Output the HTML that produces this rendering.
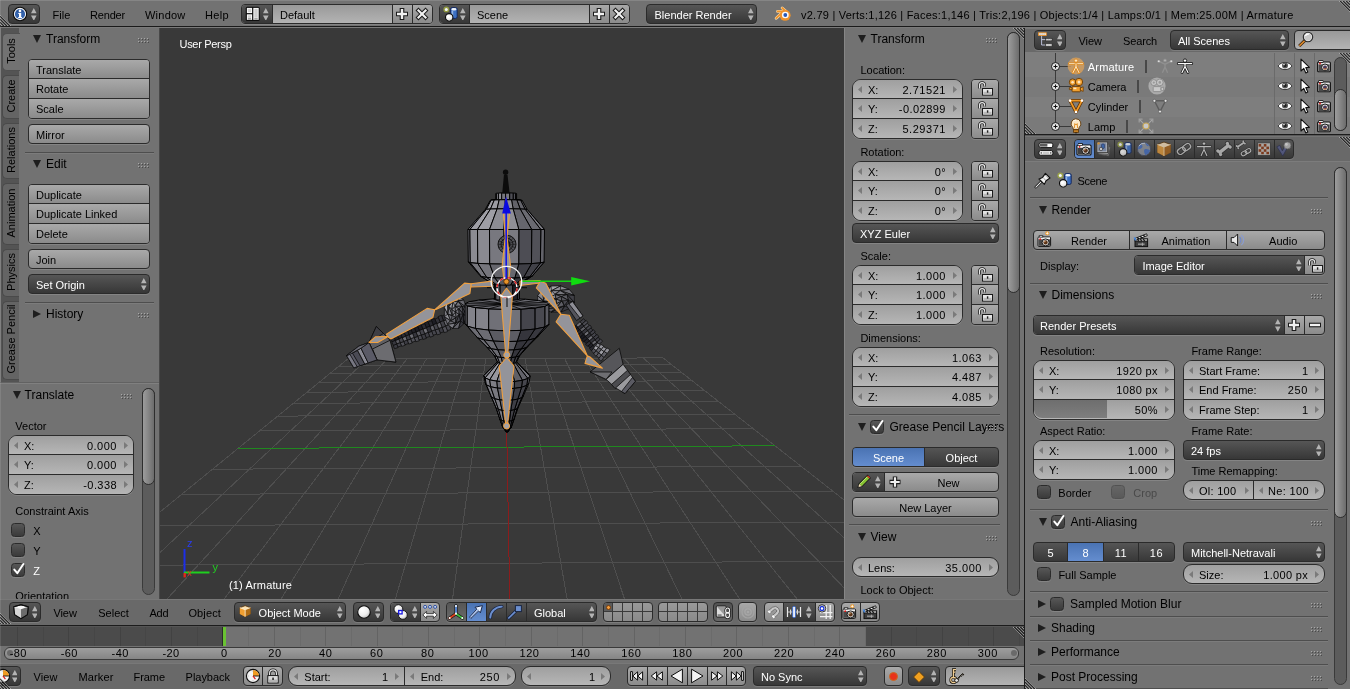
<!DOCTYPE html>
<html><head><meta charset="utf-8"><title>Blender</title>
<style>
html,body{margin:0;padding:0;background:#727272;}
body{width:1350px;height:689px;position:relative;overflow:hidden;font-family:"Liberation Sans",sans-serif;}
#r div,#r span,#r svg{position:absolute;box-sizing:content-box;}
#r{position:absolute;left:0;top:0;width:1350px;height:689px;overflow:hidden;}
.t{white-space:nowrap;line-height:16px;height:16px;}
#r{will-change:transform;transform:translateZ(0);}
.clip{overflow:hidden;}
</style></head><body><div id="r">
<div style="left:160px;top:28px;width:685px;height:571px;background:#393939;"></div>
<!--VIEWPORT-->
<svg style="left:160px;top:28px" width="685" height="571" viewBox="160 28 685 571">
<path d="M347.5 359.2 L663.0 357.9 M339.1 366.1 L671.7 364.7 M329.6 373.8 L681.4 372.3 M319.0 382.5 L692.2 380.8 M307.1 392.2 L704.5 390.4 M293.4 403.3 L718.4 401.4 M277.8 416.1 L734.5 414.0 M259.5 430.9 L753.1 428.6 M212.6 469.2 L801.2 466.3 M181.6 494.4 L832.8 491.1 M143.2 525.7 L872.0 521.9 M94.4 565.5 L921.7 560.9 M30.4 617.7 L987.0 612.1 M-57.6 689.4 L1076.4 682.3 M-185.7 793.8 L1206.3 784.1 M-389.7 960.0 L1412.2 945.7 M347.5 359.2 L-115.1 736.2 M367.3 359.2 L-36.4 735.7 M387.0 359.1 L42.2 735.2 M406.8 359.0 L120.7 734.7 M426.5 358.9 L199.2 734.2 M446.3 358.8 L277.6 733.6 M466.0 358.7 L355.9 733.1 M485.7 358.6 L434.1 732.6 M525.1 358.5 L590.3 731.6 M544.8 358.4 L668.3 731.1 M564.5 358.3 L746.2 730.6 M584.2 358.2 L824.1 730.1 M603.9 358.1 L901.8 729.5 M623.6 358.1 L979.5 729.0 M643.3 358.0 L1057.2 728.5 M663.0 357.9 L1134.7 728.0" stroke="#4e4e4e" stroke-width="1" fill="none" shape-rendering="crispEdges"/>
<path d="M238.1 448.4 L775.0 445.8" stroke="#20881f" stroke-width="1" shape-rendering="crispEdges"/>
<path d="M505.4 358.6 L512.2 732.1" stroke="#8c1c1c" stroke-width="1" shape-rendering="crispEdges"/>
<polygon points="450.9,329.5 447.4,330.6 445.5,325.9 449.0,324.6" fill="#48484f" stroke="#0a0a0a" stroke-width="0.7" stroke-linejoin="round" />
<polygon points="449.0,324.6 445.5,325.9 443.5,320.8 447.0,319.4" fill="#696970" stroke="#0a0a0a" stroke-width="0.7" stroke-linejoin="round" />
<polygon points="447.0,319.4 443.5,320.8 441.7,316.1 445.1,314.5" fill="#2f2f36" stroke="#0a0a0a" stroke-width="0.7" stroke-linejoin="round" />
<polygon points="447.7,331.5 444.1,332.7 442.1,327.5 445.6,326.2" fill="#505057" stroke="#0a0a0a" stroke-width="0.7" stroke-linejoin="round" />
<polygon points="445.6,326.2 442.1,327.5 440.0,321.9 443.4,320.5" fill="#414148" stroke="#0a0a0a" stroke-width="0.7" stroke-linejoin="round" />
<polygon points="443.4,320.5 440.0,321.9 438.0,316.7 441.4,315.2" fill="#323239" stroke="#0a0a0a" stroke-width="0.7" stroke-linejoin="round" />
<polygon points="443.8,331.8 440.3,333.0 438.5,328.5 442.0,327.2" fill="#3a3a41" stroke="#0a0a0a" stroke-width="0.7" stroke-linejoin="round" />
<polygon points="442.0,327.2 438.5,328.5 436.7,323.6 440.1,322.2" fill="#63636a" stroke="#0a0a0a" stroke-width="0.7" stroke-linejoin="round" />
<polygon points="440.1,322.2 436.7,323.6 434.9,319.1 438.3,317.6" fill="#323239" stroke="#0a0a0a" stroke-width="0.7" stroke-linejoin="round" />
<polygon points="440.6,333.8 437.1,334.9 435.2,330.0 438.6,328.7" fill="#494950" stroke="#0a0a0a" stroke-width="0.7" stroke-linejoin="round" />
<polygon points="438.6,328.7 435.2,330.0 433.1,324.7 436.5,323.3" fill="#45454c" stroke="#0a0a0a" stroke-width="0.7" stroke-linejoin="round" />
<polygon points="436.5,323.3 433.1,324.7 431.2,319.8 434.6,318.3" fill="#1e1e25" stroke="#0a0a0a" stroke-width="0.7" stroke-linejoin="round" />
<polygon points="436.7,334.1 433.2,335.3 431.5,331.0 435.0,329.7" fill="#45454c" stroke="#0a0a0a" stroke-width="0.7" stroke-linejoin="round" />
<polygon points="435.0,329.7 431.5,331.0 429.8,326.4 433.2,325.0" fill="#5d5d64" stroke="#0a0a0a" stroke-width="0.7" stroke-linejoin="round" />
<polygon points="433.2,325.0 429.8,326.4 428.1,322.1 431.5,320.6" fill="#292930" stroke="#0a0a0a" stroke-width="0.7" stroke-linejoin="round" />
<polygon points="433.5,336.1 430.0,337.2 428.2,332.6 431.7,331.3" fill="#47474e" stroke="#0a0a0a" stroke-width="0.7" stroke-linejoin="round" />
<polygon points="431.7,331.3 428.2,332.6 426.2,327.5 429.7,326.1" fill="#303037" stroke="#0a0a0a" stroke-width="0.7" stroke-linejoin="round" />
<polygon points="429.7,326.1 426.2,327.5 424.4,322.9 427.8,321.3" fill="#212128" stroke="#0a0a0a" stroke-width="0.7" stroke-linejoin="round" />
<polygon points="429.7,336.5 426.1,337.6 424.6,333.6 428.1,332.3" fill="#404047" stroke="#0a0a0a" stroke-width="0.7" stroke-linejoin="round" />
<polygon points="428.1,332.3 424.6,333.6 422.9,329.2 426.3,327.8" fill="#6d6d74" stroke="#0a0a0a" stroke-width="0.7" stroke-linejoin="round" />
<polygon points="426.3,327.8 422.9,329.2 421.3,325.2 424.7,323.7" fill="#2e2e35" stroke="#0a0a0a" stroke-width="0.7" stroke-linejoin="round" />
<polygon points="426.4,338.4 422.9,339.5 421.2,335.1 424.7,333.9" fill="#3d3d44" stroke="#0a0a0a" stroke-width="0.7" stroke-linejoin="round" />
<polygon points="424.7,333.9 421.2,335.1 419.3,330.4 422.8,329.0" fill="#43434a" stroke="#0a0a0a" stroke-width="0.7" stroke-linejoin="round" />
<polygon points="422.8,329.0 419.3,330.4 417.6,326.0 421.0,324.4" fill="#1f1f26" stroke="#0a0a0a" stroke-width="0.7" stroke-linejoin="round" />
<polygon points="422.6,338.8 419.1,340.0 417.6,336.2 421.1,334.9" fill="#48484f" stroke="#0a0a0a" stroke-width="0.7" stroke-linejoin="round" />
<polygon points="421.1,334.9 417.6,336.2 416.0,332.0 419.4,330.6" fill="#5b5b62" stroke="#0a0a0a" stroke-width="0.7" stroke-linejoin="round" />
<polygon points="419.4,330.6 416.0,332.0 414.5,328.2 417.9,326.7" fill="#1c1c23" stroke="#0a0a0a" stroke-width="0.7" stroke-linejoin="round" />
<polygon points="419.3,340.7 415.8,341.8 414.2,337.7 417.7,336.4" fill="#4e4e55" stroke="#0a0a0a" stroke-width="0.7" stroke-linejoin="round" />
<polygon points="417.7,336.4 414.2,337.7 412.4,333.2 415.9,331.8" fill="#35353c" stroke="#0a0a0a" stroke-width="0.7" stroke-linejoin="round" />
<polygon points="415.9,331.8 412.4,333.2 410.8,329.0 414.2,327.5" fill="#212128" stroke="#0a0a0a" stroke-width="0.7" stroke-linejoin="round" />
<polygon points="415.5,341.1 412.0,342.3 410.6,338.7 414.1,337.4" fill="#515158" stroke="#0a0a0a" stroke-width="0.7" stroke-linejoin="round" />
<polygon points="414.1,337.4 410.6,338.7 409.1,334.8 412.5,333.4" fill="#6c6c73" stroke="#0a0a0a" stroke-width="0.7" stroke-linejoin="round" />
<polygon points="412.5,333.4 409.1,334.8 407.7,331.2 411.1,329.7" fill="#222229" stroke="#0a0a0a" stroke-width="0.7" stroke-linejoin="round" />
<polygon points="412.2,343.0 408.7,344.1 407.2,340.2 410.7,339.0" fill="#515158" stroke="#0a0a0a" stroke-width="0.7" stroke-linejoin="round" />
<polygon points="410.7,339.0 407.2,340.2 405.6,336.0 409.0,334.6" fill="#3c3c43" stroke="#0a0a0a" stroke-width="0.7" stroke-linejoin="round" />
<polygon points="409.0,334.6 405.6,336.0 404.0,332.1 407.4,330.6" fill="#2c2c33" stroke="#0a0a0a" stroke-width="0.7" stroke-linejoin="round" />
<polygon points="408.5,343.5 404.9,344.7 403.6,341.3 407.1,340.0" fill="#3e3e45" stroke="#0a0a0a" stroke-width="0.7" stroke-linejoin="round" />
<polygon points="407.1,340.0 403.6,341.3 402.2,337.7 405.6,336.2" fill="#6e6e75" stroke="#0a0a0a" stroke-width="0.7" stroke-linejoin="round" />
<polygon points="405.6,336.2 402.2,337.7 400.9,334.3 404.3,332.8" fill="#2c2c33" stroke="#0a0a0a" stroke-width="0.7" stroke-linejoin="round" />
<polygon points="405.2,345.3 401.6,346.4 400.2,342.8 403.7,341.5" fill="#515158" stroke="#0a0a0a" stroke-width="0.7" stroke-linejoin="round" />
<polygon points="403.7,341.5 400.2,342.8 398.7,338.8 402.1,337.4" fill="#45454c" stroke="#0a0a0a" stroke-width="0.7" stroke-linejoin="round" />
<polygon points="402.1,337.4 398.7,338.8 397.3,335.2 400.7,333.7" fill="#23232a" stroke="#0a0a0a" stroke-width="0.7" stroke-linejoin="round" />
<polygon points="401.4,345.8 397.8,347.0 396.6,343.8 400.1,342.6" fill="#424249" stroke="#0a0a0a" stroke-width="0.7" stroke-linejoin="round" />
<polygon points="400.1,342.6 396.6,343.8 395.3,340.5 398.8,339.1" fill="#5b5b62" stroke="#0a0a0a" stroke-width="0.7" stroke-linejoin="round" />
<polygon points="398.8,339.1 395.3,340.5 394.1,337.3 397.5,335.8" fill="#1f1f26" stroke="#0a0a0a" stroke-width="0.7" stroke-linejoin="round" />
<polygon points="398.1,347.6 394.5,348.7 393.2,345.3 396.7,344.1" fill="#3b3b42" stroke="#0a0a0a" stroke-width="0.7" stroke-linejoin="round" />
<polygon points="396.7,344.1 393.2,345.3 391.8,341.7 395.2,340.3" fill="#37373e" stroke="#0a0a0a" stroke-width="0.7" stroke-linejoin="round" />
<polygon points="395.2,340.3 391.8,341.7 390.5,338.3 393.9,336.7" fill="#2a2a31" stroke="#0a0a0a" stroke-width="0.7" stroke-linejoin="round" />
<polygon points="458.6,328.4 452.6,328.5 460.5,320.5" fill="#65656c" stroke="#0a0a0a" stroke-width="0.7" stroke-linejoin="round" />
<polygon points="452.6,328.5 447.4,324.1 455.6,323.2" fill="#7a7a81" stroke="#0a0a0a" stroke-width="0.7" stroke-linejoin="round" />
<polygon points="447.4,324.1 444.4,316.5 450.7,320.7" fill="#6c6c73" stroke="#0a0a0a" stroke-width="0.7" stroke-linejoin="round" />
<polygon points="444.4,316.5 444.4,307.7 450.7,320.7" fill="#7b7b82" stroke="#0a0a0a" stroke-width="0.7" stroke-linejoin="round" />
<polygon points="444.4,307.7 447.3,300.1 448.0,314.1" fill="#a9a9b0" stroke="#0a0a0a" stroke-width="0.7" stroke-linejoin="round" />
<polygon points="447.3,300.1 452.4,295.6 448.9,306.5" fill="#a5a5ac" stroke="#0a0a0a" stroke-width="0.7" stroke-linejoin="round" />
<polygon points="452.4,295.6 458.4,295.5 448.9,306.5" fill="#96969d" stroke="#0a0a0a" stroke-width="0.7" stroke-linejoin="round" />
<polygon points="458.4,295.5 463.6,299.9 452.8,301.5" fill="#73737a" stroke="#0a0a0a" stroke-width="0.7" stroke-linejoin="round" />
<polygon points="463.6,299.9 466.6,307.5 458.0,301.4" fill="#68686f" stroke="#0a0a0a" stroke-width="0.7" stroke-linejoin="round" />
<polygon points="466.6,307.5 466.6,316.3 462.0,306.2" fill="#525259" stroke="#0a0a0a" stroke-width="0.7" stroke-linejoin="round" />
<polygon points="466.6,316.3 463.7,323.9 463.0,313.8" fill="#46464d" stroke="#0a0a0a" stroke-width="0.7" stroke-linejoin="round" />
<polygon points="463.7,323.9 458.6,328.4 463.0,313.8" fill="#36363d" stroke="#0a0a0a" stroke-width="0.7" stroke-linejoin="round" />
<polygon points="460.5,320.5 455.6,323.2 452.6,328.5" fill="#54545b" stroke="#0a0a0a" stroke-width="0.7" stroke-linejoin="round" />
<polygon points="455.6,323.2 450.7,320.7 447.4,324.1" fill="#696970" stroke="#0a0a0a" stroke-width="0.7" stroke-linejoin="round" />
<polygon points="450.7,320.7 448.0,314.1 444.4,316.5" fill="#8f8f96" stroke="#0a0a0a" stroke-width="0.7" stroke-linejoin="round" />
<polygon points="448.0,314.1 448.9,306.5 447.3,300.1" fill="#ababb2" stroke="#0a0a0a" stroke-width="0.7" stroke-linejoin="round" />
<polygon points="448.9,306.5 452.8,301.5 452.4,295.6" fill="#a6a6ad" stroke="#0a0a0a" stroke-width="0.7" stroke-linejoin="round" />
<polygon points="452.8,301.5 458.0,301.4 458.4,295.5" fill="#84848b" stroke="#0a0a0a" stroke-width="0.7" stroke-linejoin="round" />
<polygon points="458.0,301.4 462.0,306.2 466.6,307.5" fill="#5f5f66" stroke="#0a0a0a" stroke-width="0.7" stroke-linejoin="round" />
<polygon points="462.0,306.2 463.0,313.8 466.6,316.3" fill="#44444b" stroke="#0a0a0a" stroke-width="0.7" stroke-linejoin="round" />
<polygon points="463.0,313.8 460.5,320.5 463.7,323.9" fill="#33333a" stroke="#0a0a0a" stroke-width="0.7" stroke-linejoin="round" />
<polygon points="460.5,320.5 455.6,323.2 459.0,314.3" fill="#43434a" stroke="#0a0a0a" stroke-width="0.7" stroke-linejoin="round" />
<polygon points="455.6,323.2 450.7,320.7 455.9,317.6" fill="#65656c" stroke="#0a0a0a" stroke-width="0.7" stroke-linejoin="round" />
<polygon points="450.7,320.7 448.0,314.1 455.9,317.6" fill="#6d6d74" stroke="#0a0a0a" stroke-width="0.7" stroke-linejoin="round" />
<polygon points="448.0,314.1 448.9,306.5 452.4,315.3" fill="#818188" stroke="#0a0a0a" stroke-width="0.7" stroke-linejoin="round" />
<polygon points="448.9,306.5 452.8,301.5 452.0,309.7" fill="#9c9ca3" stroke="#0a0a0a" stroke-width="0.7" stroke-linejoin="round" />
<polygon points="452.8,301.5 458.0,301.4 452.0,309.7" fill="#83838a" stroke="#0a0a0a" stroke-width="0.7" stroke-linejoin="round" />
<polygon points="458.0,301.4 462.0,306.2 455.1,306.4" fill="#74747b" stroke="#0a0a0a" stroke-width="0.7" stroke-linejoin="round" />
<polygon points="462.0,306.2 463.0,313.8 458.6,308.7" fill="#525259" stroke="#0a0a0a" stroke-width="0.7" stroke-linejoin="round" />
<polygon points="463.0,313.8 460.5,320.5 458.6,308.7" fill="#424249" stroke="#0a0a0a" stroke-width="0.7" stroke-linejoin="round" />
<polygon points="459.0,314.3 455.9,317.6 455.6,323.2" fill="#57575e" stroke="#0a0a0a" stroke-width="0.7" stroke-linejoin="round" />
<polygon points="455.9,317.6 452.4,315.3 450.7,320.7" fill="#5f5f66" stroke="#0a0a0a" stroke-width="0.7" stroke-linejoin="round" />
<polygon points="452.4,315.3 452.0,309.7 448.9,306.5" fill="#84848b" stroke="#0a0a0a" stroke-width="0.7" stroke-linejoin="round" />
<polygon points="452.0,309.7 455.1,306.4 452.8,301.5" fill="#9999a0" stroke="#0a0a0a" stroke-width="0.7" stroke-linejoin="round" />
<polygon points="455.1,306.4 458.6,308.7 462.0,306.2" fill="#74747b" stroke="#0a0a0a" stroke-width="0.7" stroke-linejoin="round" />
<polygon points="458.6,308.7 459.0,314.3 463.0,313.8" fill="#4f4f56" stroke="#0a0a0a" stroke-width="0.7" stroke-linejoin="round" />
<polygon points="459.0,314.3 455.9,317.6 455.5,312.0" fill="#77777e" stroke="#0a0a0a" stroke-width="0.7" stroke-linejoin="round" />
<polygon points="455.9,317.6 452.4,315.3 455.5,312.0" fill="#7b7b82" stroke="#0a0a0a" stroke-width="0.7" stroke-linejoin="round" />
<polygon points="452.4,315.3 452.0,309.7 455.5,312.0" fill="#828289" stroke="#0a0a0a" stroke-width="0.7" stroke-linejoin="round" />
<polygon points="452.0,309.7 455.1,306.4 455.5,312.0" fill="#8b8b92" stroke="#0a0a0a" stroke-width="0.7" stroke-linejoin="round" />
<polygon points="455.1,306.4 458.6,308.7 455.5,312.0" fill="#7d7d84" stroke="#0a0a0a" stroke-width="0.7" stroke-linejoin="round" />
<polygon points="458.6,308.7 459.0,314.3 455.5,312.0" fill="#74747b" stroke="#0a0a0a" stroke-width="0.7" stroke-linejoin="round" />
<polygon points="376.3,326.5 383.5,333.5 390.0,340.3 395.9,362.1 377.0,359.9 369.0,342.5" fill="#5e5e62" stroke="#0a0a0a" stroke-width="0.8" stroke-linejoin="round" />
<polygon points="376.3,326.5 383.5,333.5 372.0,340.5 369.0,342.5" fill="#3e3e44" stroke="#0a0a0a" stroke-width="0.8" stroke-linejoin="round" />
<polygon points="390.0,340.3 395.9,362.1 377.0,359.9 372.5,349.0" fill="#6c6c70" stroke="#0a0a0a" stroke-width="0.8" stroke-linejoin="round" />
<polygon points="346.5,355.5 353.8,367.9 377.0,359.9 369.0,342.5 358.9,346.1" fill="#5c5c68" stroke="#0a0a0a" stroke-width="0.8" stroke-linejoin="round" />
<polygon points="346.5,355.5 353.8,367.9 357.2,366.7 349.9,354.3" fill="#777782" stroke="#0a0a0a" stroke-width="0.8" stroke-linejoin="round" />
<polygon points="352.5,353.2 360.0,365.8 364.8,364.1 357.5,350.3" fill="#4a4a54" stroke="#0a0a0a" stroke-width="0.8" stroke-linejoin="round" />
<polygon points="357.5,350.3 364.8,364.1 368.2,362.9 361.0,348.2" fill="#8a8a94" stroke="#0a0a0a" stroke-width="0.8" stroke-linejoin="round" />
<polygon points="361.0,348.2 368.2,362.9 377.0,359.9 369.0,342.5" fill="#5a5a66" stroke="#0a0a0a" stroke-width="0.8" stroke-linejoin="round" />
<polygon points="346.5,355.5 358.9,346.1 369.0,342.5 361.0,348.2 349.9,354.3" fill="#6a6a74" stroke="#0a0a0a" stroke-width="0.8" stroke-linejoin="round" />
<polygon points="561.1,312.0 551.2,312.1 564.2,305.7" fill="#45454c" stroke="#0a0a0a" stroke-width="0.7" stroke-linejoin="round" />
<polygon points="551.2,312.1 542.7,308.6 556.2,307.9" fill="#55555c" stroke="#0a0a0a" stroke-width="0.7" stroke-linejoin="round" />
<polygon points="542.7,308.6 537.7,302.6 548.1,305.9" fill="#7b7b82" stroke="#0a0a0a" stroke-width="0.7" stroke-linejoin="round" />
<polygon points="537.7,302.6 537.6,295.6 548.1,305.9" fill="#7e7e85" stroke="#0a0a0a" stroke-width="0.7" stroke-linejoin="round" />
<polygon points="537.6,295.6 542.4,289.5 543.7,300.7" fill="#88888f" stroke="#0a0a0a" stroke-width="0.7" stroke-linejoin="round" />
<polygon points="542.4,289.5 550.9,286.0 545.0,294.7" fill="#96969d" stroke="#0a0a0a" stroke-width="0.7" stroke-linejoin="round" />
<polygon points="550.9,286.0 560.8,285.9 545.0,294.7" fill="#a1a1a8" stroke="#0a0a0a" stroke-width="0.7" stroke-linejoin="round" />
<polygon points="560.8,285.9 569.3,289.4 551.5,290.7" fill="#898990" stroke="#0a0a0a" stroke-width="0.7" stroke-linejoin="round" />
<polygon points="569.3,289.4 574.3,295.4 560.1,290.6" fill="#6f6f76" stroke="#0a0a0a" stroke-width="0.7" stroke-linejoin="round" />
<polygon points="574.3,295.4 574.4,302.4 566.8,294.4" fill="#414148" stroke="#0a0a0a" stroke-width="0.7" stroke-linejoin="round" />
<polygon points="574.4,302.4 569.6,308.5 568.4,300.4" fill="#44444b" stroke="#0a0a0a" stroke-width="0.7" stroke-linejoin="round" />
<polygon points="569.6,308.5 561.1,312.0 568.4,300.4" fill="#3b3b42" stroke="#0a0a0a" stroke-width="0.7" stroke-linejoin="round" />
<polygon points="564.2,305.7 556.2,307.9 551.2,312.1" fill="#494950" stroke="#0a0a0a" stroke-width="0.7" stroke-linejoin="round" />
<polygon points="556.2,307.9 548.1,305.9 542.7,308.6" fill="#5c5c63" stroke="#0a0a0a" stroke-width="0.7" stroke-linejoin="round" />
<polygon points="548.1,305.9 543.7,300.7 537.7,302.6" fill="#78787f" stroke="#0a0a0a" stroke-width="0.7" stroke-linejoin="round" />
<polygon points="543.7,300.7 545.0,294.7 542.4,289.5" fill="#a8a8af" stroke="#0a0a0a" stroke-width="0.7" stroke-linejoin="round" />
<polygon points="545.0,294.7 551.5,290.7 550.9,286.0" fill="#a1a1a8" stroke="#0a0a0a" stroke-width="0.7" stroke-linejoin="round" />
<polygon points="551.5,290.7 560.1,290.6 560.8,285.9" fill="#909097" stroke="#0a0a0a" stroke-width="0.7" stroke-linejoin="round" />
<polygon points="560.1,290.6 566.8,294.4 574.3,295.4" fill="#6f6f76" stroke="#0a0a0a" stroke-width="0.7" stroke-linejoin="round" />
<polygon points="566.8,294.4 568.4,300.4 574.4,302.4" fill="#414148" stroke="#0a0a0a" stroke-width="0.7" stroke-linejoin="round" />
<polygon points="568.4,300.4 564.2,305.7 569.6,308.5" fill="#3f3f46" stroke="#0a0a0a" stroke-width="0.7" stroke-linejoin="round" />
<polygon points="564.2,305.7 556.2,307.9 561.7,300.9" fill="#5d5d64" stroke="#0a0a0a" stroke-width="0.7" stroke-linejoin="round" />
<polygon points="556.2,307.9 548.1,305.9 556.6,303.4" fill="#707077" stroke="#0a0a0a" stroke-width="0.7" stroke-linejoin="round" />
<polygon points="548.1,305.9 543.7,300.7 556.6,303.4" fill="#85858c" stroke="#0a0a0a" stroke-width="0.7" stroke-linejoin="round" />
<polygon points="543.7,300.7 545.0,294.7 550.9,301.6" fill="#97979e" stroke="#0a0a0a" stroke-width="0.7" stroke-linejoin="round" />
<polygon points="545.0,294.7 551.5,290.7 550.3,297.1" fill="#797980" stroke="#0a0a0a" stroke-width="0.7" stroke-linejoin="round" />
<polygon points="551.5,290.7 560.1,290.6 550.3,297.1" fill="#87878e" stroke="#0a0a0a" stroke-width="0.7" stroke-linejoin="round" />
<polygon points="560.1,290.6 566.8,294.4 555.4,294.6" fill="#797980" stroke="#0a0a0a" stroke-width="0.7" stroke-linejoin="round" />
<polygon points="566.8,294.4 568.4,300.4 561.1,296.4" fill="#5e5e65" stroke="#0a0a0a" stroke-width="0.7" stroke-linejoin="round" />
<polygon points="568.4,300.4 564.2,305.7 561.1,296.4" fill="#494950" stroke="#0a0a0a" stroke-width="0.7" stroke-linejoin="round" />
<polygon points="561.7,300.9 556.6,303.4 556.2,307.9" fill="#5e5e65" stroke="#0a0a0a" stroke-width="0.7" stroke-linejoin="round" />
<polygon points="556.6,303.4 550.9,301.6 548.1,305.9" fill="#5d5d64" stroke="#0a0a0a" stroke-width="0.7" stroke-linejoin="round" />
<polygon points="550.9,301.6 550.3,297.1 545.0,294.7" fill="#96969d" stroke="#0a0a0a" stroke-width="0.7" stroke-linejoin="round" />
<polygon points="550.3,297.1 555.4,294.6 551.5,290.7" fill="#93939a" stroke="#0a0a0a" stroke-width="0.7" stroke-linejoin="round" />
<polygon points="555.4,294.6 561.1,296.4 566.8,294.4" fill="#6e6e75" stroke="#0a0a0a" stroke-width="0.7" stroke-linejoin="round" />
<polygon points="561.1,296.4 561.7,300.9 568.4,300.4" fill="#54545b" stroke="#0a0a0a" stroke-width="0.7" stroke-linejoin="round" />
<polygon points="561.7,300.9 556.6,303.4 556.0,299.0" fill="#78787f" stroke="#0a0a0a" stroke-width="0.7" stroke-linejoin="round" />
<polygon points="556.6,303.4 550.9,301.6 556.0,299.0" fill="#717178" stroke="#0a0a0a" stroke-width="0.7" stroke-linejoin="round" />
<polygon points="550.9,301.6 550.3,297.1 556.0,299.0" fill="#88888f" stroke="#0a0a0a" stroke-width="0.7" stroke-linejoin="round" />
<polygon points="550.3,297.1 555.4,294.6 556.0,299.0" fill="#88888f" stroke="#0a0a0a" stroke-width="0.7" stroke-linejoin="round" />
<polygon points="555.4,294.6 561.1,296.4 556.0,299.0" fill="#717178" stroke="#0a0a0a" stroke-width="0.7" stroke-linejoin="round" />
<polygon points="561.1,296.4 561.7,300.9 556.0,299.0" fill="#64646b" stroke="#0a0a0a" stroke-width="0.7" stroke-linejoin="round" />
<polygon points="566.0,305.0 572.5,301.5 583.0,316.0 576.5,320.5" fill="#54545c" stroke="#0a0a0a" stroke-width="0.8" stroke-linejoin="round" />
<polygon points="569.0,304.0 572.5,301.5 583.0,316.0 580.0,318.0" fill="#8e8e96" stroke="#0a0a0a" stroke-width="0.8" stroke-linejoin="round" />
<polygon points="583.7,318.7 585.6,321.0 581.9,324.1 580.0,321.8" fill="#3f3f46" stroke="#0a0a0a" stroke-width="0.7" stroke-linejoin="round" />
<polygon points="580.0,321.8 581.9,324.1 577.9,327.4 576.0,325.2" fill="#6f6f76" stroke="#0a0a0a" stroke-width="0.7" stroke-linejoin="round" />
<polygon points="576.0,325.2 577.9,327.4 574.2,330.5 572.3,328.3" fill="#1b1b22" stroke="#0a0a0a" stroke-width="0.7" stroke-linejoin="round" />
<polygon points="586.2,320.4 588.0,322.7 584.0,326.2 582.1,323.9" fill="#4a4a51" stroke="#0a0a0a" stroke-width="0.7" stroke-linejoin="round" />
<polygon points="582.1,323.9 584.0,326.2 579.6,329.8 577.7,327.6" fill="#2e2e35" stroke="#0a0a0a" stroke-width="0.7" stroke-linejoin="round" />
<polygon points="577.7,327.6 579.6,329.8 575.6,333.3 573.6,331.1" fill="#1d1d24" stroke="#0a0a0a" stroke-width="0.7" stroke-linejoin="round" />
<polygon points="587.4,323.3 589.2,325.6 585.6,328.6 583.8,326.4" fill="#515158" stroke="#0a0a0a" stroke-width="0.7" stroke-linejoin="round" />
<polygon points="583.8,326.4 585.6,328.6 581.8,331.9 579.8,329.6" fill="#5d5d64" stroke="#0a0a0a" stroke-width="0.7" stroke-linejoin="round" />
<polygon points="579.8,329.6 581.8,331.9 578.2,334.9 576.2,332.7" fill="#27272e" stroke="#0a0a0a" stroke-width="0.7" stroke-linejoin="round" />
<polygon points="589.9,325.0 591.7,327.4 587.7,330.7 585.9,328.4" fill="#45454c" stroke="#0a0a0a" stroke-width="0.7" stroke-linejoin="round" />
<polygon points="585.9,328.4 587.7,330.7 583.5,334.3 581.5,332.1" fill="#36363d" stroke="#0a0a0a" stroke-width="0.7" stroke-linejoin="round" />
<polygon points="581.5,332.1 583.5,334.3 579.5,337.6 577.5,335.5" fill="#23232a" stroke="#0a0a0a" stroke-width="0.7" stroke-linejoin="round" />
<polygon points="591.0,327.9 592.8,330.2 589.4,333.2 587.5,330.9" fill="#3e3e45" stroke="#0a0a0a" stroke-width="0.7" stroke-linejoin="round" />
<polygon points="587.5,330.9 589.4,333.2 585.6,336.3 583.7,334.1" fill="#6b6b72" stroke="#0a0a0a" stroke-width="0.7" stroke-linejoin="round" />
<polygon points="583.7,334.1 585.6,336.3 582.2,339.3 580.2,337.1" fill="#1a1a21" stroke="#0a0a0a" stroke-width="0.7" stroke-linejoin="round" />
<polygon points="593.5,329.7 595.3,332.0 591.5,335.3 589.6,333.0" fill="#3f3f46" stroke="#0a0a0a" stroke-width="0.7" stroke-linejoin="round" />
<polygon points="589.6,333.0 591.5,335.3 587.3,338.7 585.4,336.5" fill="#2c2c33" stroke="#0a0a0a" stroke-width="0.7" stroke-linejoin="round" />
<polygon points="585.4,336.5 587.3,338.7 583.5,342.0 581.5,339.8" fill="#1e1e25" stroke="#0a0a0a" stroke-width="0.7" stroke-linejoin="round" />
<polygon points="594.7,332.5 596.5,334.9 593.1,337.7 591.2,335.4" fill="#43434a" stroke="#0a0a0a" stroke-width="0.7" stroke-linejoin="round" />
<polygon points="591.2,335.4 593.1,337.7 589.5,340.8 587.6,338.6" fill="#6d6d74" stroke="#0a0a0a" stroke-width="0.7" stroke-linejoin="round" />
<polygon points="587.6,338.6 589.5,340.8 586.1,343.6 584.1,341.5" fill="#212128" stroke="#0a0a0a" stroke-width="0.7" stroke-linejoin="round" />
<polygon points="597.1,334.3 598.9,336.7 595.2,339.8 593.3,337.5" fill="#3c3c43" stroke="#0a0a0a" stroke-width="0.7" stroke-linejoin="round" />
<polygon points="593.3,337.5 595.2,339.8 591.2,343.2 589.3,341.0" fill="#323239" stroke="#0a0a0a" stroke-width="0.7" stroke-linejoin="round" />
<polygon points="589.3,341.0 591.2,343.2 587.5,346.3 585.5,344.2" fill="#2f2f36" stroke="#0a0a0a" stroke-width="0.7" stroke-linejoin="round" />
<polygon points="598.3,337.2 600.1,339.5 596.9,342.3 595.0,340.0" fill="#3b3b42" stroke="#0a0a0a" stroke-width="0.7" stroke-linejoin="round" />
<polygon points="595.0,340.0 596.9,342.3 593.3,345.2 591.4,343.0" fill="#66666d" stroke="#0a0a0a" stroke-width="0.7" stroke-linejoin="round" />
<polygon points="591.4,343.0 593.3,345.2 590.1,348.0 588.1,345.8" fill="#212128" stroke="#0a0a0a" stroke-width="0.7" stroke-linejoin="round" />
<polygon points="600.7,339.0 602.6,341.3 598.9,344.4 597.1,342.1" fill="#494950" stroke="#0a0a0a" stroke-width="0.7" stroke-linejoin="round" />
<polygon points="597.1,342.1 598.9,344.4 595.1,347.6 593.1,345.4" fill="#34343b" stroke="#0a0a0a" stroke-width="0.7" stroke-linejoin="round" />
<polygon points="593.1,345.4 595.1,347.6 591.4,350.7 589.5,348.5" fill="#28282f" stroke="#0a0a0a" stroke-width="0.7" stroke-linejoin="round" />
<polygon points="597.6,343.0 600.5,344.9 598.4,347.6 595.6,345.6" fill="#8b8b92" stroke="#0a0a0a" stroke-width="0.7" stroke-linejoin="round" />
<polygon points="595.6,345.6 598.4,347.6 596.1,350.6 593.4,348.4" fill="#a6a6ad" stroke="#0a0a0a" stroke-width="0.7" stroke-linejoin="round" />
<polygon points="593.4,348.4 596.1,350.6 594.0,353.4 591.4,351.0" fill="#515158" stroke="#0a0a0a" stroke-width="0.7" stroke-linejoin="round" />
<polygon points="600.9,344.4 603.9,346.2 601.4,349.5 598.5,347.5" fill="#94949b" stroke="#0a0a0a" stroke-width="0.7" stroke-linejoin="round" />
<polygon points="598.5,347.5 601.4,349.5 598.6,353.0 596.0,350.8" fill="#626269" stroke="#0a0a0a" stroke-width="0.7" stroke-linejoin="round" />
<polygon points="596.0,350.8 598.6,353.0 596.1,356.3 593.6,353.9" fill="#5a5a61" stroke="#0a0a0a" stroke-width="0.7" stroke-linejoin="round" />
<polygon points="603.5,346.7 606.5,348.5 604.1,351.7 601.2,349.7" fill="#95959c" stroke="#0a0a0a" stroke-width="0.7" stroke-linejoin="round" />
<polygon points="601.2,349.7 604.1,351.7 601.4,355.1 598.8,352.8" fill="#9f9fa6" stroke="#0a0a0a" stroke-width="0.7" stroke-linejoin="round" />
<polygon points="598.8,352.8 601.4,355.1 599.0,358.2 596.5,355.8" fill="#5b5b62" stroke="#0a0a0a" stroke-width="0.7" stroke-linejoin="round" />
<polygon points="606.9,347.9 610.0,349.7 607.1,353.5 604.2,351.5" fill="#8e8e95" stroke="#0a0a0a" stroke-width="0.7" stroke-linejoin="round" />
<polygon points="604.2,351.5 607.1,353.5 603.9,357.5 601.3,355.3" fill="#626269" stroke="#0a0a0a" stroke-width="0.7" stroke-linejoin="round" />
<polygon points="601.3,355.3 603.9,357.5 601.0,361.3 598.6,358.8" fill="#57575e" stroke="#0a0a0a" stroke-width="0.7" stroke-linejoin="round" />
<polygon points="619.3,348.3 590.1,371.9 606.1,379.4 623.1,364.3" fill="#56565a" stroke="#0a0a0a" stroke-width="0.8" stroke-linejoin="round" />
<polygon points="590.1,371.9 606.1,379.4 612.0,372.0" fill="#6e6e72" stroke="#0a0a0a" stroke-width="0.8" stroke-linejoin="round" />
<polygon points="606.1,379.4 623.1,364.3 635.4,381.3 625.0,393.6 615.6,387.9" fill="#9a9a9e" stroke="#0a0a0a" stroke-width="0.8" stroke-linejoin="round" />
<polygon points="611.5,384.5 627.5,370.3 630.5,374.5 615.0,388.5" fill="#4c4c50" stroke="#0a0a0a" stroke-width="0.8" stroke-linejoin="round" />
<polygon points="625.0,393.6 635.4,381.3 632.5,377.5 621.5,391.5" fill="#5a5a62" stroke="#0a0a0a" stroke-width="0.8" stroke-linejoin="round" />
<polygon points="507.5,359.9 503.9,360.0 499.4,370.5 508.3,370.2" fill="#7a7a81" stroke="#000" stroke-width="1.00" stroke-linejoin="round"/>
<polygon points="511.1,360.1 507.5,359.9 508.3,370.2 517.1,370.8" fill="#7a7a81" stroke="#000" stroke-width="1.00" stroke-linejoin="round"/>
<polygon points="503.9,360.0 500.7,360.4 491.6,371.7 499.4,370.5" fill="#7a7a81" stroke="#000" stroke-width="1.00" stroke-linejoin="round"/>
<polygon points="514.1,360.6 511.1,360.1 517.1,370.8 524.3,372.1" fill="#7a7a81" stroke="#000" stroke-width="1.00" stroke-linejoin="round"/>
<polygon points="500.7,360.4 498.4,361.1 486.1,373.5 491.6,371.7" fill="#7a7a81" stroke="#000" stroke-width="1.00" stroke-linejoin="round"/>
<polygon points="516.0,361.3 514.1,360.6 524.3,372.1 528.9,374.1" fill="#7a7a81" stroke="#000" stroke-width="1.00" stroke-linejoin="round"/>
<polygon points="498.4,361.1 497.5,361.9 483.8,375.7 486.1,373.5" fill="#7a7a81" stroke="#000" stroke-width="1.00" stroke-linejoin="round"/>
<polygon points="548.9,324.4 546.7,321.8 536.3,334.1 537.9,336.3" fill="#505057" stroke="#000" stroke-width="1.00" stroke-linejoin="round"/>
<polygon points="537.9,336.3 536.3,334.1 526.8,344.6 528.0,346.2" fill="#4e4e55" stroke="#000" stroke-width="1.00" stroke-linejoin="round"/>
<polygon points="528.0,346.2 526.8,344.6 519.3,354.1 520.0,355.2" fill="#515158" stroke="#000" stroke-width="1.00" stroke-linejoin="round"/>
<polygon points="516.5,362.1 516.0,361.3 528.9,374.1 530.2,376.3" fill="#7a7a81" stroke="#000" stroke-width="1.00" stroke-linejoin="round"/>
<polygon points="511.4,427.1 511.2,426.5 507.5,431.9 507.5,432.0" fill="#53535a" stroke="#000" stroke-width="1.00" stroke-linejoin="round"/>
<polygon points="465.1,303.7 467.3,305.8 467.3,326.2 465.1,323.6" fill="#68686f" stroke="#000" stroke-width="1.00" stroke-linejoin="round"/>
<polygon points="465.1,323.6 467.3,326.2 477.7,337.9 476.1,335.7" fill="#54545b" stroke="#000" stroke-width="1.00" stroke-linejoin="round"/>
<polygon points="476.1,335.7 477.7,337.9 487.2,347.4 486.0,345.8" fill="#53535a" stroke="#000" stroke-width="1.00" stroke-linejoin="round"/>
<polygon points="486.0,345.8 487.2,347.4 494.7,355.9 494.0,354.8" fill="#55555c" stroke="#000" stroke-width="1.00" stroke-linejoin="round"/>
<polygon points="494.0,354.8 494.7,355.9 498.0,362.7 497.5,361.9" fill="#5e5e65" stroke="#000" stroke-width="1.00" stroke-linejoin="round"/>
<polygon points="497.5,361.9 498.0,362.7 485.1,377.9 483.8,375.7" fill="#7e7e85" stroke="#000" stroke-width="1.00" stroke-linejoin="round"/>
<polygon points="483.8,375.7 485.1,377.9 486.4,384.9 485.2,382.7" fill="#65656c" stroke="#000" stroke-width="1.00" stroke-linejoin="round"/>
<polygon points="485.2,382.7 486.4,384.9 491.6,397.2 490.7,395.4" fill="#606067" stroke="#000" stroke-width="1.00" stroke-linejoin="round"/>
<polygon points="490.7,395.4 491.6,397.2 496.4,408.4 495.8,407.1" fill="#606067" stroke="#000" stroke-width="1.00" stroke-linejoin="round"/>
<polygon points="495.8,407.1 496.4,408.4 500.2,419.8 499.8,418.9" fill="#626269" stroke="#000" stroke-width="1.00" stroke-linejoin="round"/>
<polygon points="499.8,418.9 500.2,419.8 502.8,427.5 502.6,426.9" fill="#626269" stroke="#000" stroke-width="1.00" stroke-linejoin="round"/>
<polygon points="502.6,426.9 502.8,427.5 506.5,432.1 506.5,432.0" fill="#57575e" stroke="#000" stroke-width="1.00" stroke-linejoin="round"/>
<polygon points="544.8,306.3 548.9,304.3 548.9,324.4 544.8,327.0" fill="#5c5c63" stroke="#000" stroke-width="1.00" stroke-linejoin="round"/>
<polygon points="544.8,327.0 548.9,324.4 537.9,336.3 534.9,338.5" fill="#494950" stroke="#000" stroke-width="1.00" stroke-linejoin="round"/>
<polygon points="534.9,338.5 537.9,336.3 528.0,346.2 525.9,347.8" fill="#47474e" stroke="#000" stroke-width="1.00" stroke-linejoin="round"/>
<polygon points="525.9,347.8 528.0,346.2 520.0,355.2 518.7,356.2" fill="#4a4a51" stroke="#000" stroke-width="1.00" stroke-linejoin="round"/>
<polygon points="518.7,356.2 520.0,355.2 516.5,362.1 515.6,362.9" fill="#525259" stroke="#000" stroke-width="1.00" stroke-linejoin="round"/>
<polygon points="515.6,362.9 516.5,362.1 530.2,376.3 527.9,378.5" fill="#73737a" stroke="#000" stroke-width="1.00" stroke-linejoin="round"/>
<polygon points="527.9,378.5 530.2,376.3 528.8,383.3 526.6,385.5" fill="#58585f" stroke="#000" stroke-width="1.00" stroke-linejoin="round"/>
<polygon points="526.6,385.5 528.8,383.3 523.3,396.0 521.7,397.7" fill="#54545b" stroke="#000" stroke-width="1.00" stroke-linejoin="round"/>
<polygon points="521.7,397.7 523.3,396.0 518.2,407.5 517.1,408.8" fill="#53535a" stroke="#000" stroke-width="1.00" stroke-linejoin="round"/>
<polygon points="517.1,408.8 518.2,407.5 514.2,419.1 513.5,420.0" fill="#56565d" stroke="#000" stroke-width="1.00" stroke-linejoin="round"/>
<polygon points="513.5,420.0 514.2,419.1 511.4,427.1 511.0,427.6" fill="#55555c" stroke="#000" stroke-width="1.00" stroke-linejoin="round"/>
<polygon points="511.0,427.6 511.4,427.1 507.5,432.0 507.5,432.1" fill="#4c4c53" stroke="#000" stroke-width="1.00" stroke-linejoin="round"/>
<polygon points="467.3,305.8 475.6,307.6 475.6,328.5 467.3,326.2" fill="#83838a" stroke="#000" stroke-width="1.00" stroke-linejoin="round"/>
<polygon points="467.3,326.2 475.6,328.5 483.9,339.8 477.7,337.9" fill="#6d6d74" stroke="#000" stroke-width="1.00" stroke-linejoin="round"/>
<polygon points="477.7,337.9 483.9,339.8 491.3,348.8 487.2,347.4" fill="#6b6b72" stroke="#000" stroke-width="1.00" stroke-linejoin="round"/>
<polygon points="487.2,347.4 491.3,348.8 497.3,356.9 494.7,355.9" fill="#6d6d74" stroke="#000" stroke-width="1.00" stroke-linejoin="round"/>
<polygon points="494.7,355.9 497.3,356.9 499.9,363.4 498.0,362.7" fill="#78787f" stroke="#000" stroke-width="1.00" stroke-linejoin="round"/>
<polygon points="498.0,362.7 499.9,363.4 489.7,379.9 485.1,377.9" fill="#96969d" stroke="#000" stroke-width="1.00" stroke-linejoin="round"/>
<polygon points="485.1,377.9 489.7,379.9 490.7,386.8 486.4,384.9" fill="#808087" stroke="#000" stroke-width="1.00" stroke-linejoin="round"/>
<polygon points="486.4,384.9 490.7,386.8 494.8,398.8 491.6,397.2" fill="#7a7a81" stroke="#000" stroke-width="1.00" stroke-linejoin="round"/>
<polygon points="491.6,397.2 494.8,398.8 498.6,409.6 496.4,408.4" fill="#7a7a81" stroke="#000" stroke-width="1.00" stroke-linejoin="round"/>
<polygon points="496.4,408.4 498.6,409.6 501.6,420.5 500.2,419.8" fill="#7d7d84" stroke="#000" stroke-width="1.00" stroke-linejoin="round"/>
<polygon points="500.2,419.8 501.6,420.5 503.7,428.0 502.8,427.5" fill="#7c7c83" stroke="#000" stroke-width="1.00" stroke-linejoin="round"/>
<polygon points="502.8,427.5 503.7,428.0 506.6,432.1 506.5,432.1" fill="#707077" stroke="#000" stroke-width="1.00" stroke-linejoin="round"/>
<polygon points="534.9,308.0 544.8,306.3 544.8,327.0 534.9,329.1" fill="#494950" stroke="#000" stroke-width="1.00" stroke-linejoin="round"/>
<polygon points="534.9,329.1 544.8,327.0 534.9,338.5 527.6,340.2" fill="#38383f" stroke="#000" stroke-width="1.00" stroke-linejoin="round"/>
<polygon points="527.6,340.2 534.9,338.5 525.9,347.8 521.0,349.1" fill="#37373e" stroke="#000" stroke-width="1.00" stroke-linejoin="round"/>
<polygon points="521.0,349.1 525.9,347.8 518.7,356.2 515.6,357.1" fill="#393940" stroke="#000" stroke-width="1.00" stroke-linejoin="round"/>
<polygon points="515.6,357.1 518.7,356.2 515.6,362.9 513.3,363.6" fill="#404047" stroke="#000" stroke-width="1.00" stroke-linejoin="round"/>
<polygon points="513.3,363.6 515.6,362.9 527.9,378.5 522.4,380.3" fill="#63636a" stroke="#000" stroke-width="1.00" stroke-linejoin="round"/>
<polygon points="522.4,380.3 527.9,378.5 526.6,385.5 521.5,387.3" fill="#46464d" stroke="#000" stroke-width="1.00" stroke-linejoin="round"/>
<polygon points="521.5,387.3 526.6,385.5 521.7,397.7 517.8,399.1" fill="#424249" stroke="#000" stroke-width="1.00" stroke-linejoin="round"/>
<polygon points="517.8,399.1 521.7,397.7 517.1,408.8 514.5,409.8" fill="#424249" stroke="#000" stroke-width="1.00" stroke-linejoin="round"/>
<polygon points="514.5,409.8 517.1,408.8 513.5,420.0 511.8,420.7" fill="#44444b" stroke="#000" stroke-width="1.00" stroke-linejoin="round"/>
<polygon points="511.8,420.7 513.5,420.0 511.0,427.6 509.9,428.1" fill="#43434a" stroke="#000" stroke-width="1.00" stroke-linejoin="round"/>
<polygon points="509.9,428.1 511.0,427.6 507.5,432.1 507.3,432.1" fill="#3b3b42" stroke="#000" stroke-width="1.00" stroke-linejoin="round"/>
<polygon points="475.6,307.6 488.7,308.8 488.7,330.1 475.6,328.5" fill="#83838a" stroke="#000" stroke-width="1.00" stroke-linejoin="round"/>
<polygon points="475.6,328.5 488.7,330.1 493.5,341.1 483.9,339.8" fill="#6c6c73" stroke="#000" stroke-width="1.00" stroke-linejoin="round"/>
<polygon points="483.9,339.8 493.5,341.1 497.9,349.8 491.3,348.8" fill="#6a6a71" stroke="#000" stroke-width="1.00" stroke-linejoin="round"/>
<polygon points="491.3,348.8 497.9,349.8 501.3,357.5 497.3,356.9" fill="#6c6c73" stroke="#000" stroke-width="1.00" stroke-linejoin="round"/>
<polygon points="497.3,356.9 501.3,357.5 502.9,363.9 499.9,363.4" fill="#77777e" stroke="#000" stroke-width="1.00" stroke-linejoin="round"/>
<polygon points="499.9,363.4 502.9,363.9 496.9,381.2 489.7,379.9" fill="#96969d" stroke="#000" stroke-width="1.00" stroke-linejoin="round"/>
<polygon points="489.7,379.9 496.9,381.2 497.5,388.1 490.7,386.8" fill="#7f7f86" stroke="#000" stroke-width="1.00" stroke-linejoin="round"/>
<polygon points="490.7,386.8 497.5,388.1 499.9,399.9 494.8,398.8" fill="#797980" stroke="#000" stroke-width="1.00" stroke-linejoin="round"/>
<polygon points="494.8,398.8 499.9,399.9 502.1,410.4 498.6,409.6" fill="#797980" stroke="#000" stroke-width="1.00" stroke-linejoin="round"/>
<polygon points="498.6,409.6 502.1,410.4 503.9,421.1 501.6,420.5" fill="#7c7c83" stroke="#000" stroke-width="1.00" stroke-linejoin="round"/>
<polygon points="501.6,420.5 503.9,421.1 505.1,428.3 503.7,428.0" fill="#7b7b82" stroke="#000" stroke-width="1.00" stroke-linejoin="round"/>
<polygon points="503.7,428.0 505.1,428.3 506.8,432.2 506.6,432.1" fill="#6f6f76" stroke="#000" stroke-width="1.00" stroke-linejoin="round"/>
<polygon points="520.8,309.1 534.9,308.0 534.9,329.1 520.8,330.4" fill="#45454c" stroke="#000" stroke-width="1.00" stroke-linejoin="round"/>
<polygon points="520.8,330.4 534.9,329.1 527.6,340.2 517.2,341.3" fill="#35353c" stroke="#000" stroke-width="1.00" stroke-linejoin="round"/>
<polygon points="517.2,341.3 527.6,340.2 521.0,349.1 513.9,349.9" fill="#34343b" stroke="#000" stroke-width="1.00" stroke-linejoin="round"/>
<polygon points="513.9,349.9 521.0,349.1 515.6,357.1 511.3,357.6" fill="#35353c" stroke="#000" stroke-width="1.00" stroke-linejoin="round"/>
<polygon points="511.3,357.6 515.6,357.1 513.3,363.6 510.1,364.0" fill="#3d3d44" stroke="#000" stroke-width="1.00" stroke-linejoin="round"/>
<polygon points="510.1,364.0 513.3,363.6 522.4,380.3 514.6,381.5" fill="#5f5f66" stroke="#000" stroke-width="1.00" stroke-linejoin="round"/>
<polygon points="514.6,381.5 522.4,380.3 521.5,387.3 514.2,388.4" fill="#424249" stroke="#000" stroke-width="1.00" stroke-linejoin="round"/>
<polygon points="514.2,388.4 521.5,387.3 517.8,399.1 512.4,400.1" fill="#3e3e45" stroke="#000" stroke-width="1.00" stroke-linejoin="round"/>
<polygon points="512.4,400.1 517.8,399.1 514.5,409.8 510.7,410.5" fill="#3e3e45" stroke="#000" stroke-width="1.00" stroke-linejoin="round"/>
<polygon points="510.7,410.5 514.5,409.8 511.8,420.7 509.4,421.2" fill="#404047" stroke="#000" stroke-width="1.00" stroke-linejoin="round"/>
<polygon points="509.4,421.2 511.8,420.7 509.9,428.1 508.4,428.4" fill="#3f3f46" stroke="#000" stroke-width="1.00" stroke-linejoin="round"/>
<polygon points="508.4,428.4 509.9,428.1 507.3,432.1 507.2,432.2" fill="#37373e" stroke="#000" stroke-width="1.00" stroke-linejoin="round"/>
<polygon points="488.7,308.8 504.6,309.3 504.6,330.8 488.7,330.1" fill="#707077" stroke="#000" stroke-width="1.00" stroke-linejoin="round"/>
<polygon points="488.7,330.1 504.6,330.8 505.2,341.6 493.5,341.1" fill="#5b5b62" stroke="#000" stroke-width="1.00" stroke-linejoin="round"/>
<polygon points="493.5,341.1 505.2,341.6 505.8,350.2 497.9,349.8" fill="#595960" stroke="#000" stroke-width="1.00" stroke-linejoin="round"/>
<polygon points="497.9,349.8 505.8,350.2 506.3,357.8 501.3,357.5" fill="#5c5c63" stroke="#000" stroke-width="1.00" stroke-linejoin="round"/>
<polygon points="501.3,357.5 506.3,357.8 506.5,364.1 502.9,363.9" fill="#66666d" stroke="#000" stroke-width="1.00" stroke-linejoin="round"/>
<polygon points="502.9,363.9 506.5,364.1 505.7,381.8 496.9,381.2" fill="#85858c" stroke="#000" stroke-width="1.00" stroke-linejoin="round"/>
<polygon points="496.9,381.2 505.7,381.8 505.7,388.7 497.5,388.1" fill="#6d6d74" stroke="#000" stroke-width="1.00" stroke-linejoin="round"/>
<polygon points="497.5,388.1 505.7,388.7 506.1,400.3 499.9,399.9" fill="#67676e" stroke="#000" stroke-width="1.00" stroke-linejoin="round"/>
<polygon points="499.9,399.9 506.1,400.3 506.4,410.7 502.1,410.4" fill="#67676e" stroke="#000" stroke-width="1.00" stroke-linejoin="round"/>
<polygon points="502.1,410.4 506.4,410.7 506.6,421.3 503.9,421.1" fill="#696970" stroke="#000" stroke-width="1.00" stroke-linejoin="round"/>
<polygon points="503.9,421.1 506.6,421.3 506.7,428.5 505.1,428.3" fill="#696970" stroke="#000" stroke-width="1.00" stroke-linejoin="round"/>
<polygon points="505.1,428.3 506.7,428.5 507.0,432.2 506.8,432.2" fill="#5e5e65" stroke="#000" stroke-width="1.00" stroke-linejoin="round"/>
<polygon points="504.6,309.3 520.8,309.1 520.8,330.4 504.6,330.8" fill="#727279" stroke="#000" stroke-width="1.00" stroke-linejoin="round"/>
<polygon points="504.6,330.8 520.8,330.4 517.2,341.3 505.2,341.6" fill="#5d5d64" stroke="#000" stroke-width="1.00" stroke-linejoin="round"/>
<polygon points="505.2,341.6 517.2,341.3 513.9,349.9 505.8,350.2" fill="#5b5b62" stroke="#000" stroke-width="1.00" stroke-linejoin="round"/>
<polygon points="505.8,350.2 513.9,349.9 511.3,357.6 506.3,357.8" fill="#5e5e65" stroke="#000" stroke-width="1.00" stroke-linejoin="round"/>
<polygon points="506.3,357.8 511.3,357.6 510.1,364.0 506.5,364.1" fill="#68686f" stroke="#000" stroke-width="1.00" stroke-linejoin="round"/>
<polygon points="506.5,364.1 510.1,364.0 514.6,381.5 505.7,381.8" fill="#87878e" stroke="#000" stroke-width="1.00" stroke-linejoin="round"/>
<polygon points="505.7,381.8 514.6,381.5 514.2,388.4 505.7,388.7" fill="#6f6f76" stroke="#000" stroke-width="1.00" stroke-linejoin="round"/>
<polygon points="505.7,388.7 514.2,388.4 512.4,400.1 506.1,400.3" fill="#696970" stroke="#000" stroke-width="1.00" stroke-linejoin="round"/>
<polygon points="506.1,400.3 512.4,400.1 510.7,410.5 506.4,410.7" fill="#696970" stroke="#000" stroke-width="1.00" stroke-linejoin="round"/>
<polygon points="506.4,410.7 510.7,410.5 509.4,421.2 506.6,421.3" fill="#6c6c73" stroke="#000" stroke-width="1.00" stroke-linejoin="round"/>
<polygon points="506.6,421.3 509.4,421.2 508.4,428.4 506.7,428.5" fill="#6c6c73" stroke="#000" stroke-width="1.00" stroke-linejoin="round"/>
<polygon points="506.7,428.5 508.4,428.4 507.2,432.2 507.0,432.2" fill="#606067" stroke="#000" stroke-width="1.00" stroke-linejoin="round"/>
<polygon points="504.6,309.3 520.8,309.1 534.9,308.0 544.8,306.3 548.9,304.3 546.7,302.2 538.4,300.4 525.3,299.2 509.4,298.7 493.2,298.9 479.1,300.0 469.2,301.7 465.1,303.7 467.3,305.8 475.6,307.6 488.7,308.8" fill="#68686f" stroke="#000" stroke-width="1.00"/>
<line x1="507.0" y1="304.0" x2="504.6" y2="309.3" stroke="#000" stroke-width="0.80"/>
<line x1="507.0" y1="304.0" x2="520.8" y2="309.1" stroke="#000" stroke-width="0.80"/>
<line x1="507.0" y1="304.0" x2="534.9" y2="308.0" stroke="#000" stroke-width="0.80"/>
<line x1="507.0" y1="304.0" x2="544.8" y2="306.3" stroke="#000" stroke-width="0.80"/>
<line x1="507.0" y1="304.0" x2="548.9" y2="304.3" stroke="#000" stroke-width="0.80"/>
<line x1="507.0" y1="304.0" x2="546.7" y2="302.2" stroke="#000" stroke-width="0.80"/>
<line x1="507.0" y1="304.0" x2="538.4" y2="300.4" stroke="#000" stroke-width="0.80"/>
<line x1="507.0" y1="304.0" x2="525.3" y2="299.2" stroke="#000" stroke-width="0.80"/>
<line x1="507.0" y1="304.0" x2="509.4" y2="298.7" stroke="#000" stroke-width="0.80"/>
<line x1="507.0" y1="304.0" x2="493.2" y2="298.9" stroke="#000" stroke-width="0.80"/>
<line x1="507.0" y1="304.0" x2="479.1" y2="300.0" stroke="#000" stroke-width="0.80"/>
<line x1="507.0" y1="304.0" x2="469.2" y2="301.7" stroke="#000" stroke-width="0.80"/>
<line x1="507.0" y1="304.0" x2="465.1" y2="303.7" stroke="#000" stroke-width="0.80"/>
<line x1="507.0" y1="304.0" x2="467.3" y2="305.8" stroke="#000" stroke-width="0.80"/>
<line x1="507.0" y1="304.0" x2="475.6" y2="307.6" stroke="#000" stroke-width="0.80"/>
<line x1="507.0" y1="304.0" x2="488.7" y2="308.8" stroke="#000" stroke-width="0.80"/>
<polygon points="494.5,280.9 495.8,281.5 495.8,299.7 494.5,298.9" fill="#47474e" stroke="#000" stroke-width="1.00" stroke-linejoin="round"/>
<polygon points="517.4,281.6 519.5,281.1 519.5,299.1 517.4,299.8" fill="#33333a" stroke="#000" stroke-width="1.00" stroke-linejoin="round"/>
<polygon points="495.8,281.5 500.1,281.9 500.1,300.2 495.8,299.7" fill="#5e5e65" stroke="#000" stroke-width="1.00" stroke-linejoin="round"/>
<polygon points="512.6,282.0 517.4,281.6 517.4,299.8 512.6,300.3" fill="#1e1e25" stroke="#000" stroke-width="1.00" stroke-linejoin="round"/>
<polygon points="500.1,281.9 506.3,282.1 506.3,300.5 500.1,300.2" fill="#4e4e55" stroke="#000" stroke-width="1.00" stroke-linejoin="round"/>
<polygon points="506.3,282.1 512.6,282.0 512.6,300.3 506.3,300.5" fill="#4d4d54" stroke="#000" stroke-width="1.00" stroke-linejoin="round"/>
<polygon points="506.8,200.5 502.8,200.5 500.9,201.2 507.1,201.3" fill="#76767d" stroke="#000" stroke-width="1.00" stroke-linejoin="round"/>
<polygon points="510.7,200.5 506.8,200.5 507.1,201.3 513.2,201.2" fill="#76767d" stroke="#000" stroke-width="1.00" stroke-linejoin="round"/>
<polygon points="502.8,200.5 499.3,200.4 495.6,201.1 500.9,201.2" fill="#76767d" stroke="#000" stroke-width="1.00" stroke-linejoin="round"/>
<polygon points="514.0,200.3 510.7,200.5 513.2,201.2 518.1,201.0" fill="#76767d" stroke="#000" stroke-width="1.00" stroke-linejoin="round"/>
<polygon points="499.3,200.4 496.8,200.2 491.8,200.8 495.6,201.1" fill="#76767d" stroke="#000" stroke-width="1.00" stroke-linejoin="round"/>
<polygon points="516.0,200.2 514.0,200.3 518.1,201.0 521.3,200.8" fill="#76767d" stroke="#000" stroke-width="1.00" stroke-linejoin="round"/>
<polygon points="496.8,200.2 495.8,200.0 490.2,200.5 491.8,200.8" fill="#76767d" stroke="#000" stroke-width="1.00" stroke-linejoin="round"/>
<polygon points="516.6,200.0 516.0,200.2 521.3,200.8 522.2,200.5" fill="#76767d" stroke="#000" stroke-width="1.00" stroke-linejoin="round"/>
<polygon points="527.2,209.5 526.0,209.7 542.5,229.5 544.5,229.5" fill="#828289" stroke="#000" stroke-width="1.00" stroke-linejoin="round"/>
<polygon points="544.1,262.1 542.1,261.3 530.8,275.3 532.2,276.1" fill="#595960" stroke="#000" stroke-width="1.00" stroke-linejoin="round"/>
<polygon points="532.2,276.1 530.8,275.3 518.5,283.6 519.2,284.1" fill="#4d4d54" stroke="#000" stroke-width="1.00" stroke-linejoin="round"/>
<polygon points="495.8,193.5 496.4,193.3 496.4,199.8 495.8,200.0" fill="#707077" stroke="#000" stroke-width="1.00" stroke-linejoin="round"/>
<polygon points="495.8,200.0 496.4,199.8 491.1,200.2 490.2,200.5" fill="#797980" stroke="#000" stroke-width="1.00" stroke-linejoin="round"/>
<polygon points="490.2,200.5 491.1,200.2 486.4,209.3 485.2,209.5" fill="#83838a" stroke="#000" stroke-width="1.00" stroke-linejoin="round"/>
<polygon points="485.2,209.5 486.4,209.3 469.9,229.5 467.9,229.5" fill="#86868d" stroke="#000" stroke-width="1.00" stroke-linejoin="round"/>
<polygon points="467.9,229.5 469.9,229.5 470.3,262.7 468.3,261.9" fill="#707077" stroke="#000" stroke-width="1.00" stroke-linejoin="round"/>
<polygon points="468.3,261.9 470.3,262.7 481.6,276.7 480.2,275.9" fill="#5e5e65" stroke="#000" stroke-width="1.00" stroke-linejoin="round"/>
<polygon points="480.2,275.9 481.6,276.7 493.9,284.4 493.2,283.9" fill="#515158" stroke="#000" stroke-width="1.00" stroke-linejoin="round"/>
<polygon points="515.6,193.2 516.6,193.5 516.6,200.0 515.6,199.8" fill="#64646b" stroke="#000" stroke-width="1.00" stroke-linejoin="round"/>
<polygon points="515.6,199.8 516.6,200.0 522.2,200.5 520.6,200.2" fill="#717178" stroke="#000" stroke-width="1.00" stroke-linejoin="round"/>
<polygon points="520.6,200.2 522.2,200.5 527.2,209.5 525.1,209.2" fill="#77777e" stroke="#000" stroke-width="1.00" stroke-linejoin="round"/>
<polygon points="525.1,209.2 527.2,209.5 544.5,229.5 540.8,229.5" fill="#7b7b82" stroke="#000" stroke-width="1.00" stroke-linejoin="round"/>
<polygon points="540.8,229.5 544.5,229.5 544.1,262.1 540.4,262.9" fill="#63636a" stroke="#000" stroke-width="1.00" stroke-linejoin="round"/>
<polygon points="540.4,262.9 544.1,262.1 532.2,276.1 529.6,276.9" fill="#525259" stroke="#000" stroke-width="1.00" stroke-linejoin="round"/>
<polygon points="529.6,276.9 532.2,276.1 519.2,284.1 517.9,284.5" fill="#46464d" stroke="#000" stroke-width="1.00" stroke-linejoin="round"/>
<polygon points="496.4,193.3 498.4,193.1 498.4,199.7 496.4,199.8" fill="#8b8b92" stroke="#000" stroke-width="1.00" stroke-linejoin="round"/>
<polygon points="496.4,199.8 498.4,199.7 494.3,200.0 491.1,200.2" fill="#8a8a91" stroke="#000" stroke-width="1.00" stroke-linejoin="round"/>
<polygon points="491.1,200.2 494.3,200.0 490.5,209.0 486.4,209.3" fill="#9d9da4" stroke="#000" stroke-width="1.00" stroke-linejoin="round"/>
<polygon points="486.4,209.3 490.5,209.0 477.5,229.5 469.9,229.5" fill="#9f9fa6" stroke="#000" stroke-width="1.00" stroke-linejoin="round"/>
<polygon points="469.9,229.5 477.5,229.5 477.8,263.4 470.3,262.7" fill="#8b8b92" stroke="#000" stroke-width="1.00" stroke-linejoin="round"/>
<polygon points="470.3,262.7 477.8,263.4 486.8,277.4 481.6,276.7" fill="#76767d" stroke="#000" stroke-width="1.00" stroke-linejoin="round"/>
<polygon points="481.6,276.7 486.8,277.4 496.5,284.8 493.9,284.4" fill="#67676e" stroke="#000" stroke-width="1.00" stroke-linejoin="round"/>
<polygon points="513.1,193.0 515.6,193.2 515.6,199.8 513.1,199.6" fill="#515158" stroke="#000" stroke-width="1.00" stroke-linejoin="round"/>
<polygon points="513.1,199.6 515.6,199.8 520.6,200.2 516.8,199.9" fill="#65656c" stroke="#000" stroke-width="1.00" stroke-linejoin="round"/>
<polygon points="516.8,199.9 520.6,200.2 525.1,209.2 520.2,209.0" fill="#65656c" stroke="#000" stroke-width="1.00" stroke-linejoin="round"/>
<polygon points="520.2,209.0 525.1,209.2 540.8,229.5 531.7,229.5" fill="#6a6a71" stroke="#000" stroke-width="1.00" stroke-linejoin="round"/>
<polygon points="531.7,229.5 540.8,229.5 540.4,262.9 531.5,263.6" fill="#515158" stroke="#000" stroke-width="1.00" stroke-linejoin="round"/>
<polygon points="531.5,263.6 540.4,262.9 529.6,276.9 523.5,277.6" fill="#414148" stroke="#000" stroke-width="1.00" stroke-linejoin="round"/>
<polygon points="523.5,277.6 529.6,276.9 517.9,284.5 514.8,284.9" fill="#37373e" stroke="#000" stroke-width="1.00" stroke-linejoin="round"/>
<polygon points="498.4,193.1 501.7,192.9 501.7,199.5 498.4,199.7" fill="#8b8b92" stroke="#000" stroke-width="1.00" stroke-linejoin="round"/>
<polygon points="498.4,199.7 501.7,199.5 499.2,199.8 494.3,200.0" fill="#8a8a91" stroke="#000" stroke-width="1.00" stroke-linejoin="round"/>
<polygon points="494.3,200.0 499.2,199.8 497.1,208.9 490.5,209.0" fill="#9c9ca3" stroke="#000" stroke-width="1.00" stroke-linejoin="round"/>
<polygon points="490.5,209.0 497.1,208.9 489.5,229.5 477.5,229.5" fill="#9e9ea5" stroke="#000" stroke-width="1.00" stroke-linejoin="round"/>
<polygon points="477.5,229.5 489.5,229.5 489.7,263.9 477.8,263.4" fill="#8a8a91" stroke="#000" stroke-width="1.00" stroke-linejoin="round"/>
<polygon points="477.8,263.4 489.7,263.9 494.9,277.9 486.8,277.4" fill="#75757c" stroke="#000" stroke-width="1.00" stroke-linejoin="round"/>
<polygon points="486.8,277.4 494.9,277.9 500.5,285.1 496.5,284.8" fill="#66666d" stroke="#000" stroke-width="1.00" stroke-linejoin="round"/>
<polygon points="509.6,192.9 513.1,193.0 513.1,199.6 509.6,199.5" fill="#4d4d54" stroke="#000" stroke-width="1.00" stroke-linejoin="round"/>
<polygon points="509.6,199.5 513.1,199.6 516.8,199.9 511.5,199.8" fill="#63636a" stroke="#000" stroke-width="1.00" stroke-linejoin="round"/>
<polygon points="511.5,199.8 516.8,199.9 520.2,209.0 513.1,208.8" fill="#626269" stroke="#000" stroke-width="1.00" stroke-linejoin="round"/>
<polygon points="513.1,208.8 520.2,209.0 531.7,229.5 518.8,229.5" fill="#66666d" stroke="#000" stroke-width="1.00" stroke-linejoin="round"/>
<polygon points="518.8,229.5 531.7,229.5 531.5,263.6 518.7,264.0" fill="#4d4d54" stroke="#000" stroke-width="1.00" stroke-linejoin="round"/>
<polygon points="518.7,264.0 531.5,263.6 523.5,277.6 514.8,278.0" fill="#3e3e45" stroke="#000" stroke-width="1.00" stroke-linejoin="round"/>
<polygon points="514.8,278.0 523.5,277.6 514.8,284.9 510.5,285.1" fill="#34343b" stroke="#000" stroke-width="1.00" stroke-linejoin="round"/>
<polygon points="501.7,192.9 505.6,192.9 505.6,199.5 501.7,199.5" fill="#78787f" stroke="#000" stroke-width="1.00" stroke-linejoin="round"/>
<polygon points="501.7,199.5 505.6,199.5 505.3,199.7 499.2,199.8" fill="#7e7e85" stroke="#000" stroke-width="1.00" stroke-linejoin="round"/>
<polygon points="499.2,199.8 505.3,199.7 505.0,208.8 497.1,208.9" fill="#8a8a91" stroke="#000" stroke-width="1.00" stroke-linejoin="round"/>
<polygon points="497.1,208.9 505.0,208.8 504.0,229.5 489.5,229.5" fill="#8d8d94" stroke="#000" stroke-width="1.00" stroke-linejoin="round"/>
<polygon points="489.5,229.5 504.0,229.5 504.0,264.1 489.7,263.9" fill="#78787f" stroke="#000" stroke-width="1.00" stroke-linejoin="round"/>
<polygon points="489.7,263.9 504.0,264.1 504.7,278.1 494.9,277.9" fill="#65656c" stroke="#000" stroke-width="1.00" stroke-linejoin="round"/>
<polygon points="494.9,277.9 504.7,278.1 505.5,285.2 500.5,285.1" fill="#57575e" stroke="#000" stroke-width="1.00" stroke-linejoin="round"/>
<polygon points="505.6,192.9 509.6,192.9 509.6,199.5 505.6,199.5" fill="#7a7a81" stroke="#000" stroke-width="1.00" stroke-linejoin="round"/>
<polygon points="505.6,199.5 509.6,199.5 511.5,199.8 505.3,199.7" fill="#7f7f86" stroke="#000" stroke-width="1.00" stroke-linejoin="round"/>
<polygon points="505.3,199.7 511.5,199.8 513.1,208.8 505.0,208.8" fill="#8c8c93" stroke="#000" stroke-width="1.00" stroke-linejoin="round"/>
<polygon points="505.0,208.8 513.1,208.8 518.8,229.5 504.0,229.5" fill="#8f8f96" stroke="#000" stroke-width="1.00" stroke-linejoin="round"/>
<polygon points="504.0,229.5 518.8,229.5 518.7,264.0 504.0,264.1" fill="#7a7a81" stroke="#000" stroke-width="1.00" stroke-linejoin="round"/>
<polygon points="504.0,264.1 518.7,264.0 514.8,278.0 504.7,278.1" fill="#67676e" stroke="#000" stroke-width="1.00" stroke-linejoin="round"/>
<polygon points="504.7,278.1 514.8,278.0 510.5,285.1 505.5,285.2" fill="#595960" stroke="#000" stroke-width="1.00" stroke-linejoin="round"/>
<path d="M503.9 175 L502.2 193.5 H509.7 L507.5 175 Z" fill="#0c0c0c"/><circle cx="505.6" cy="172.3" r="2.7" fill="#0c0c0c"/>
<circle cx="507" cy="244.3" r="9" fill="#55555b" stroke="#111" stroke-width="1"/><circle cx="507" cy="244.3" r="6" fill="none" stroke="#111" stroke-width="0.9"/><circle cx="507" cy="244.3" r="3" fill="#2e2e34" stroke="#111" stroke-width="0.9"/><path d="M498 244.3 H516 M507 235.3 V253.3 M500.6 238 L513.4 250.6 M513.4 238 L500.6 250.6 M498.7 240.8 L515.3 247.8 M498.7 247.8 L515.3 240.8 M503.5 236 L510.5 252.6 M510.5 236 L503.5 252.6" stroke="#111" stroke-width="0.6"/>
<polygon points="506.0,199.0 503.6,214.0 505.3,237.0 502.2,265.0 503.5,276.0 506.4,282.0 509.3,276.0 510.4,265.0 507.0,237.0 509.4,214.0" fill="#94949a" stroke="#f0a040" stroke-width="1.1" stroke-linejoin="round" />
<polygon points="506.5,288.0 500.8,296.0 505.6,353.0 507.8,353.0 512.4,296.0" fill="#94949a" stroke="#f0a040" stroke-width="1.1" stroke-linejoin="round" />
<circle cx="506.8" cy="355" r="3" fill="#a2a2a6" stroke="#f0a040" stroke-width="1"/>
<polygon points="506.8,357.5 499.2,366.0 505.6,423.0 507.6,423.0 514.0,366.0" fill="#94949a" stroke="#f0a040" stroke-width="1.1" stroke-linejoin="round" />
<circle cx="506.6" cy="426" r="3" fill="#a2a2a6" stroke="#f0a040" stroke-width="1"/>
<polygon points="492.1,281.1 471.2,283.7 470.5,285.2 471.2,287.0 492.0,286.3" fill="#8e8e94" stroke="#f0a040" stroke-width="1.1" stroke-linejoin="round" />
<polygon points="464.6,283.1 471.2,283.7 469.9,293.5 436.5,309.2 434.6,309.8" fill="#94949a" stroke="#f0a040" stroke-width="1.1" stroke-linejoin="round" />
<polygon points="434.6,309.8 427.1,308.4 386.4,334.2 388.0,337.0 390.8,338.9 432.9,317.5" fill="#94949a" stroke="#f0a040" stroke-width="1.1" stroke-linejoin="round" />
<polygon points="388.0,336.5 375.6,336.7 369.0,342.5 377.7,342.5" fill="#94949a" stroke="#f0a040" stroke-width="1.1" stroke-linejoin="round" />
<polygon points="520.0,281.0 540.1,280.5 540.1,283.0 520.0,285.5" fill="#8e8e94" stroke="#f0a040" stroke-width="1.1" stroke-linejoin="round" />
<polygon points="540.1,281.3 545.8,283.2 560.8,314.3 536.3,287.9" fill="#94949a" stroke="#f0a040" stroke-width="1.1" stroke-linejoin="round" />
<polygon points="560.8,314.3 569.3,315.3 587.3,355.8 556.1,321.9" fill="#94949a" stroke="#f0a040" stroke-width="1.1" stroke-linejoin="round" />
<polygon points="587.3,355.8 590.0,357.0 602.4,368.1 585.0,363.4" fill="#94949a" stroke="#f0a040" stroke-width="1.1" stroke-linejoin="round" />
<circle cx="507" cy="287.7" r="10" fill="none" stroke="#fff" stroke-width="1.3"/><circle cx="507" cy="287.7" r="10" fill="none" stroke="#e01818" stroke-width="1.3" stroke-dasharray="3.9 3.95"/><path d="M507 267.5 V279 M507 297 V307 M487 287.7 H498 M516 287.7 H527" stroke="#0a0a0a" stroke-width="1"/>
<path d="M506.2 213 V281" stroke="#1414e6" stroke-width="1.6"/><polygon points="506,196.2 502.2,213.6 510.9,213.6" fill="#0a0ae0"/>
<path d="M521.5 281.3 H572" stroke="#12d412" stroke-width="1.4"/><polygon points="590.1,281.3 571.2,277 571.2,285.6" fill="#10dc10"/>
<circle cx="506.4" cy="281.6" r="15.3" fill="none" stroke="#f4f4f4" stroke-width="1.3"/>
<circle cx="506.4" cy="281.6" r="2.6" fill="#e8942a" stroke="#5a2a00" stroke-width="0.8"/>
</svg>
<span class="t" style="left:179.5px;top:36px;font-size:11px;color:#fff;letter-spacing:-0.303px;">User Persp</span>
<span class="t" style="left:229px;top:577px;font-size:11px;color:#fff;letter-spacing:0.155px;">(1) Armature</span>
<svg style="left:180px;top:536px" width="42" height="46" viewBox="180 536 42 46"><path d="M184.5 573 V549" stroke="#1c2ee8" stroke-width="2"/><path d="M184 572.5 H209.5" stroke="#1fd01f" stroke-width="2"/><rect x="183.5" y="573" width="2.4" height="4.4" fill="#e02a1a"/></svg>
<span class="t" style="left:187px;top:535px;font-size:11px;color:#2a3cf0;">z</span>
<span class="t" style="left:212.4px;top:559px;font-size:11px;color:#22cc22;">y</span>
<span class="t" style="left:187.2px;top:565px;font-size:9px;color:#e03020;">x</span>
<div style="left:0px;top:28px;width:159px;height:571px;background:#727272;"></div>
<div style="left:159px;top:28px;width:1px;height:571px;background:#484848;"></div>
<div style="left:1px;top:28px;width:18px;height:355px;background:#545454;"></div>
<div style="left:2px;top:33px;width:17px;height:36px;background:#727272;border:1px solid #505050;border-right:none;border-radius:5px 0 0 5px;"></div>
<span class="t" style="left:-1.84px;top:42.5px;width:25.69px;font-size:11px;color:#000;transform:rotate(-90deg);transform-origin:50% 50%;">Tools</span>
<div style="left:2px;top:75px;width:16px;height:42px;background:#646464;border:1px solid #4a4a4a;border-right:none;border-radius:5px 0 0 5px;"></div>
<span class="t" style="left:-5.52px;top:87.5px;width:33.03px;font-size:11px;color:#000;transform:rotate(-90deg);transform-origin:50% 50%;">Create</span>
<div style="left:2px;top:123px;width:16px;height:54px;background:#646464;border:1px solid #4a4a4a;border-right:none;border-radius:5px 0 0 5px;"></div>
<span class="t" style="left:-11.94px;top:141.5px;width:45.88px;font-size:11px;color:#000;transform:rotate(-90deg);transform-origin:50% 50%;">Relations</span>
<div style="left:2px;top:183px;width:16px;height:60px;background:#646464;border:1px solid #4a4a4a;border-right:none;border-radius:5px 0 0 5px;"></div>
<span class="t" style="left:-13.47px;top:204.5px;width:48.94px;font-size:11px;color:#000;transform:rotate(-90deg);transform-origin:50% 50%;">Animation</span>
<div style="left:2px;top:249px;width:16px;height:46px;background:#646464;border:1px solid #4a4a4a;border-right:none;border-radius:5px 0 0 5px;"></div>
<span class="t" style="left:-7.95px;top:263.5px;width:37.91px;font-size:11px;color:#000;transform:rotate(-90deg);transform-origin:50% 50%;">Physics</span>
<div style="left:2px;top:301px;width:16px;height:77px;background:#646464;border:1px solid #4a4a4a;border-right:none;border-radius:5px 0 0 5px;"></div>
<span class="t" style="left:-23.56px;top:331px;width:69.12px;font-size:11px;color:#000;transform:rotate(-90deg);transform-origin:50% 50%;">Grease Pencil</span>
<svg style="left:33px;top:35px" width="8" height="8"><polygon points="0,0 8,0 4.0,8" fill="#1e1e1e"/></svg>
<span class="t" style="left:46px;top:31px;font-size:12px;color:#000;">Transform</span>
<svg style="left:138px;top:38px" width="11" height="5" shape-rendering="crispEdges"><rect x="0" y="0" width="1" height="1" fill="#a8a8a8"/><rect x="1" y="1" width="1" height="1" fill="#4a4a4a"/><rect x="0" y="3" width="1" height="1" fill="#a8a8a8"/><rect x="1" y="4" width="1" height="1" fill="#4a4a4a"/><rect x="3" y="0" width="1" height="1" fill="#a8a8a8"/><rect x="4" y="1" width="1" height="1" fill="#4a4a4a"/><rect x="3" y="3" width="1" height="1" fill="#a8a8a8"/><rect x="4" y="4" width="1" height="1" fill="#4a4a4a"/><rect x="6" y="0" width="1" height="1" fill="#a8a8a8"/><rect x="7" y="1" width="1" height="1" fill="#4a4a4a"/><rect x="6" y="3" width="1" height="1" fill="#a8a8a8"/><rect x="7" y="4" width="1" height="1" fill="#4a4a4a"/><rect x="9" y="0" width="1" height="1" fill="#a8a8a8"/><rect x="10" y="1" width="1" height="1" fill="#4a4a4a"/><rect x="9" y="3" width="1" height="1" fill="#a8a8a8"/><rect x="10" y="4" width="1" height="1" fill="#4a4a4a"/></svg>
<div style="left:28px;top:59px;width:120px;height:58px;background:linear-gradient(#a9a9a9,#8b8b8b);border:1px solid #2b2b2b;border-radius:4px;box-shadow:0 1px 0 rgba(255,255,255,0.13);"></div>
<div style="left:29px;top:60px;width:120px;height:18px;background:linear-gradient(#a9a9a9,#8b8b8b);border-radius:3px 3px 0 0;"></div>
<span class="t" style="left:36px;top:62px;font-size:11px;color:#000;">Translate</span>
<div style="left:29px;top:79px;width:120px;height:19px;background:linear-gradient(#a9a9a9,#8b8b8b);border-radius:0;"></div>
<div style="left:29px;top:78px;width:120px;height:1px;background:#2b2b2b;"></div>
<span class="t" style="left:36px;top:81px;font-size:11px;color:#000;">Rotate</span>
<div style="left:29px;top:99px;width:120px;height:19px;background:linear-gradient(#a9a9a9,#8b8b8b);border-radius:0 0 3px 3px;"></div>
<div style="left:29px;top:98px;width:120px;height:1px;background:#2b2b2b;"></div>
<span class="t" style="left:36px;top:101px;font-size:11px;color:#000;">Scale</span>
<div style="left:28px;top:124px;width:120px;height:18px;background:linear-gradient(#a9a9a9,#8b8b8b);border:1px solid #2b2b2b;border-radius:4px;box-shadow:0 1px 0 rgba(255,255,255,0.13);"></div>
<span class="t" style="left:36px;top:127px;font-size:11px;color:#000;">Mirror</span>
<div style="left:25px;top:152px;width:129px;height:1px;background:#4e4e4e;"></div>
<div style="left:25px;top:153px;width:129px;height:1px;background:#7c7c7c;"></div>
<svg style="left:33px;top:159.5px" width="8" height="8"><polygon points="0,0 8,0 4.0,8" fill="#1e1e1e"/></svg>
<span class="t" style="left:46px;top:156px;font-size:12px;color:#000;">Edit</span>
<svg style="left:138px;top:162.5px" width="11" height="5" shape-rendering="crispEdges"><rect x="0" y="0" width="1" height="1" fill="#a8a8a8"/><rect x="1" y="1" width="1" height="1" fill="#4a4a4a"/><rect x="0" y="3" width="1" height="1" fill="#a8a8a8"/><rect x="1" y="4" width="1" height="1" fill="#4a4a4a"/><rect x="3" y="0" width="1" height="1" fill="#a8a8a8"/><rect x="4" y="1" width="1" height="1" fill="#4a4a4a"/><rect x="3" y="3" width="1" height="1" fill="#a8a8a8"/><rect x="4" y="4" width="1" height="1" fill="#4a4a4a"/><rect x="6" y="0" width="1" height="1" fill="#a8a8a8"/><rect x="7" y="1" width="1" height="1" fill="#4a4a4a"/><rect x="6" y="3" width="1" height="1" fill="#a8a8a8"/><rect x="7" y="4" width="1" height="1" fill="#4a4a4a"/><rect x="9" y="0" width="1" height="1" fill="#a8a8a8"/><rect x="10" y="1" width="1" height="1" fill="#4a4a4a"/><rect x="9" y="3" width="1" height="1" fill="#a8a8a8"/><rect x="10" y="4" width="1" height="1" fill="#4a4a4a"/></svg>
<div style="left:28px;top:184px;width:120px;height:58px;background:linear-gradient(#a9a9a9,#8b8b8b);border:1px solid #2b2b2b;border-radius:4px;box-shadow:0 1px 0 rgba(255,255,255,0.13);"></div>
<div style="left:29px;top:185px;width:120px;height:18px;background:linear-gradient(#a9a9a9,#8b8b8b);border-radius:3px 3px 0 0;"></div>
<span class="t" style="left:36px;top:187px;font-size:11px;color:#000;">Duplicate</span>
<div style="left:29px;top:204px;width:120px;height:19px;background:linear-gradient(#a9a9a9,#8b8b8b);border-radius:0;"></div>
<div style="left:29px;top:203px;width:120px;height:1px;background:#2b2b2b;"></div>
<span class="t" style="left:36px;top:206px;font-size:11px;color:#000;">Duplicate Linked</span>
<div style="left:29px;top:224px;width:120px;height:19px;background:linear-gradient(#a9a9a9,#8b8b8b);border-radius:0 0 3px 3px;"></div>
<div style="left:29px;top:223px;width:120px;height:1px;background:#2b2b2b;"></div>
<span class="t" style="left:36px;top:226px;font-size:11px;color:#000;">Delete</span>
<div style="left:28px;top:249px;width:120px;height:18px;background:linear-gradient(#a9a9a9,#8b8b8b);border:1px solid #2b2b2b;border-radius:4px;box-shadow:0 1px 0 rgba(255,255,255,0.13);"></div>
<span class="t" style="left:36px;top:252px;font-size:11px;color:#000;">Join</span>
<div style="left:28px;top:274px;width:120px;height:18px;background:linear-gradient(#565656,#373737);border:1px solid #2b2b2b;border-radius:4px;box-shadow:0 1px 0 rgba(255,255,255,0.13);"></div>
<span class="t" style="left:36px;top:277px;font-size:11px;color:#fff;">Set Origin</span>
<svg style="left:141px;top:277.6px" width="5.6" height="12.8"><polygon points="0,5.2 2.8,0 5.6,5.2" fill="#b4b4b4"/><polygon points="0,7.6 2.8,12.8 5.6,7.6" fill="#b4b4b4"/></svg>
<div style="left:25px;top:302px;width:129px;height:1px;background:#4e4e4e;"></div>
<div style="left:25px;top:303px;width:129px;height:1px;background:#7c7c7c;"></div>
<svg style="left:33px;top:310px" width="8" height="8"><polygon points="0,0 8,4.0 0,8" fill="#1e1e1e"/></svg>
<span class="t" style="left:46px;top:306px;font-size:12px;color:#000;">History</span>
<svg style="left:138px;top:313px" width="11" height="5" shape-rendering="crispEdges"><rect x="0" y="0" width="1" height="1" fill="#a8a8a8"/><rect x="1" y="1" width="1" height="1" fill="#4a4a4a"/><rect x="0" y="3" width="1" height="1" fill="#a8a8a8"/><rect x="1" y="4" width="1" height="1" fill="#4a4a4a"/><rect x="3" y="0" width="1" height="1" fill="#a8a8a8"/><rect x="4" y="1" width="1" height="1" fill="#4a4a4a"/><rect x="3" y="3" width="1" height="1" fill="#a8a8a8"/><rect x="4" y="4" width="1" height="1" fill="#4a4a4a"/><rect x="6" y="0" width="1" height="1" fill="#a8a8a8"/><rect x="7" y="1" width="1" height="1" fill="#4a4a4a"/><rect x="6" y="3" width="1" height="1" fill="#a8a8a8"/><rect x="7" y="4" width="1" height="1" fill="#4a4a4a"/><rect x="9" y="0" width="1" height="1" fill="#a8a8a8"/><rect x="10" y="1" width="1" height="1" fill="#4a4a4a"/><rect x="9" y="3" width="1" height="1" fill="#a8a8a8"/><rect x="10" y="4" width="1" height="1" fill="#4a4a4a"/></svg>
<div style="left:0px;top:382px;width:159px;height:1px;background:#626262;"></div>
<div style="left:0px;top:383px;width:159px;height:1px;background:#808080;"></div>
<svg style="left:13.2px;top:390.5px" width="8" height="8"><polygon points="0,0 8,0 4.0,8" fill="#1e1e1e"/></svg>
<span class="t" style="left:24.6px;top:387px;font-size:12px;color:#000;">Translate</span>
<svg style="left:121px;top:393.5px" width="11" height="5" shape-rendering="crispEdges"><rect x="0" y="0" width="1" height="1" fill="#a8a8a8"/><rect x="1" y="1" width="1" height="1" fill="#4a4a4a"/><rect x="0" y="3" width="1" height="1" fill="#a8a8a8"/><rect x="1" y="4" width="1" height="1" fill="#4a4a4a"/><rect x="3" y="0" width="1" height="1" fill="#a8a8a8"/><rect x="4" y="1" width="1" height="1" fill="#4a4a4a"/><rect x="3" y="3" width="1" height="1" fill="#a8a8a8"/><rect x="4" y="4" width="1" height="1" fill="#4a4a4a"/><rect x="6" y="0" width="1" height="1" fill="#a8a8a8"/><rect x="7" y="1" width="1" height="1" fill="#4a4a4a"/><rect x="6" y="3" width="1" height="1" fill="#a8a8a8"/><rect x="7" y="4" width="1" height="1" fill="#4a4a4a"/><rect x="9" y="0" width="1" height="1" fill="#a8a8a8"/><rect x="10" y="1" width="1" height="1" fill="#4a4a4a"/><rect x="9" y="3" width="1" height="1" fill="#a8a8a8"/><rect x="10" y="4" width="1" height="1" fill="#4a4a4a"/></svg>
<span class="t" style="left:15.3px;top:418px;font-size:11px;color:#000;">Vector</span>
<div style="left:8px;top:435px;width:124px;height:58px;background:linear-gradient(#9f9f9f,#b6b6b6);border:1px solid #2b2b2b;border-radius:9px;box-shadow:0 1px 0 rgba(255,255,255,0.13);"></div>
<div style="left:9px;top:436px;width:124px;height:18px;background:linear-gradient(#9f9f9f,#b6b6b6);border-radius:8px 8px 0 0;"></div>
<svg style="left:14px;top:441.5px" width="4" height="7"><polygon points="4,0 0,3.5 4,7" fill="#7a7a7a"/></svg>
<svg style="left:124px;top:441.5px" width="4" height="7"><polygon points="0,0 4,3.5 0,7" fill="#7a7a7a"/></svg>
<span class="t" style="left:24px;top:438px;font-size:11px;color:#000;">X:</span>
<span class="t" style="left:86.96px;top:438px;font-size:11px;color:#000;letter-spacing:0.496px;">0.000</span>
<div style="left:9px;top:455px;width:124px;height:19px;background:linear-gradient(#9f9f9f,#b6b6b6);border-radius:0;"></div>
<div style="left:9px;top:454px;width:124px;height:1px;background:#2b2b2b;"></div>
<svg style="left:14px;top:461px" width="4" height="7"><polygon points="4,0 0,3.5 4,7" fill="#7a7a7a"/></svg>
<svg style="left:124px;top:461px" width="4" height="7"><polygon points="0,0 4,3.5 0,7" fill="#7a7a7a"/></svg>
<span class="t" style="left:24px;top:457px;font-size:11px;color:#000;">Y:</span>
<span class="t" style="left:86.96px;top:457px;font-size:11px;color:#000;letter-spacing:0.496px;">0.000</span>
<div style="left:9px;top:475px;width:124px;height:19px;background:linear-gradient(#9f9f9f,#b6b6b6);border-radius:0 0 8px 8px;"></div>
<div style="left:9px;top:474px;width:124px;height:1px;background:#2b2b2b;"></div>
<svg style="left:14px;top:481px" width="4" height="7"><polygon points="4,0 0,3.5 4,7" fill="#7a7a7a"/></svg>
<svg style="left:124px;top:481px" width="4" height="7"><polygon points="0,0 4,3.5 0,7" fill="#7a7a7a"/></svg>
<span class="t" style="left:24px;top:477px;font-size:11px;color:#000;">Z:</span>
<span class="t" style="left:83.3px;top:477px;font-size:11px;color:#000;letter-spacing:0.413px;">-0.338</span>
<span class="t" style="left:15.3px;top:503px;font-size:11px;color:#000;">Constraint Axis</span>
<div style="left:11px;top:523px;width:12px;height:12px;background:linear-gradient(#575757,#3a3a3a);border:1px solid #2b2b2b;border-radius:3.5px;box-shadow:0 1px 0 rgba(255,255,255,0.13);"></div>
<span class="t" style="left:33.3px;top:523px;font-size:11px;color:#000;">X</span>
<div style="left:11px;top:543px;width:12px;height:12px;background:linear-gradient(#575757,#3a3a3a);border:1px solid #2b2b2b;border-radius:3.5px;box-shadow:0 1px 0 rgba(255,255,255,0.13);"></div>
<span class="t" style="left:33.3px;top:543px;font-size:11px;color:#000;">Y</span>
<div style="left:11px;top:563px;width:12px;height:12px;background:linear-gradient(#575757,#3a3a3a);border:1px solid #2b2b2b;border-radius:3.5px;box-shadow:0 1px 0 rgba(255,255,255,0.13);"></div>
<svg style="left:11px;top:560px" width="18" height="18"><path d="M3.3 9.6 L6.3 13.2 L12.4 4" stroke="#fff" stroke-width="2" fill="none" stroke-linecap="round" stroke-linejoin="round"/></svg>
<span class="t" style="left:33.3px;top:563px;font-size:11px;color:#fff;">Z</span>
<span class="t" style="left:15.3px;top:588px;font-size:11px;color:#000;">Orientation</span>
<div style="left:142px;top:388px;width:11px;height:205px;background:#5c5c5c;border:1px solid #3a3a3a;border-radius:6.5px;"></div>
<div style="left:142px;top:388px;width:11px;height:95px;background:linear-gradient(90deg,#9c9c9c,#8a8a8a 40%,#6c6c6c);border:1px solid #2e2e2e;border-radius:6.5px;"></div>
<div style="left:845px;top:28px;width:179px;height:571px;background:#727272;"></div>
<div style="left:844px;top:28px;width:1px;height:571px;background:#868686;"></div>
<svg style="left:857.5px;top:35px" width="8" height="8"><polygon points="0,0 8,0 4.0,8" fill="#1e1e1e"/></svg>
<span class="t" style="left:870.5px;top:31px;font-size:12px;color:#000;">Transform</span>
<svg style="left:986px;top:38px" width="11" height="5" shape-rendering="crispEdges"><rect x="0" y="0" width="1" height="1" fill="#a8a8a8"/><rect x="1" y="1" width="1" height="1" fill="#4a4a4a"/><rect x="0" y="3" width="1" height="1" fill="#a8a8a8"/><rect x="1" y="4" width="1" height="1" fill="#4a4a4a"/><rect x="3" y="0" width="1" height="1" fill="#a8a8a8"/><rect x="4" y="1" width="1" height="1" fill="#4a4a4a"/><rect x="3" y="3" width="1" height="1" fill="#a8a8a8"/><rect x="4" y="4" width="1" height="1" fill="#4a4a4a"/><rect x="6" y="0" width="1" height="1" fill="#a8a8a8"/><rect x="7" y="1" width="1" height="1" fill="#4a4a4a"/><rect x="6" y="3" width="1" height="1" fill="#a8a8a8"/><rect x="7" y="4" width="1" height="1" fill="#4a4a4a"/><rect x="9" y="0" width="1" height="1" fill="#a8a8a8"/><rect x="10" y="1" width="1" height="1" fill="#4a4a4a"/><rect x="9" y="3" width="1" height="1" fill="#a8a8a8"/><rect x="10" y="4" width="1" height="1" fill="#4a4a4a"/></svg>
<span class="t" style="left:860.4px;top:62px;font-size:11px;color:#000;">Location:</span>
<div style="left:852px;top:79px;width:109px;height:58px;background:linear-gradient(#9f9f9f,#b6b6b6);border:1px solid #2b2b2b;border-radius:9px;box-shadow:0 1px 0 rgba(255,255,255,0.13);"></div>
<div style="left:853px;top:80px;width:109px;height:18px;background:linear-gradient(#9f9f9f,#b6b6b6);border-radius:8px 8px 0 0;"></div>
<svg style="left:858px;top:85.5px" width="4" height="7"><polygon points="4,0 0,3.5 4,7" fill="#7a7a7a"/></svg>
<svg style="left:953px;top:85.5px" width="4" height="7"><polygon points="0,0 4,3.5 0,7" fill="#7a7a7a"/></svg>
<span class="t" style="left:868px;top:82px;font-size:11px;color:#000;">X:</span>
<span class="t" style="left:902.47px;top:82px;font-size:11px;color:#000;letter-spacing:0.531px;">2.71521</span>
<div style="left:853px;top:99px;width:109px;height:19px;background:linear-gradient(#9f9f9f,#b6b6b6);border-radius:0;"></div>
<div style="left:853px;top:98px;width:109px;height:1px;background:#2b2b2b;"></div>
<svg style="left:858px;top:105px" width="4" height="7"><polygon points="4,0 0,3.5 4,7" fill="#7a7a7a"/></svg>
<svg style="left:953px;top:105px" width="4" height="7"><polygon points="0,0 4,3.5 0,7" fill="#7a7a7a"/></svg>
<span class="t" style="left:868px;top:101px;font-size:11px;color:#000;">Y:</span>
<span class="t" style="left:898.81px;top:101px;font-size:11px;color:#000;letter-spacing:0.465px;">-0.02899</span>
<div style="left:853px;top:119px;width:109px;height:19px;background:linear-gradient(#9f9f9f,#b6b6b6);border-radius:0 0 8px 8px;"></div>
<div style="left:853px;top:118px;width:109px;height:1px;background:#2b2b2b;"></div>
<svg style="left:858px;top:125px" width="4" height="7"><polygon points="4,0 0,3.5 4,7" fill="#7a7a7a"/></svg>
<svg style="left:953px;top:125px" width="4" height="7"><polygon points="0,0 4,3.5 0,7" fill="#7a7a7a"/></svg>
<span class="t" style="left:868px;top:121px;font-size:11px;color:#000;">Z:</span>
<span class="t" style="left:902.47px;top:121px;font-size:11px;color:#000;letter-spacing:0.531px;">5.29371</span>
<div style="left:971px;top:79px;width:26px;height:58px;background:linear-gradient(#a9a9a9,#8b8b8b);border:1px solid #2b2b2b;border-radius:4px;box-shadow:0 1px 0 rgba(255,255,255,0.13);"></div>
<div style="left:972px;top:80px;width:26px;height:18px;background:linear-gradient(#a9a9a9,#8b8b8b);border-radius:3px 3px 0 0;"></div>
<svg style="left:976.6px;top:81.1px" width="16" height="16" viewBox="0 0 16 16"><path d="M2.5 7.5 V4.2 a2.6 2.6 0 0 1 5.2 0 V5.5" fill="none" stroke="#1a1a1a" stroke-width="2.6"/><path d="M2.5 7.5 V4.2 a2.6 2.6 0 0 1 5.2 0 V5.5" fill="none" stroke="#e8e8e8" stroke-width="1.1"/><rect x="5.5" y="7.5" width="10" height="6.6" fill="#e4e4e4" stroke="#1a1a1a" stroke-width="1"/><rect x="6.5" y="10.8" width="8" height="2.8" fill="#b8b8b8"/><rect x="9.9" y="9.3" width="1.4" height="2.4" fill="#222"/></svg>
<div style="left:972px;top:99px;width:26px;height:19px;background:linear-gradient(#a9a9a9,#8b8b8b);border-radius:0;"></div>
<div style="left:972px;top:98px;width:26px;height:1px;background:#2b2b2b;"></div>
<svg style="left:976.6px;top:100.6px" width="16" height="16" viewBox="0 0 16 16"><path d="M2.5 7.5 V4.2 a2.6 2.6 0 0 1 5.2 0 V5.5" fill="none" stroke="#1a1a1a" stroke-width="2.6"/><path d="M2.5 7.5 V4.2 a2.6 2.6 0 0 1 5.2 0 V5.5" fill="none" stroke="#e8e8e8" stroke-width="1.1"/><rect x="5.5" y="7.5" width="10" height="6.6" fill="#e4e4e4" stroke="#1a1a1a" stroke-width="1"/><rect x="6.5" y="10.8" width="8" height="2.8" fill="#b8b8b8"/><rect x="9.9" y="9.3" width="1.4" height="2.4" fill="#222"/></svg>
<div style="left:972px;top:119px;width:26px;height:19px;background:linear-gradient(#a9a9a9,#8b8b8b);border-radius:0 0 3px 3px;"></div>
<div style="left:972px;top:118px;width:26px;height:1px;background:#2b2b2b;"></div>
<svg style="left:976.6px;top:120.6px" width="16" height="16" viewBox="0 0 16 16"><path d="M2.5 7.5 V4.2 a2.6 2.6 0 0 1 5.2 0 V5.5" fill="none" stroke="#1a1a1a" stroke-width="2.6"/><path d="M2.5 7.5 V4.2 a2.6 2.6 0 0 1 5.2 0 V5.5" fill="none" stroke="#e8e8e8" stroke-width="1.1"/><rect x="5.5" y="7.5" width="10" height="6.6" fill="#e4e4e4" stroke="#1a1a1a" stroke-width="1"/><rect x="6.5" y="10.8" width="8" height="2.8" fill="#b8b8b8"/><rect x="9.9" y="9.3" width="1.4" height="2.4" fill="#222"/></svg>
<span class="t" style="left:860.4px;top:144px;font-size:11px;color:#000;">Rotation:</span>
<div style="left:852px;top:161px;width:109px;height:58px;background:linear-gradient(#9f9f9f,#b6b6b6);border:1px solid #2b2b2b;border-radius:9px;box-shadow:0 1px 0 rgba(255,255,255,0.13);"></div>
<div style="left:853px;top:162px;width:109px;height:18px;background:linear-gradient(#9f9f9f,#b6b6b6);border-radius:8px 8px 0 0;"></div>
<svg style="left:858px;top:167.5px" width="4" height="7"><polygon points="4,0 0,3.5 4,7" fill="#7a7a7a"/></svg>
<svg style="left:953px;top:167.5px" width="4" height="7"><polygon points="0,0 4,3.5 0,7" fill="#7a7a7a"/></svg>
<span class="t" style="left:868px;top:164px;font-size:11px;color:#000;">X:</span>
<span class="t" style="left:934.85px;top:164px;font-size:11px;color:#000;letter-spacing:0.310px;">0°</span>
<div style="left:853px;top:181px;width:109px;height:19px;background:linear-gradient(#9f9f9f,#b6b6b6);border-radius:0;"></div>
<div style="left:853px;top:180px;width:109px;height:1px;background:#2b2b2b;"></div>
<svg style="left:858px;top:187px" width="4" height="7"><polygon points="4,0 0,3.5 4,7" fill="#7a7a7a"/></svg>
<svg style="left:953px;top:187px" width="4" height="7"><polygon points="0,0 4,3.5 0,7" fill="#7a7a7a"/></svg>
<span class="t" style="left:868px;top:183px;font-size:11px;color:#000;">Y:</span>
<span class="t" style="left:934.85px;top:183px;font-size:11px;color:#000;letter-spacing:0.310px;">0°</span>
<div style="left:853px;top:201px;width:109px;height:19px;background:linear-gradient(#9f9f9f,#b6b6b6);border-radius:0 0 8px 8px;"></div>
<div style="left:853px;top:200px;width:109px;height:1px;background:#2b2b2b;"></div>
<svg style="left:858px;top:207px" width="4" height="7"><polygon points="4,0 0,3.5 4,7" fill="#7a7a7a"/></svg>
<svg style="left:953px;top:207px" width="4" height="7"><polygon points="0,0 4,3.5 0,7" fill="#7a7a7a"/></svg>
<span class="t" style="left:868px;top:203px;font-size:11px;color:#000;">Z:</span>
<span class="t" style="left:934.85px;top:203px;font-size:11px;color:#000;letter-spacing:0.310px;">0°</span>
<div style="left:971px;top:161px;width:26px;height:58px;background:linear-gradient(#a9a9a9,#8b8b8b);border:1px solid #2b2b2b;border-radius:4px;box-shadow:0 1px 0 rgba(255,255,255,0.13);"></div>
<div style="left:972px;top:162px;width:26px;height:18px;background:linear-gradient(#a9a9a9,#8b8b8b);border-radius:3px 3px 0 0;"></div>
<svg style="left:976.6px;top:163.1px" width="16" height="16" viewBox="0 0 16 16"><path d="M2.5 7.5 V4.2 a2.6 2.6 0 0 1 5.2 0 V5.5" fill="none" stroke="#1a1a1a" stroke-width="2.6"/><path d="M2.5 7.5 V4.2 a2.6 2.6 0 0 1 5.2 0 V5.5" fill="none" stroke="#e8e8e8" stroke-width="1.1"/><rect x="5.5" y="7.5" width="10" height="6.6" fill="#e4e4e4" stroke="#1a1a1a" stroke-width="1"/><rect x="6.5" y="10.8" width="8" height="2.8" fill="#b8b8b8"/><rect x="9.9" y="9.3" width="1.4" height="2.4" fill="#222"/></svg>
<div style="left:972px;top:181px;width:26px;height:19px;background:linear-gradient(#a9a9a9,#8b8b8b);border-radius:0;"></div>
<div style="left:972px;top:180px;width:26px;height:1px;background:#2b2b2b;"></div>
<svg style="left:976.6px;top:182.6px" width="16" height="16" viewBox="0 0 16 16"><path d="M2.5 7.5 V4.2 a2.6 2.6 0 0 1 5.2 0 V5.5" fill="none" stroke="#1a1a1a" stroke-width="2.6"/><path d="M2.5 7.5 V4.2 a2.6 2.6 0 0 1 5.2 0 V5.5" fill="none" stroke="#e8e8e8" stroke-width="1.1"/><rect x="5.5" y="7.5" width="10" height="6.6" fill="#e4e4e4" stroke="#1a1a1a" stroke-width="1"/><rect x="6.5" y="10.8" width="8" height="2.8" fill="#b8b8b8"/><rect x="9.9" y="9.3" width="1.4" height="2.4" fill="#222"/></svg>
<div style="left:972px;top:201px;width:26px;height:19px;background:linear-gradient(#a9a9a9,#8b8b8b);border-radius:0 0 3px 3px;"></div>
<div style="left:972px;top:200px;width:26px;height:1px;background:#2b2b2b;"></div>
<svg style="left:976.6px;top:202.6px" width="16" height="16" viewBox="0 0 16 16"><path d="M2.5 7.5 V4.2 a2.6 2.6 0 0 1 5.2 0 V5.5" fill="none" stroke="#1a1a1a" stroke-width="2.6"/><path d="M2.5 7.5 V4.2 a2.6 2.6 0 0 1 5.2 0 V5.5" fill="none" stroke="#e8e8e8" stroke-width="1.1"/><rect x="5.5" y="7.5" width="10" height="6.6" fill="#e4e4e4" stroke="#1a1a1a" stroke-width="1"/><rect x="6.5" y="10.8" width="8" height="2.8" fill="#b8b8b8"/><rect x="9.9" y="9.3" width="1.4" height="2.4" fill="#222"/></svg>
<div style="left:852px;top:223px;width:145px;height:18px;background:linear-gradient(#565656,#373737);border:1px solid #2b2b2b;border-radius:4px;box-shadow:0 1px 0 rgba(255,255,255,0.13);"></div>
<span class="t" style="left:860px;top:226px;font-size:11px;color:#fff;">XYZ Euler</span>
<svg style="left:990px;top:226.6px" width="5.6" height="12.8"><polygon points="0,5.2 2.8,0 5.6,5.2" fill="#b4b4b4"/><polygon points="0,7.6 2.8,12.8 5.6,7.6" fill="#b4b4b4"/></svg>
<span class="t" style="left:860.4px;top:248px;font-size:11px;color:#000;">Scale:</span>
<div style="left:852px;top:265px;width:109px;height:58px;background:linear-gradient(#9f9f9f,#b6b6b6);border:1px solid #2b2b2b;border-radius:9px;box-shadow:0 1px 0 rgba(255,255,255,0.13);"></div>
<div style="left:853px;top:266px;width:109px;height:18px;background:linear-gradient(#9f9f9f,#b6b6b6);border-radius:8px 8px 0 0;"></div>
<svg style="left:858px;top:271.5px" width="4" height="7"><polygon points="4,0 0,3.5 4,7" fill="#7a7a7a"/></svg>
<svg style="left:953px;top:271.5px" width="4" height="7"><polygon points="0,0 4,3.5 0,7" fill="#7a7a7a"/></svg>
<span class="t" style="left:868px;top:268px;font-size:11px;color:#000;">X:</span>
<span class="t" style="left:915.96px;top:268px;font-size:11px;color:#000;letter-spacing:0.496px;">1.000</span>
<div style="left:853px;top:285px;width:109px;height:19px;background:linear-gradient(#9f9f9f,#b6b6b6);border-radius:0;"></div>
<div style="left:853px;top:284px;width:109px;height:1px;background:#2b2b2b;"></div>
<svg style="left:858px;top:291px" width="4" height="7"><polygon points="4,0 0,3.5 4,7" fill="#7a7a7a"/></svg>
<svg style="left:953px;top:291px" width="4" height="7"><polygon points="0,0 4,3.5 0,7" fill="#7a7a7a"/></svg>
<span class="t" style="left:868px;top:287px;font-size:11px;color:#000;">Y:</span>
<span class="t" style="left:915.96px;top:287px;font-size:11px;color:#000;letter-spacing:0.496px;">1.000</span>
<div style="left:853px;top:305px;width:109px;height:19px;background:linear-gradient(#9f9f9f,#b6b6b6);border-radius:0 0 8px 8px;"></div>
<div style="left:853px;top:304px;width:109px;height:1px;background:#2b2b2b;"></div>
<svg style="left:858px;top:311px" width="4" height="7"><polygon points="4,0 0,3.5 4,7" fill="#7a7a7a"/></svg>
<svg style="left:953px;top:311px" width="4" height="7"><polygon points="0,0 4,3.5 0,7" fill="#7a7a7a"/></svg>
<span class="t" style="left:868px;top:307px;font-size:11px;color:#000;">Z:</span>
<span class="t" style="left:915.96px;top:307px;font-size:11px;color:#000;letter-spacing:0.496px;">1.000</span>
<div style="left:971px;top:265px;width:26px;height:58px;background:linear-gradient(#a9a9a9,#8b8b8b);border:1px solid #2b2b2b;border-radius:4px;box-shadow:0 1px 0 rgba(255,255,255,0.13);"></div>
<div style="left:972px;top:266px;width:26px;height:18px;background:linear-gradient(#a9a9a9,#8b8b8b);border-radius:3px 3px 0 0;"></div>
<svg style="left:976.6px;top:267.1px" width="16" height="16" viewBox="0 0 16 16"><path d="M2.5 7.5 V4.2 a2.6 2.6 0 0 1 5.2 0 V5.5" fill="none" stroke="#1a1a1a" stroke-width="2.6"/><path d="M2.5 7.5 V4.2 a2.6 2.6 0 0 1 5.2 0 V5.5" fill="none" stroke="#e8e8e8" stroke-width="1.1"/><rect x="5.5" y="7.5" width="10" height="6.6" fill="#e4e4e4" stroke="#1a1a1a" stroke-width="1"/><rect x="6.5" y="10.8" width="8" height="2.8" fill="#b8b8b8"/><rect x="9.9" y="9.3" width="1.4" height="2.4" fill="#222"/></svg>
<div style="left:972px;top:285px;width:26px;height:19px;background:linear-gradient(#a9a9a9,#8b8b8b);border-radius:0;"></div>
<div style="left:972px;top:284px;width:26px;height:1px;background:#2b2b2b;"></div>
<svg style="left:976.6px;top:286.6px" width="16" height="16" viewBox="0 0 16 16"><path d="M2.5 7.5 V4.2 a2.6 2.6 0 0 1 5.2 0 V5.5" fill="none" stroke="#1a1a1a" stroke-width="2.6"/><path d="M2.5 7.5 V4.2 a2.6 2.6 0 0 1 5.2 0 V5.5" fill="none" stroke="#e8e8e8" stroke-width="1.1"/><rect x="5.5" y="7.5" width="10" height="6.6" fill="#e4e4e4" stroke="#1a1a1a" stroke-width="1"/><rect x="6.5" y="10.8" width="8" height="2.8" fill="#b8b8b8"/><rect x="9.9" y="9.3" width="1.4" height="2.4" fill="#222"/></svg>
<div style="left:972px;top:305px;width:26px;height:19px;background:linear-gradient(#a9a9a9,#8b8b8b);border-radius:0 0 3px 3px;"></div>
<div style="left:972px;top:304px;width:26px;height:1px;background:#2b2b2b;"></div>
<svg style="left:976.6px;top:306.6px" width="16" height="16" viewBox="0 0 16 16"><path d="M2.5 7.5 V4.2 a2.6 2.6 0 0 1 5.2 0 V5.5" fill="none" stroke="#1a1a1a" stroke-width="2.6"/><path d="M2.5 7.5 V4.2 a2.6 2.6 0 0 1 5.2 0 V5.5" fill="none" stroke="#e8e8e8" stroke-width="1.1"/><rect x="5.5" y="7.5" width="10" height="6.6" fill="#e4e4e4" stroke="#1a1a1a" stroke-width="1"/><rect x="6.5" y="10.8" width="8" height="2.8" fill="#b8b8b8"/><rect x="9.9" y="9.3" width="1.4" height="2.4" fill="#222"/></svg>
<span class="t" style="left:860.4px;top:330px;font-size:11px;color:#000;">Dimensions:</span>
<div style="left:852px;top:347px;width:145px;height:58px;background:linear-gradient(#9f9f9f,#b6b6b6);border:1px solid #2b2b2b;border-radius:9px;box-shadow:0 1px 0 rgba(255,255,255,0.13);"></div>
<div style="left:853px;top:348px;width:145px;height:18px;background:linear-gradient(#9f9f9f,#b6b6b6);border-radius:8px 8px 0 0;"></div>
<svg style="left:858px;top:353.5px" width="4" height="7"><polygon points="4,0 0,3.5 4,7" fill="#7a7a7a"/></svg>
<svg style="left:989px;top:353.5px" width="4" height="7"><polygon points="0,0 4,3.5 0,7" fill="#7a7a7a"/></svg>
<span class="t" style="left:868px;top:350px;font-size:11px;color:#000;">X:</span>
<span class="t" style="left:951.96px;top:350px;font-size:11px;color:#000;letter-spacing:0.496px;">1.063</span>
<div style="left:853px;top:367px;width:145px;height:19px;background:linear-gradient(#9f9f9f,#b6b6b6);border-radius:0;"></div>
<div style="left:853px;top:366px;width:145px;height:1px;background:#2b2b2b;"></div>
<svg style="left:858px;top:373px" width="4" height="7"><polygon points="4,0 0,3.5 4,7" fill="#7a7a7a"/></svg>
<svg style="left:989px;top:373px" width="4" height="7"><polygon points="0,0 4,3.5 0,7" fill="#7a7a7a"/></svg>
<span class="t" style="left:868px;top:369px;font-size:11px;color:#000;">Y:</span>
<span class="t" style="left:951.96px;top:369px;font-size:11px;color:#000;letter-spacing:0.496px;">4.487</span>
<div style="left:853px;top:387px;width:145px;height:19px;background:linear-gradient(#9f9f9f,#b6b6b6);border-radius:0 0 8px 8px;"></div>
<div style="left:853px;top:386px;width:145px;height:1px;background:#2b2b2b;"></div>
<svg style="left:858px;top:393px" width="4" height="7"><polygon points="4,0 0,3.5 4,7" fill="#7a7a7a"/></svg>
<svg style="left:989px;top:393px" width="4" height="7"><polygon points="0,0 4,3.5 0,7" fill="#7a7a7a"/></svg>
<span class="t" style="left:868px;top:389px;font-size:11px;color:#000;">Z:</span>
<span class="t" style="left:951.96px;top:389px;font-size:11px;color:#000;letter-spacing:0.496px;">4.085</span>
<div style="left:849px;top:414px;width:151px;height:1px;background:#4e4e4e;"></div>
<div style="left:849px;top:415px;width:151px;height:1px;background:#7c7c7c;"></div>
<svg style="left:857.5px;top:423px" width="8" height="8"><polygon points="0,0 8,0 4.0,8" fill="#1e1e1e"/></svg>
<div style="left:869.5px;top:420px;width:12px;height:12px;background:linear-gradient(#575757,#3a3a3a);border:1px solid #2b2b2b;border-radius:3.5px;box-shadow:0 1px 0 rgba(255,255,255,0.13);"></div>
<svg style="left:869.5px;top:417px" width="18" height="18"><path d="M3.3 9.6 L6.3 13.2 L12.4 4" stroke="#fff" stroke-width="2" fill="none" stroke-linecap="round" stroke-linejoin="round"/></svg>
<span class="t" style="left:889.5px;top:419px;font-size:12px;color:#000;">Grease Pencil Layers</span>
<svg style="left:986px;top:426px" width="11" height="5" shape-rendering="crispEdges"><rect x="0" y="0" width="1" height="1" fill="#a8a8a8"/><rect x="1" y="1" width="1" height="1" fill="#4a4a4a"/><rect x="0" y="3" width="1" height="1" fill="#a8a8a8"/><rect x="1" y="4" width="1" height="1" fill="#4a4a4a"/><rect x="3" y="0" width="1" height="1" fill="#a8a8a8"/><rect x="4" y="1" width="1" height="1" fill="#4a4a4a"/><rect x="3" y="3" width="1" height="1" fill="#a8a8a8"/><rect x="4" y="4" width="1" height="1" fill="#4a4a4a"/><rect x="6" y="0" width="1" height="1" fill="#a8a8a8"/><rect x="7" y="1" width="1" height="1" fill="#4a4a4a"/><rect x="6" y="3" width="1" height="1" fill="#a8a8a8"/><rect x="7" y="4" width="1" height="1" fill="#4a4a4a"/><rect x="9" y="0" width="1" height="1" fill="#a8a8a8"/><rect x="10" y="1" width="1" height="1" fill="#4a4a4a"/><rect x="9" y="3" width="1" height="1" fill="#a8a8a8"/><rect x="10" y="4" width="1" height="1" fill="#4a4a4a"/></svg>
<div style="left:852px;top:447px;width:145px;height:18px;background:linear-gradient(#555,#383838);border:1px solid #2b2b2b;border-radius:4px;box-shadow:0 1px 0 rgba(255,255,255,0.13);"></div>
<div style="left:853px;top:448px;width:71px;height:18px;background:linear-gradient(#4a73b3,#648dcf);border-radius:3px 0 0 3px;"></div>
<div style="left:924px;top:448px;width:1px;height:18px;background:#2b2b2b;"></div>
<span class="t" style="left:872.89px;top:450px;font-size:11px;color:#fff;">Scene</span>
<span class="t" style="left:945.59px;top:450px;font-size:11px;color:#fff;">Object</span>
<div style="left:852px;top:472px;width:145px;height:18px;background:linear-gradient(#a9a9a9,#8b8b8b);border:1px solid #2b2b2b;border-radius:4px;box-shadow:0 1px 0 rgba(255,255,255,0.13);"></div>
<div style="left:853px;top:473px;width:31px;height:18px;background:linear-gradient(#565656,#373737);border-radius:3px 0 0 3px;"></div>
<div style="left:884px;top:473px;width:1px;height:18px;background:#2b2b2b;"></div>
<svg style="left:875.2px;top:475.6px" width="5.6" height="12.8"><polygon points="0,5.2 2.8,0 5.6,5.2" fill="#b4b4b4"/><polygon points="0,7.6 2.8,12.8 5.6,7.6" fill="#b4b4b4"/></svg>
<svg style="left:856px;top:473.4px" width="16" height="16" viewBox="0 0 16 16"><path d="M1.2 15 L2.6 10.6 L11.6 1.6 L15 5 L6 14 Z" fill="#1a1a1a"/><path d="M3.4 10.9 L11 3.3 L13.3 5.6 L5.7 13.2 Z" fill="#86c232"/><path d="M3.9 11.2 L11.2 3.9" stroke="#c4e87a" stroke-width="0.9"/><path d="M11 3.3 L11.9 2.4 L14.2 4.7 L13.3 5.6 Z" fill="#e83a20"/><path d="M2 14.2 L3.4 10.9 L5.7 13.2 Z" fill="#f0dcb4"/><path d="M2 14.2 L2.5 13 L3.2 13.7Z" fill="#222"/></svg>
<svg style="left:888px;top:475px" width="14" height="14" viewBox="0 0 14 14"><path d="M7 1.5 V12.5 M1.5 7 H12.5" stroke="#1a1a1a" stroke-width="4.4"/><path d="M7 2.3 V11.7 M2.3 7 H11.7" stroke="#f0f0f0" stroke-width="2.2"/></svg>
<span class="t" style="left:937.5px;top:475px;font-size:11px;color:#000;">New</span>
<div style="left:852px;top:497px;width:145px;height:18px;background:linear-gradient(#a9a9a9,#8b8b8b);border:1px solid #2b2b2b;border-radius:4px;box-shadow:0 1px 0 rgba(255,255,255,0.13);"></div>
<span class="t" style="left:899.2px;top:500px;font-size:11px;color:#000;">New Layer</span>
<div style="left:849px;top:524px;width:151px;height:1px;background:#4e4e4e;"></div>
<div style="left:849px;top:525px;width:151px;height:1px;background:#7c7c7c;"></div>
<svg style="left:857.5px;top:532.5px" width="8" height="8"><polygon points="0,0 8,0 4.0,8" fill="#1e1e1e"/></svg>
<span class="t" style="left:870.5px;top:529px;font-size:12px;color:#000;">View</span>
<svg style="left:986px;top:535.5px" width="11" height="5" shape-rendering="crispEdges"><rect x="0" y="0" width="1" height="1" fill="#a8a8a8"/><rect x="1" y="1" width="1" height="1" fill="#4a4a4a"/><rect x="0" y="3" width="1" height="1" fill="#a8a8a8"/><rect x="1" y="4" width="1" height="1" fill="#4a4a4a"/><rect x="3" y="0" width="1" height="1" fill="#a8a8a8"/><rect x="4" y="1" width="1" height="1" fill="#4a4a4a"/><rect x="3" y="3" width="1" height="1" fill="#a8a8a8"/><rect x="4" y="4" width="1" height="1" fill="#4a4a4a"/><rect x="6" y="0" width="1" height="1" fill="#a8a8a8"/><rect x="7" y="1" width="1" height="1" fill="#4a4a4a"/><rect x="6" y="3" width="1" height="1" fill="#a8a8a8"/><rect x="7" y="4" width="1" height="1" fill="#4a4a4a"/><rect x="9" y="0" width="1" height="1" fill="#a8a8a8"/><rect x="10" y="1" width="1" height="1" fill="#4a4a4a"/><rect x="9" y="3" width="1" height="1" fill="#a8a8a8"/><rect x="10" y="4" width="1" height="1" fill="#4a4a4a"/></svg>
<div style="left:852px;top:557px;width:145px;height:18px;background:linear-gradient(#9f9f9f,#b6b6b6);border:1px solid #2b2b2b;border-radius:9px;box-shadow:0 1px 0 rgba(255,255,255,0.13);"></div>
<svg style="left:858px;top:563.5px" width="4" height="7"><polygon points="4,0 0,3.5 4,7" fill="#7a7a7a"/></svg>
<svg style="left:989px;top:563.5px" width="4" height="7"><polygon points="0,0 4,3.5 0,7" fill="#7a7a7a"/></svg>
<span class="t" style="left:868px;top:560px;font-size:11px;color:#000;">Lens:</span>
<span class="t" style="left:945.21px;top:560px;font-size:11px;color:#000;letter-spacing:0.517px;">35.000</span>
<span class="t" style="left:860.4px;top:582px;font-size:11px;color:#000;">Lock to Object:</span>
<div style="left:1007px;top:32px;width:11px;height:562px;background:#5c5c5c;border:1px solid #3a3a3a;border-radius:6.5px;"></div>
<div style="left:1007px;top:32px;width:11px;height:259px;background:linear-gradient(90deg,#9c9c9c,#8a8a8a 40%,#6c6c6c);border:1px solid #2e2e2e;border-radius:6.5px;"></div>
<svg style="left:1012px;top:28px" width="12" height="12"><path d="M1 0 L12 11" stroke="#d0d0d0" stroke-width="1" opacity="0.75"/><path d="M2 0 L12 10" stroke="#222" stroke-width="1.1" opacity="0.9"/><path d="M4 0 L12 8" stroke="#d0d0d0" stroke-width="1" opacity="0.75"/><path d="M5 0 L12 7" stroke="#222" stroke-width="1.1" opacity="0.9"/><path d="M7 0 L12 5" stroke="#d0d0d0" stroke-width="1" opacity="0.75"/><path d="M8 0 L12 4" stroke="#222" stroke-width="1.1" opacity="0.9"/><path d="M10 0 L12 2" stroke="#d0d0d0" stroke-width="1" opacity="0.75"/><path d="M11 0 L12 1" stroke="#222" stroke-width="1.1" opacity="0.9"/></svg>
<div style="left:0px;top:599px;width:1024px;height:26px;background:#696969;"></div>
<div style="left:0px;top:599px;width:1024px;height:1px;background:#787878;"></div>
<div style="left:0px;top:625px;width:1024px;height:1px;background:#1c1c1c;"></div>
<div style="left:0px;top:626px;width:1024px;height:1px;background:#555;"></div>
<div style="left:9px;top:602px;width:30px;height:18px;background:linear-gradient(#565656,#373737);border:1px solid #2b2b2b;border-radius:4px;box-shadow:0 1px 0 rgba(255,255,255,0.13);"></div>
<svg style="left:31.6px;top:605.6px" width="5.6" height="12.8"><polygon points="0,5.2 2.8,0 5.6,5.2" fill="#b4b4b4"/><polygon points="0,7.6 2.8,12.8 5.6,7.6" fill="#b4b4b4"/></svg>
<svg style="left:13px;top:604px;overflow:visible" width="16" height="16" viewBox="0 0 16 16"><path d="M8 0.8 L15.2 2.8 L14.4 10.6 L8 14.6 L1.6 10.6 L0.8 2.8 Z" fill="#f6f6f6" stroke="#0c0c0c" stroke-width="1.1" stroke-linejoin="round"/><path d="M8 5.2 L15.2 2.8 L14.4 10.6 L8 14.6 Z" fill="#6c6c6c"/><path d="M8 5.2 L0.8 2.8 L1.6 10.6 L8 14.6 Z" fill="#d6d6d6"/><path d="M8 0.8 L15.2 2.8 L14.4 10.6 L8 14.6 L1.6 10.6 L0.8 2.8 Z" fill="none" stroke="#0c0c0c" stroke-width="1.1" stroke-linejoin="round"/></svg>
<span class="t" style="left:53.4px;top:605px;font-size:11px;color:#000;letter-spacing:-0.060px;">View</span>
<span class="t" style="left:98.2px;top:605px;font-size:11px;color:#000;letter-spacing:0.034px;">Select</span>
<span class="t" style="left:149.4px;top:605px;font-size:11px;color:#000;letter-spacing:-0.198px;">Add</span>
<span class="t" style="left:188.4px;top:605px;font-size:11px;color:#000;letter-spacing:0.131px;">Object</span>
<div style="left:234px;top:602px;width:110px;height:18px;background:linear-gradient(#565656,#373737);border:1px solid #2b2b2b;border-radius:4px;box-shadow:0 1px 0 rgba(255,255,255,0.13);"></div>
<span class="t" style="left:258.6px;top:605px;font-size:11px;color:#fff;">Object Mode</span>
<svg style="left:337px;top:605.6px" width="5.6" height="12.8"><polygon points="0,5.2 2.8,0 5.6,5.2" fill="#b4b4b4"/><polygon points="0,7.6 2.8,12.8 5.6,7.6" fill="#b4b4b4"/></svg>
<svg style="left:239.2px;top:604.8px;overflow:visible" width="14" height="14" viewBox="0 0 16 16"><path d="M7 0.8 L13 3 L13 10.2 L7 13.4 L1 10.2 L1 3 Z" fill="#fbe2b4" stroke="#5a3408" stroke-width="0.9" stroke-linejoin="round"/><path d="M7 5.4 L13 3 L13 10.2 L7 13.4 Z" fill="#b06c14"/><path d="M7 5.4 L1 3 L1 10.2 L7 13.4 Z" fill="#f2a032"/><path d="M1 3 L7 5.4 L13 3 M7 5.4 V13.4" stroke="#fff2d8" stroke-width="0.9" fill="none"/></svg>
<div style="left:353px;top:602px;width:29px;height:18px;background:linear-gradient(#565656,#373737);border:1px solid #2b2b2b;border-radius:4px;box-shadow:0 1px 0 rgba(255,255,255,0.13);"></div>
<svg style="left:374.9px;top:605.6px" width="5.6" height="12.8"><polygon points="0,5.2 2.8,0 5.6,5.2" fill="#b4b4b4"/><polygon points="0,7.6 2.8,12.8 5.6,7.6" fill="#b4b4b4"/></svg>
<svg style="left:356.2px;top:603.8px;overflow:visible" width="16" height="16" viewBox="0 0 16 16"><defs><radialGradient id="sg3" cx="0.36" cy="0.32" r="0.75"><stop offset="0" stop-color="#fff"/><stop offset="0.6" stop-color="#ededed"/><stop offset="1" stop-color="#b8b8b8"/></radialGradient></defs><circle cx="8" cy="8" r="6.3" fill="url(#sg3)" stroke="#0a0a0a" stroke-width="1.1"/></svg>
<div style="left:390px;top:602px;width:48px;height:18px;background:linear-gradient(#a9a9a9,#8b8b8b);border:1px solid #2b2b2b;border-radius:4px;box-shadow:0 1px 0 rgba(255,255,255,0.13);"></div>
<div style="left:391px;top:603px;width:29px;height:18px;background:linear-gradient(#565656,#373737);border-radius:3px 0 0 3px;"></div>
<div style="left:420px;top:603px;width:1px;height:18px;background:#2b2b2b;"></div>
<svg style="left:411.8px;top:605.6px" width="5.6" height="12.8"><polygon points="0,5.2 2.8,0 5.6,5.2" fill="#b4b4b4"/><polygon points="0,7.6 2.8,12.8 5.6,7.6" fill="#b4b4b4"/></svg>
<svg style="left:393px;top:604px;overflow:visible" width="16" height="16" viewBox="0 0 16 16"><defs><radialGradient id="pg4" cx="0.36" cy="0.32" r="0.75"><stop offset="0" stop-color="#fff"/><stop offset="0.6" stop-color="#ececec"/><stop offset="1" stop-color="#b0b0b0"/></radialGradient></defs><circle cx="5.4" cy="5.1" r="4.4" fill="url(#pg4)" stroke="#111" stroke-width="0.9"/><circle cx="9.9" cy="10.9" r="4.4" fill="url(#pg4)" stroke="#111" stroke-width="0.9"/><rect x="5.7" y="6.5" width="3.4" height="3.4" fill="#fff" stroke="#1414e0" stroke-width="1.3"/></svg>
<svg style="left:422px;top:604px;overflow:visible" width="16" height="16" viewBox="0 0 16 16"><circle cx="3.1" cy="2.9" r="1.5" fill="#d8e2f4" stroke="#2c4fa4" stroke-width="1"/><circle cx="8" cy="2.9" r="1.5" fill="#d8e2f4" stroke="#2c4fa4" stroke-width="1"/><circle cx="13.1" cy="2.9" r="1.5" fill="#d8e2f4" stroke="#2c4fa4" stroke-width="1"/><path d="M0.8 10.9 L4.6 7.4 V9.7 H11.4 V7.4 L15.2 10.9 L11.4 14.4 V12.1 H4.6 V14.4 Z" fill="#fff" stroke="#222" stroke-width="0.8" stroke-linejoin="round"/></svg>
<div style="left:446px;top:602px;width:149px;height:18px;background:linear-gradient(#565656,#373737);border:1px solid #2b2b2b;border-radius:4px;box-shadow:0 1px 0 rgba(255,255,255,0.13);"></div>
<div style="left:447px;top:603px;width:19px;height:18px;background:linear-gradient(#565656,#6a6a6a);border-radius:3px 0 0 3px;"></div>
<div style="left:466px;top:603px;width:1px;height:18px;background:#2b2b2b;"></div>
<div style="left:467px;top:603px;width:19px;height:18px;background:linear-gradient(#4a73b3,#648dcf);"></div>
<div style="left:486px;top:603px;width:1px;height:18px;background:#2b2b2b;"></div>
<div style="left:506px;top:603px;width:1px;height:18px;background:#2b2b2b;"></div>
<div style="left:526px;top:603px;width:1px;height:18px;background:#2b2b2b;"></div>
<span class="t" style="left:534px;top:605px;font-size:11px;color:#fff;">Global</span>
<svg style="left:588.6px;top:605.6px" width="5.6" height="12.8"><polygon points="0,5.2 2.8,0 5.6,5.2" fill="#b4b4b4"/><polygon points="0,7.6 2.8,12.8 5.6,7.6" fill="#b4b4b4"/></svg>
<svg style="left:448.1px;top:604px;overflow:visible" width="16" height="16" viewBox="0 0 16 16"><path d="M8 9.7 V1.6" stroke="#1a1a1a" stroke-width="3.2" stroke-linecap="round"/><path d="M8 9.7 L1.4 14.2 M8 9.7 L14.6 14.2" stroke="#1a1a1a" stroke-width="3.2" stroke-linecap="round"/><path d="M8 9.7 V1.6" stroke="#5a8ee0" stroke-width="1.8" stroke-linecap="round"/><path d="M8 9.7 L1.4 14.2" stroke="#e0401c" stroke-width="1.8" stroke-linecap="round"/><path d="M8 9.7 L14.6 14.2" stroke="#3cc43c" stroke-width="1.8" stroke-linecap="round"/><circle cx="8" cy="1.9" r="1" fill="#fff"/><circle cx="1.7" cy="14" r="1" fill="#fff"/><circle cx="14.3" cy="14" r="1" fill="#fff"/><circle cx="8" cy="9.7" r="1.1" fill="#f4f4f4"/></svg>
<svg style="left:467.6px;top:604.2px;overflow:visible" width="16" height="16" viewBox="0 0 16 16"><path d="M1.6 13 L2.9 14.4 L10.6 6.9 L12.4 8.8 L14.4 1.6 L7 3.3 L8.9 5.2 Z" fill="#e8f0ff" stroke="#16264a" stroke-width="1" stroke-linejoin="round"/><path d="M2.6 13.2 L10.4 5.6" stroke="#9ab8ee" stroke-width="1"/></svg>
<svg style="left:487.6px;top:604.2px;overflow:visible" width="16" height="16" viewBox="0 0 16 16"><path d="M2.2 13.6 C2.6 7.6 7 3 13.8 2.6" fill="none" stroke="#1a2540" stroke-width="3.4" stroke-linecap="round"/><path d="M2.2 13.6 C2.6 7.6 7 3 13.8 2.6" fill="none" stroke="#6c8fcf" stroke-width="1.9" stroke-linecap="round"/></svg>
<svg style="left:507.4px;top:604px;overflow:visible" width="16" height="16" viewBox="0 0 16 16"><path d="M1.8 14 L9.6 6.4" stroke="#1a2540" stroke-width="3.2" stroke-linecap="round"/><path d="M1.8 14 L9.6 6.4" stroke="#6c8fcf" stroke-width="1.7" stroke-linecap="round"/><rect x="8.4" y="1.6" width="6" height="6" fill="#6c8fcf" stroke="#1a2540" stroke-width="1"/></svg>
<div style="left:603px;top:602px;width:48px;height:18px;background:linear-gradient(#999,#8a8a8a);border:1px solid #2b2b2b;border-radius:4px;box-shadow:0 1px 0 rgba(255,255,255,0.13);"></div>
<div style="left:604px;top:603px;width:9px;height:9px;background:#5c5c5c;border-radius:3px 0 0 0;"></div>
<div style="left:612px;top:603px;width:1px;height:18px;background:#3a3a3a;"></div>
<div style="left:622px;top:603px;width:1px;height:18px;background:#3a3a3a;"></div>
<div style="left:632px;top:603px;width:1px;height:18px;background:#3a3a3a;"></div>
<div style="left:642px;top:603px;width:1px;height:18px;background:#3a3a3a;"></div>
<div style="left:604px;top:611px;width:48px;height:1px;background:#3a3a3a;"></div>
<div style="left:605.6px;top:604.6px;width:3.6px;height:3.6px;background:#f4a040;border-radius:2.5px;border:0.7px solid #7a3c08;"></div>
<div style="left:658px;top:602px;width:48px;height:18px;background:linear-gradient(#999,#8a8a8a);border:1px solid #2b2b2b;border-radius:4px;box-shadow:0 1px 0 rgba(255,255,255,0.13);"></div>
<div style="left:667px;top:603px;width:1px;height:18px;background:#3a3a3a;"></div>
<div style="left:677px;top:603px;width:1px;height:18px;background:#3a3a3a;"></div>
<div style="left:687px;top:603px;width:1px;height:18px;background:#3a3a3a;"></div>
<div style="left:697px;top:603px;width:1px;height:18px;background:#3a3a3a;"></div>
<div style="left:659px;top:611px;width:48px;height:1px;background:#3a3a3a;"></div>
<div style="left:713px;top:602px;width:18px;height:18px;background:linear-gradient(#525252,#686868);border:1px solid #2b2b2b;border-radius:4px;box-shadow:0 1px 0 rgba(255,255,255,0.13);"></div>
<svg style="left:715px;top:604px;overflow:visible" width="16" height="16" viewBox="0 0 16 16"><rect x="1.2" y="2" width="10" height="11" rx="1" fill="#dcdcdc" stroke="#1a1a1a" stroke-width="1"/><path d="M2.2 3 H10.2 V12 Z" fill="#9a9a9a"/><rect x="2.6" y="10.6" width="4" height="0.9" fill="#333"/><ellipse cx="12.6" cy="6.6" rx="1.9" ry="2.6" fill="none" stroke="#1a1a1a" stroke-width="2.6"/><ellipse cx="12.6" cy="11" rx="1.9" ry="2.6" fill="none" stroke="#1a1a1a" stroke-width="2.6"/><ellipse cx="12.6" cy="6.6" rx="1.9" ry="2.6" fill="none" stroke="#f2f2f2" stroke-width="1.2"/><ellipse cx="12.6" cy="11" rx="1.9" ry="2.6" fill="none" stroke="#f2f2f2" stroke-width="1.2"/></svg>
<div style="left:738px;top:602px;width:17px;height:18px;background:linear-gradient(#a9a9a9,#8b8b8b);border:1px solid #2b2b2b;border-radius:4px;box-shadow:0 1px 0 rgba(255,255,255,0.13);"></div>
<svg style="left:740px;top:604px;overflow:visible" width="16" height="16" viewBox="0 0 16 16"><circle cx="8" cy="8" r="6" fill="none" stroke="#a4a4a4" stroke-width="1.2"/><circle cx="8" cy="8" r="3.2" fill="#9a9a9a" stroke="#a8a8a8" stroke-width="1.2"/><circle cx="8" cy="8" r="1.3" fill="#a8a8a8"/></svg>
<div style="left:764px;top:602px;width:69px;height:18px;background:linear-gradient(#a9a9a9,#8b8b8b);border:1px solid #2b2b2b;border-radius:4px;box-shadow:0 1px 0 rgba(255,255,255,0.13);"></div>
<div style="left:783px;top:603px;width:32px;height:18px;background:linear-gradient(#565656,#373737);"></div>
<div style="left:783px;top:603px;width:1px;height:18px;background:#2b2b2b;"></div>
<div style="left:815px;top:603px;width:1px;height:18px;background:#2b2b2b;"></div>
<svg style="left:806px;top:605.6px" width="5.6" height="12.8"><polygon points="0,5.2 2.8,0 5.6,5.2" fill="#b4b4b4"/><polygon points="0,7.6 2.8,12.8 5.6,7.6" fill="#b4b4b4"/></svg>
<svg style="left:765px;top:604px;overflow:visible" width="16" height="16" viewBox="0 0 16 16"><path d="M2.4 7.4 L7.6 3.2 A4.6 4.6 0 0 1 13.6 10 L8.6 14.4 L6.6 12.2 L11.4 8 A1.7 1.7 0 0 0 9.4 5.4 L4.4 9.6 Z" fill="#c8c8c8" stroke="#6a6a6a" stroke-width="0.9" stroke-linejoin="round"/><path d="M2.4 7.4 L4.4 9.6 L5.8 8.4 L3.9 6.2Z M6.6 12.2 L8.6 14.4 L10 13.2 L8 11Z" fill="#f6f6f6"/></svg>
<svg style="left:786px;top:604px;overflow:visible" width="16" height="16" viewBox="0 0 16 16"><path d="M1.5 3 V13 M14.5 3 V13" stroke="#ececec" stroke-width="1.2"/><path d="M4.6 5.6 V10.4 M11.4 5.6 V10.4" stroke="#e0e0e0" stroke-width="1.1"/><path d="M1.5 8 H14.5" stroke="#d8d8d8" stroke-width="0.9"/><rect x="6.7" y="2.4" width="2.7" height="11.2" rx="1.2" fill="#fff" stroke="#3c6cd0" stroke-width="1"/></svg>
<svg style="left:816.6px;top:603.6px;overflow:visible" width="16" height="16" viewBox="0 0 16 16"><path d="M9.2 1 V15 M13.2 1 V15 M3 8.6 H15.4 M3 12.6 H15.4" stroke="#f2f2f2" stroke-width="1.3"/><circle cx="5" cy="4.4" r="3.7" fill="#f2f2f2" stroke="#1a1a1a" stroke-width="0.9"/><circle cx="5" cy="4.4" r="1.9" fill="#fff" stroke="#1a34d8" stroke-width="1.3"/></svg>
<div style="left:841px;top:602px;width:37px;height:18px;background:linear-gradient(#a9a9a9,#8b8b8b);border:1px solid #2b2b2b;border-radius:4px;box-shadow:0 1px 0 rgba(255,255,255,0.13);"></div>
<div style="left:860px;top:603px;width:1px;height:18px;background:#2b2b2b;"></div>
<svg style="left:842px;top:604.6px;overflow:visible" width="16" height="16" viewBox="0 0 16 16"><rect x="1" y="4" width="12.6" height="9.4" rx="1" fill="#dedede" stroke="#111" stroke-width="1"/><rect x="2.2" y="2.8" width="3.6" height="1.6" fill="#e8e8e8" stroke="#111" stroke-width="0.8"/><rect x="1.6" y="6.2" width="11.4" height="6.6" fill="#4a4a4a"/><rect x="1.6" y="4.6" width="11.4" height="1.6" fill="#f0f0f0"/><circle cx="3.2" cy="6.2" r="0.9" fill="#e81010"/><circle cx="8.6" cy="9.4" r="3.5" fill="#d8d8d8" stroke="#111" stroke-width="0.9"/><circle cx="8.6" cy="9.4" r="2.1" fill="#5a3418"/><circle cx="7.8" cy="8.6" r="0.8" fill="#d8a070"/></svg>
<svg style="left:850px;top:603.6px;overflow:visible" width="9" height="9" viewBox="0 0 16 16"><circle cx="4" cy="4" r="3.4" fill="#f09a28"/><path d="M4 0.8 L4.8 3.2 L7.2 4 L4.8 4.8 L4 7.2 L3.2 4.8 L0.8 4 L3.2 3.2 Z" fill="#fff"/></svg>
<svg style="left:861.6px;top:604px;overflow:visible" width="16" height="16" viewBox="0 0 16 16"><rect x="2" y="7" width="12.6" height="7.6" fill="#3c3c3c" stroke="#111" stroke-width="1"/><rect x="2" y="7" width="12.6" height="2" fill="#f2f2f2" stroke="#111" stroke-width="0.8"/><path d="M4.4 7 L5.6 9 M7.4 7 L8.6 9 M10.4 7 L11.6 9" stroke="#111" stroke-width="1.2"/><path d="M1.6 6.6 L13.6 1.8 L14.3 3.6 L2.3 8.4 Z" fill="#f2f2f2" stroke="#111" stroke-width="0.9"/><path d="M4.2 5.6 L6 6.9 M7.2 4.4 L9 5.7 M10.2 3.2 L12 4.5" stroke="#111" stroke-width="1.3"/><path d="M1.4 5.4 L2.6 8.4" stroke="#4a8ae0" stroke-width="1.6"/><rect x="5" y="11.4" width="6.6" height="1.7" fill="#8a8a8a"/><path d="M9.4 10.6 V14" stroke="#bbb" stroke-width="0.7"/></svg>
<svg style="left:0px;top:612px" width="12" height="12"><path d="M0 1 L11 12" stroke="#d0d0d0" stroke-width="1" opacity="0.75"/><path d="M0 2 L10 12" stroke="#222" stroke-width="1.1" opacity="0.9"/><path d="M0 4 L8 12" stroke="#d0d0d0" stroke-width="1" opacity="0.75"/><path d="M0 5 L7 12" stroke="#222" stroke-width="1.1" opacity="0.9"/><path d="M0 7 L5 12" stroke="#d0d0d0" stroke-width="1" opacity="0.75"/><path d="M0 8 L4 12" stroke="#222" stroke-width="1.1" opacity="0.9"/><path d="M0 10 L2 12" stroke="#d0d0d0" stroke-width="1" opacity="0.75"/><path d="M0 11 L1 12" stroke="#222" stroke-width="1.1" opacity="0.9"/></svg>
<div style="left:0px;top:627px;width:1024px;height:62px;background:#727272;"></div>
<div style="left:0px;top:627px;width:225px;height:19px;background:#4b4b4b;"></div>
<div style="left:865px;top:627px;width:159px;height:19px;background:#4b4b4b;"></div>
<div style="left:17px;top:627px;width:1px;height:19px;background:#424242;"></div>
<div style="left:43px;top:627px;width:1px;height:19px;background:#464646;"></div>
<div style="left:68px;top:627px;width:1px;height:19px;background:#424242;"></div>
<div style="left:94px;top:627px;width:1px;height:19px;background:#464646;"></div>
<div style="left:120px;top:627px;width:1px;height:19px;background:#424242;"></div>
<div style="left:145px;top:627px;width:1px;height:19px;background:#464646;"></div>
<div style="left:171px;top:627px;width:1px;height:19px;background:#424242;"></div>
<div style="left:197px;top:627px;width:1px;height:19px;background:#464646;"></div>
<div style="left:222px;top:627px;width:1px;height:19px;background:#636363;"></div>
<div style="left:248px;top:627px;width:1px;height:19px;background:#6b6b6b;"></div>
<div style="left:274px;top:627px;width:1px;height:19px;background:#636363;"></div>
<div style="left:300px;top:627px;width:1px;height:19px;background:#6b6b6b;"></div>
<div style="left:325px;top:627px;width:1px;height:19px;background:#636363;"></div>
<div style="left:351px;top:627px;width:1px;height:19px;background:#6b6b6b;"></div>
<div style="left:377px;top:627px;width:1px;height:19px;background:#636363;"></div>
<div style="left:402px;top:627px;width:1px;height:19px;background:#6b6b6b;"></div>
<div style="left:428px;top:627px;width:1px;height:19px;background:#636363;"></div>
<div style="left:454px;top:627px;width:1px;height:19px;background:#6b6b6b;"></div>
<div style="left:479px;top:627px;width:1px;height:19px;background:#636363;"></div>
<div style="left:505px;top:627px;width:1px;height:19px;background:#6b6b6b;"></div>
<div style="left:531px;top:627px;width:1px;height:19px;background:#636363;"></div>
<div style="left:557px;top:627px;width:1px;height:19px;background:#6b6b6b;"></div>
<div style="left:582px;top:627px;width:1px;height:19px;background:#636363;"></div>
<div style="left:608px;top:627px;width:1px;height:19px;background:#6b6b6b;"></div>
<div style="left:634px;top:627px;width:1px;height:19px;background:#636363;"></div>
<div style="left:659px;top:627px;width:1px;height:19px;background:#6b6b6b;"></div>
<div style="left:685px;top:627px;width:1px;height:19px;background:#636363;"></div>
<div style="left:711px;top:627px;width:1px;height:19px;background:#6b6b6b;"></div>
<div style="left:736px;top:627px;width:1px;height:19px;background:#636363;"></div>
<div style="left:762px;top:627px;width:1px;height:19px;background:#6b6b6b;"></div>
<div style="left:788px;top:627px;width:1px;height:19px;background:#636363;"></div>
<div style="left:814px;top:627px;width:1px;height:19px;background:#6b6b6b;"></div>
<div style="left:839px;top:627px;width:1px;height:19px;background:#636363;"></div>
<div style="left:865px;top:627px;width:1px;height:19px;background:#6b6b6b;"></div>
<div style="left:891px;top:627px;width:1px;height:19px;background:#424242;"></div>
<div style="left:916px;top:627px;width:1px;height:19px;background:#464646;"></div>
<div style="left:942px;top:627px;width:1px;height:19px;background:#424242;"></div>
<div style="left:968px;top:627px;width:1px;height:19px;background:#464646;"></div>
<div style="left:993px;top:627px;width:1px;height:19px;background:#424242;"></div>
<div style="left:1019px;top:627px;width:1px;height:19px;background:#464646;"></div>
<div style="left:222px;top:627px;width:1px;height:19px;background:#2a2a2a;"></div>
<div style="left:223px;top:627px;width:3px;height:19px;background:#69c232;"></div>
<div style="left:0px;top:646px;width:1024px;height:17px;background:#727272;"></div>
<div style="left:4px;top:647px;width:1013px;height:11px;background:linear-gradient(#9e9e9e,#858585);border:1px solid #3a3a3a;border-radius:6px;"></div>
<div style="left:7px;top:649.5px;width:6px;height:6px;background:#6a6a6a;border-radius:3px;"></div>
<div style="left:1010.5px;top:649.5px;width:6px;height:6px;background:#6a6a6a;border-radius:3px;"></div>
<span class="t" style="left:9.75px;top:645px;font-size:11px;color:#000;letter-spacing:0.413px;">-80</span>
<span class="t" style="left:60.67px;top:645px;font-size:11px;color:#000;letter-spacing:0.413px;">-60</span>
<span class="t" style="left:111.59px;top:645px;font-size:11px;color:#000;letter-spacing:0.413px;">-40</span>
<span class="t" style="left:162.51px;top:645px;font-size:11px;color:#000;letter-spacing:0.413px;">-20</span>
<span class="t" style="left:220.94px;top:645px;font-size:11px;color:#000;">0</span>
<span class="t" style="left:268.18px;top:645px;font-size:11px;color:#000;letter-spacing:0.620px;">20</span>
<span class="t" style="left:319.09px;top:645px;font-size:11px;color:#000;letter-spacing:0.620px;">40</span>
<span class="t" style="left:370.01px;top:645px;font-size:11px;color:#000;letter-spacing:0.620px;">60</span>
<span class="t" style="left:420.93px;top:645px;font-size:11px;color:#000;letter-spacing:0.620px;">80</span>
<span class="t" style="left:468.48px;top:645px;font-size:11px;color:#000;letter-spacing:0.620px;">100</span>
<span class="t" style="left:519.4px;top:645px;font-size:11px;color:#000;letter-spacing:0.620px;">120</span>
<span class="t" style="left:570.32px;top:645px;font-size:11px;color:#000;letter-spacing:0.620px;">140</span>
<span class="t" style="left:621.24px;top:645px;font-size:11px;color:#000;letter-spacing:0.620px;">160</span>
<span class="t" style="left:672.16px;top:645px;font-size:11px;color:#000;letter-spacing:0.620px;">180</span>
<span class="t" style="left:723.08px;top:645px;font-size:11px;color:#000;letter-spacing:0.620px;">200</span>
<span class="t" style="left:774px;top:645px;font-size:11px;color:#000;letter-spacing:0.620px;">220</span>
<span class="t" style="left:824.92px;top:645px;font-size:11px;color:#000;letter-spacing:0.620px;">240</span>
<span class="t" style="left:875.84px;top:645px;font-size:11px;color:#000;letter-spacing:0.620px;">260</span>
<span class="t" style="left:926.76px;top:645px;font-size:11px;color:#000;letter-spacing:0.620px;">280</span>
<span class="t" style="left:977.68px;top:645px;font-size:11px;color:#000;letter-spacing:0.620px;">300</span>
<div style="left:0px;top:663px;width:1024px;height:26px;background:#696969;"></div>
<div style="left:0px;top:663px;width:1024px;height:1px;background:#787878;"></div>
<div style="left:-12px;top:666px;width:31px;height:18px;background:linear-gradient(#565656,#373737);border:1px solid #2b2b2b;border-radius:4px;box-shadow:0 1px 0 rgba(255,255,255,0.13);"></div>
<svg style="left:11.6px;top:669.6px" width="5.6" height="12.8"><polygon points="0,5.2 2.8,0 5.6,5.2" fill="#b4b4b4"/><polygon points="0,7.6 2.8,12.8 5.6,7.6" fill="#b4b4b4"/></svg>
<svg style="left:-4.6px;top:668.3px;overflow:visible" width="16" height="16" viewBox="0 0 16 16"><circle cx="8" cy="8" r="6.6" fill="#f4f4f4" stroke="#0e0e0e" stroke-width="1.1"/><path d="M8 8 V1.9 A6.1 6.1 0 0 1 14.1 8 Z" fill="#f09a20"/><path d="M8 8 H14" stroke="#222" stroke-width="1"/><path d="M8 8 L10.4 11.2" stroke="#e01010" stroke-width="1.2"/><path d="M8 2.6 V3.6 M2.6 8 H3.6 M8 12.4 V13.4" stroke="#999" stroke-width="0.8"/></svg>
<span class="t" style="left:33.5px;top:669px;font-size:11px;color:#000;letter-spacing:0.090px;">View</span>
<span class="t" style="left:78.6px;top:669px;font-size:11px;color:#000;letter-spacing:0.097px;">Marker</span>
<span class="t" style="left:133.5px;top:669px;font-size:11px;color:#000;letter-spacing:-0.056px;">Frame</span>
<span class="t" style="left:185.6px;top:669px;font-size:11px;color:#000;letter-spacing:-0.032px;">Playback</span>
<div style="left:243px;top:666px;width:38px;height:18px;background:linear-gradient(#a9a9a9,#8b8b8b);border:1px solid #2b2b2b;border-radius:4px;box-shadow:0 1px 0 rgba(255,255,255,0.13);"></div>
<div style="left:262px;top:667px;width:1px;height:18px;background:#2b2b2b;"></div>
<svg style="left:244.9px;top:667.9px;overflow:visible" width="16" height="16" viewBox="0 0 16 16"><circle cx="8" cy="8" r="6.6" fill="#f4f4f4" stroke="#0e0e0e" stroke-width="1.1"/><path d="M8 8 V1.9 A6.1 6.1 0 0 1 14.1 8 Z" fill="#f09a20"/><path d="M8 8 H14" stroke="#222" stroke-width="1"/><path d="M8 8 L10.4 11.2" stroke="#e01010" stroke-width="1.2"/><path d="M8 2.6 V3.6 M2.6 8 H3.6 M8 12.4 V13.4" stroke="#999" stroke-width="0.8"/></svg>
<svg style="left:265.4px;top:667.8px;overflow:visible" width="16" height="16" viewBox="0 0 16 16"><path d="M4.6 8 V5.2 a3.4 3.4 0 0 1 6.8 0 V8" fill="none" stroke="#161616" stroke-width="2.8"/><path d="M4.6 8 V5.2 a3.4 3.4 0 0 1 6.8 0 V8" fill="none" stroke="#e6e6e6" stroke-width="1.2"/><rect x="2.8" y="7.6" width="10.4" height="7.4" fill="#e8e8e8" stroke="#161616" stroke-width="1"/><rect x="3.8" y="11.4" width="8.4" height="2.8" fill="#b4b4b4"/><path d="M3.8 10 H12.2" stroke="#c8c8c8" stroke-width="0.8"/><rect x="7.3" y="9.6" width="1.5" height="2.4" fill="#222"/></svg>
<div style="left:288px;top:666px;width:226px;height:18px;background:linear-gradient(#9f9f9f,#b6b6b6);border:1px solid #2b2b2b;border-radius:9px;box-shadow:0 1px 0 rgba(255,255,255,0.13);"></div>
<div style="left:404px;top:667px;width:1px;height:18px;background:#2b2b2b;"></div>
<svg style="left:294px;top:672.5px" width="4" height="7"><polygon points="4,0 0,3.5 4,7" fill="#7a7a7a"/></svg>
<svg style="left:395px;top:672.5px" width="4" height="7"><polygon points="0,0 4,3.5 0,7" fill="#7a7a7a"/></svg>
<svg style="left:410px;top:672.5px" width="4" height="7"><polygon points="4,0 0,3.5 4,7" fill="#7a7a7a"/></svg>
<svg style="left:507px;top:672.5px" width="4" height="7"><polygon points="0,0 4,3.5 0,7" fill="#7a7a7a"/></svg>
<span class="t" style="left:304.3px;top:669px;font-size:11px;color:#000;">Start:</span>
<span class="t" style="left:381.88px;top:669px;font-size:11px;color:#000;">1</span>
<span class="t" style="left:420.7px;top:669px;font-size:11px;color:#000;">End:</span>
<span class="t" style="left:479.76px;top:669px;font-size:11px;color:#000;letter-spacing:0.620px;">250</span>
<div style="left:521px;top:666px;width:88px;height:18px;background:linear-gradient(#9f9f9f,#b6b6b6);border:1px solid #2b2b2b;border-radius:9px;box-shadow:0 1px 0 rgba(255,255,255,0.13);"></div>
<svg style="left:527px;top:672.5px" width="4" height="7"><polygon points="4,0 0,3.5 4,7" fill="#7a7a7a"/></svg>
<svg style="left:601px;top:672.5px" width="4" height="7"><polygon points="0,0 4,3.5 0,7" fill="#7a7a7a"/></svg>
<span class="t" style="left:588.88px;top:669px;font-size:11px;color:#000;">1</span>
<div style="left:627px;top:666px;width:117px;height:18px;background:linear-gradient(#a9a9a9,#8b8b8b);border:1px solid #2b2b2b;border-radius:4px;box-shadow:0 1px 0 rgba(255,255,255,0.13);"></div>
<div style="left:647px;top:667px;width:1px;height:18px;background:#2b2b2b;"></div>
<div style="left:667px;top:667px;width:1px;height:18px;background:#2b2b2b;"></div>
<div style="left:687px;top:667px;width:1px;height:18px;background:#2b2b2b;"></div>
<div style="left:707px;top:667px;width:1px;height:18px;background:#2b2b2b;"></div>
<div style="left:726px;top:667px;width:1px;height:18px;background:#2b2b2b;"></div>
<svg style="left:629px;top:668px;overflow:visible" width="16" height="16" viewBox="0 0 16 16"><rect x="1.6" y="3.6" width="1.8" height="8.8" fill="#f4f4f4" stroke="#0c0c0c" stroke-width="1" stroke-linejoin="round"/><path d="M8.6 3.8 L3.8 8 L8.6 12.2 Z M13.6 3.8 L8.8 8 L13.6 12.2 Z" fill="#f4f4f4" stroke="#0c0c0c" stroke-width="1" stroke-linejoin="round"/></svg>
<svg style="left:648.9px;top:668px;overflow:visible" width="16" height="16" viewBox="0 0 16 16"><path d="M7.6 3.8 L2.2 8 L7.6 12.2 Z M13.4 3.8 L8 8 L13.4 12.2 Z" fill="#f4f4f4" stroke="#0c0c0c" stroke-width="1" stroke-linejoin="round"/></svg>
<svg style="left:668.8px;top:668px;overflow:visible" width="16" height="16" viewBox="0 0 16 16"><path d="M13.4 1.2000000000000002 L2 8 L13.4 14.8 Z" fill="#f4f4f4" stroke="#0c0c0c" stroke-width="1" stroke-linejoin="round"/></svg>
<svg style="left:688.7px;top:668px;overflow:visible" width="16" height="16" viewBox="0 0 16 16"><path d="M2.6 1.2000000000000002 L14 8 L2.6 14.8 Z" fill="#f4f4f4" stroke="#0c0c0c" stroke-width="1" stroke-linejoin="round"/></svg>
<svg style="left:708.6px;top:668px;overflow:visible" width="16" height="16" viewBox="0 0 16 16"><path d="M2.6 3.8 L8 8 L2.6 12.2 Z M8.4 3.8 L13.8 8 L8.4 12.2 Z" fill="#f4f4f4" stroke="#0c0c0c" stroke-width="1" stroke-linejoin="round"/></svg>
<svg style="left:728.5px;top:668px;overflow:visible" width="16" height="16" viewBox="0 0 16 16"><path d="M2.4 3.8 L7.2 8 L2.4 12.2 Z M7.4 3.8 L12.2 8 L7.4 12.2 Z" fill="#f4f4f4" stroke="#0c0c0c" stroke-width="1" stroke-linejoin="round"/><rect x="12.6" y="3.6" width="1.8" height="8.8" fill="#f4f4f4" stroke="#0c0c0c" stroke-width="1" stroke-linejoin="round"/></svg>
<div style="left:753px;top:666px;width:112px;height:18px;background:linear-gradient(#565656,#373737);border:1px solid #2b2b2b;border-radius:4px;box-shadow:0 1px 0 rgba(255,255,255,0.13);"></div>
<span class="t" style="left:761px;top:669px;font-size:11px;color:#fff;">No Sync</span>
<svg style="left:858px;top:669.6px" width="5.6" height="12.8"><polygon points="0,5.2 2.8,0 5.6,5.2" fill="#b4b4b4"/><polygon points="0,7.6 2.8,12.8 5.6,7.6" fill="#b4b4b4"/></svg>
<div style="left:884px;top:666px;width:17px;height:18px;background:linear-gradient(#a9a9a9,#8b8b8b);border:1px solid #2b2b2b;border-radius:4px;box-shadow:0 1px 0 rgba(255,255,255,0.13);"></div>
<div style="left:889px;top:671.5px;width:7px;height:7px;background:#e8321a;border-radius:5px;border:1px solid #c86a20;"></div>
<div style="left:908px;top:666px;width:30px;height:18px;background:linear-gradient(#565656,#373737);border:1px solid #2b2b2b;border-radius:4px;box-shadow:0 1px 0 rgba(255,255,255,0.13);"></div>
<svg style="left:930.6px;top:669.6px" width="5.6" height="12.8"><polygon points="0,5.2 2.8,0 5.6,5.2" fill="#b4b4b4"/><polygon points="0,7.6 2.8,12.8 5.6,7.6" fill="#b4b4b4"/></svg>
<svg style="left:913px;top:671px" width="12" height="12"><polygon points="6,0.5 11.5,6 6,11.5 0.5,6" fill="#f0a020" stroke="#5a3a10" stroke-width="1"/></svg>
<div style="left:945px;top:666px;width:90px;height:18px;background:linear-gradient(#999,#b3b3b3);border:1px solid #2b2b2b;border-radius:4px;"></div>
<svg style="left:949px;top:668.4px;overflow:visible" width="16" height="16" viewBox="0 0 16 16"><circle cx="4.4" cy="12" r="2.7" fill="none" stroke="#16120a" stroke-width="2.6"/><path d="M4.4 9 V1.6 H7 M4.4 4.2 H6.4" stroke="#16120a" stroke-width="2.6" fill="none"/><circle cx="4.4" cy="12" r="2.7" fill="none" stroke="#f0cc90" stroke-width="1.2"/><path d="M4.4 9.2 V1.6 H7 M4.4 4.2 H6.4" stroke="#f0cc90" stroke-width="1.2" fill="none"/><path d="M7.4 11.6 L13.6 5.4 L15 7 L13.4 6.4 L12.6 8.4 L11.4 7.8 L8.6 12.4" fill="#e4e4e4" stroke="#16120a" stroke-width="0.9"/><circle cx="7.6" cy="12.4" r="1.9" fill="#e4e4e4" stroke="#16120a" stroke-width="0.9"/></svg>
<svg style="left:1012px;top:627px" width="12" height="12"><path d="M1 0 L12 11" stroke="#d0d0d0" stroke-width="1" opacity="0.75"/><path d="M2 0 L12 10" stroke="#222" stroke-width="1.1" opacity="0.9"/><path d="M4 0 L12 8" stroke="#d0d0d0" stroke-width="1" opacity="0.75"/><path d="M5 0 L12 7" stroke="#222" stroke-width="1.1" opacity="0.9"/><path d="M7 0 L12 5" stroke="#d0d0d0" stroke-width="1" opacity="0.75"/><path d="M8 0 L12 4" stroke="#222" stroke-width="1.1" opacity="0.9"/><path d="M10 0 L12 2" stroke="#d0d0d0" stroke-width="1" opacity="0.75"/><path d="M11 0 L12 1" stroke="#222" stroke-width="1.1" opacity="0.9"/></svg>
<svg style="left:0px;top:677px" width="12" height="12"><path d="M0 1 L11 12" stroke="#d0d0d0" stroke-width="1" opacity="0.75"/><path d="M0 2 L10 12" stroke="#222" stroke-width="1.1" opacity="0.9"/><path d="M0 4 L8 12" stroke="#d0d0d0" stroke-width="1" opacity="0.75"/><path d="M0 5 L7 12" stroke="#222" stroke-width="1.1" opacity="0.9"/><path d="M0 7 L5 12" stroke="#d0d0d0" stroke-width="1" opacity="0.75"/><path d="M0 8 L4 12" stroke="#222" stroke-width="1.1" opacity="0.9"/><path d="M0 10 L2 12" stroke="#d0d0d0" stroke-width="1" opacity="0.75"/><path d="M0 11 L1 12" stroke="#222" stroke-width="1.1" opacity="0.9"/></svg>
<div style="left:1024px;top:27px;width:1px;height:662px;background:#1c1c1c;"></div>
<div style="left:1025px;top:28px;width:325px;height:25px;background:#696969;"></div>
<div style="left:1025px;top:28px;width:325px;height:1px;background:#787878;"></div>
<div style="left:1034px;top:30px;width:30px;height:18px;background:linear-gradient(#565656,#373737);border:1px solid #2b2b2b;border-radius:4px;box-shadow:0 1px 0 rgba(255,255,255,0.13);"></div>
<svg style="left:1056.7px;top:33.6px" width="5.6" height="12.8"><polygon points="0,5.2 2.8,0 5.6,5.2" fill="#b4b4b4"/><polygon points="0,7.6 2.8,12.8 5.6,7.6" fill="#b4b4b4"/></svg>
<svg style="left:1037.8px;top:32px;overflow:visible" width="16" height="16" viewBox="0 0 16 16"><path d="M3.6 3.4 V13 H7 M3.6 7.6 H7" stroke="#c4c8e4" stroke-width="0.9" fill="none"/><rect x="0.6" y="0.8" width="7.6" height="2.6" fill="#fff" stroke="#f09428" stroke-width="0.9"/><rect x="7.4" y="6.4" width="6.6" height="2.4" fill="#fff" stroke="#2a2a2a" stroke-width="0.7"/><rect x="7.4" y="11.8" width="6.6" height="2.4" fill="#fff" stroke="#2a2a2a" stroke-width="0.7"/><path d="M1.4 2.1 H7.4 M8.2 7.6 H13.2 M8.2 13 H13.2" stroke="#888" stroke-width="0.8" stroke-dasharray="1.4 0.6"/></svg>
<span class="t" style="left:1078.5px;top:33px;font-size:11px;color:#000;letter-spacing:-0.035px;">View</span>
<span class="t" style="left:1123px;top:33px;font-size:11px;color:#000;letter-spacing:-0.146px;">Search</span>
<div style="left:1170px;top:30px;width:117px;height:18px;background:linear-gradient(#565656,#373737);border:1px solid #2b2b2b;border-radius:4px;box-shadow:0 1px 0 rgba(255,255,255,0.13);"></div>
<span class="t" style="left:1178px;top:33px;font-size:11px;color:#fff;">All Scenes</span>
<svg style="left:1280px;top:33.6px" width="5.6" height="12.8"><polygon points="0,5.2 2.8,0 5.6,5.2" fill="#b4b4b4"/><polygon points="0,7.6 2.8,12.8 5.6,7.6" fill="#b4b4b4"/></svg>
<div style="left:1294px;top:30px;width:70px;height:18px;background:linear-gradient(#999,#b3b3b3);border:1px solid #2b2b2b;border-radius:4px;"></div>
<svg style="left:1298.4px;top:31.4px;overflow:visible" width="16" height="16" viewBox="0 0 16 16"><path d="M7 9.4 L1.2 15" stroke="#2a1404" stroke-width="3"/><path d="M7 9.4 L1.4 14.8" stroke="#d8882c" stroke-width="1.6"/><circle cx="10" cy="6" r="4.7" fill="#e6e6e6" stroke="#2a2a2a" stroke-width="1.1"/><circle cx="10" cy="6" r="3.5" fill="#c8c8c8"/><path d="M7.4 5 A3 3 0 0 1 11 3.2" stroke="#fff" stroke-width="1.2" fill="none"/></svg>
<div style="left:1025px;top:52px;width:325px;height:83px;background:#7a7a7a;"></div>
<div style="left:1025px;top:57px;width:325px;height:20px;background:#7e7e7e;"></div>
<div style="left:1025px;top:97px;width:325px;height:20px;background:#7e7e7e;"></div>
<div style="left:1025px;top:52px;width:325px;height:5px;background:#7e7e7e;"></div>
<div style="left:1055px;top:53px;width:1px;height:72px;background:#3a3a3a;"></div>
<div style="left:1055px;top:66px;width:16px;height:1px;background:#3a3a3a;"></div>
<svg style="left:1050px;top:60.6px" width="11" height="11"><circle cx="5.5" cy="5.5" r="4" fill="#e2e2e2" stroke="#1a1a1a" stroke-width="1"/><path d="M3.5 5.5 H7.5 M5.5 3.5 V7.5" stroke="#111" stroke-width="1"/></svg>
<span class="t" style="left:1087.8px;top:59px;font-size:11px;color:#fff;letter-spacing:0.169px;">Armature</span>
<div style="left:1055px;top:86px;width:16px;height:1px;background:#3a3a3a;"></div>
<svg style="left:1050px;top:80.6px" width="11" height="11"><circle cx="5.5" cy="5.5" r="4" fill="#e2e2e2" stroke="#1a1a1a" stroke-width="1"/><path d="M3.5 5.5 H7.5 M5.5 3.5 V7.5" stroke="#111" stroke-width="1"/></svg>
<span class="t" style="left:1087.8px;top:79px;font-size:11px;color:#000;letter-spacing:-0.087px;">Camera</span>
<div style="left:1055px;top:106px;width:16px;height:1px;background:#3a3a3a;"></div>
<svg style="left:1050px;top:100.6px" width="11" height="11"><circle cx="5.5" cy="5.5" r="4" fill="#e2e2e2" stroke="#1a1a1a" stroke-width="1"/><path d="M3.5 5.5 H7.5 M5.5 3.5 V7.5" stroke="#111" stroke-width="1"/></svg>
<span class="t" style="left:1087.8px;top:99px;font-size:11px;color:#000;letter-spacing:0.020px;">Cylinder</span>
<div style="left:1055px;top:126px;width:16px;height:1px;background:#3a3a3a;"></div>
<svg style="left:1050px;top:120.6px" width="11" height="11"><circle cx="5.5" cy="5.5" r="4" fill="#e2e2e2" stroke="#1a1a1a" stroke-width="1"/><path d="M3.5 5.5 H7.5 M5.5 3.5 V7.5" stroke="#111" stroke-width="1"/></svg>
<span class="t" style="left:1087.8px;top:119px;font-size:11px;color:#000;letter-spacing:-0.008px;">Lamp</span>
<div style="left:1274px;top:53px;width:1px;height:82px;background:#6a6a6a;"></div>
<div style="left:1294px;top:53px;width:1px;height:82px;background:#6a6a6a;"></div>
<div style="left:1314px;top:53px;width:1px;height:82px;background:#6a6a6a;"></div>
<svg style="left:1068px;top:58.3px;overflow:visible" width="16" height="16" viewBox="0 0 16 16"><circle cx="8" cy="8" r="8.4" fill="#d8a05c" opacity="0.8"/><circle cx="8" cy="2.6" r="1.7" fill="#fbe6c4" stroke="#e08a1c" stroke-width="0.9"/><path d="M1.2 5.6 H14.8" stroke="#e08a1c" stroke-width="2.4" stroke-linecap="round"/><path d="M1.4 5.6 H14.6" stroke="#fbe6c4" stroke-width="0.9" stroke-linecap="round"/><path d="M8 5.6 V8.6 L5 14.6 M8 8.6 L11 14.6" stroke="#e08a1c" stroke-width="2.6" fill="none" stroke-linecap="round" stroke-linejoin="round"/><path d="M8 5.6 V8.6 L5 14.6 M8 8.6 L11 14.6" stroke="#fbe6c4" stroke-width="1" fill="none" stroke-linecap="round"/></svg>
<div style="left:1145.1px;top:60px;width:1.5px;height:13px;background:#484848;"></div>
<svg style="left:1157px;top:58.3px;overflow:visible" width="16" height="16" viewBox="0 0 16 16"><circle cx="8" cy="2.4" r="1.5" fill="#b0b0b0" stroke="#8a8a8a" stroke-width="0.7"/><path d="M2 3.4 L8 6.2 L14 3.4 M8 6.2 V9 L5.4 14.8 M8 9 L10.6 14.8" stroke="#909090" stroke-width="1.3" fill="none"/><circle cx="1.8" cy="3.2" r="1.3" fill="#e8e8e8" stroke="#777" stroke-width="0.6"/><circle cx="14.2" cy="3.2" r="1.3" fill="#e8e8e8" stroke="#777" stroke-width="0.6"/></svg>
<svg style="left:1177px;top:58.3px;overflow:visible" width="16" height="16" viewBox="0 0 16 16"><circle cx="8" cy="2.6" r="1.7" fill="#fdfdfd" stroke="#141414" stroke-width="0.9"/><path d="M1.2 5.6 H14.8 M8 5.6 V8.6 L5 14.6 M8 8.6 L11 14.6" stroke="#141414" stroke-width="2.7" fill="none" stroke-linecap="round" stroke-linejoin="round"/><path d="M1.3 5.6 H14.7 M8 5.6 V8.6 L5 14.6 M8 8.6 L11 14.6" stroke="#fdfdfd" stroke-width="1.2" fill="none" stroke-linecap="round" stroke-linejoin="round"/></svg>
<svg style="left:1276.5px;top:58px;overflow:visible" width="16" height="16" viewBox="0 0 16 16"><path d="M1 8 C4 3.2 12 3.2 15 8 C12 12.8 4 12.8 1 8 Z" fill="#fbfbfb" stroke="#3a3a3a" stroke-width="1"/><circle cx="8" cy="7.6" r="3" fill="#5a5a5a"/><circle cx="8" cy="7.6" r="1.5" fill="#1c1c1c"/><circle cx="7" cy="6.6" r="0.8" fill="#e8e8e8"/></svg>
<svg style="left:1297px;top:58.1px;overflow:visible" width="16" height="16" viewBox="0 0 16 16"><path d="M4 1.2 L4 13 L6.8 10.4 L8.8 15 L10.8 14 L8.8 9.6 L12.4 9.4 Z" fill="#fdfdfd" stroke="#111" stroke-width="1.1" stroke-linejoin="round"/></svg>
<svg style="left:1316px;top:57.9px;overflow:visible" width="16" height="16" viewBox="0 0 16 16"><rect x="1.6" y="4" width="12.8" height="9.8" rx="1" fill="#e0e0e0" stroke="#111" stroke-width="1.1"/><rect x="3" y="2.6" width="3.8" height="1.8" fill="#e8e8e8" stroke="#111" stroke-width="0.8"/><rect x="2.4" y="6.4" width="11.2" height="6.6" fill="#4c4c4c"/><circle cx="4" cy="5.4" r="0.9" fill="#e81010"/><circle cx="9" cy="9.4" r="3.4" fill="#dcdcdc" stroke="#111" stroke-width="0.9"/><circle cx="9" cy="9.4" r="2" fill="#4a3a5a"/><path d="M7.6 10.6 A2 2 0 0 0 10.6 10.2" stroke="#e08030" stroke-width="1" fill="none"/></svg>
<svg style="left:1068px;top:78.3px;overflow:visible" width="16" height="16" viewBox="0 0 16 16"><circle cx="4.6" cy="4.2" r="3.3" fill="#f0a030" stroke="#6a3a04" stroke-width="0.9"/><circle cx="11" cy="4" r="3.7" fill="#f0a030" stroke="#6a3a04" stroke-width="0.9"/><circle cx="4.6" cy="4.2" r="1.3" fill="#fbe6c4"/><circle cx="11" cy="4" r="1.5" fill="#fbe6c4"/><rect x="4" y="8.4" width="8.4" height="5.4" rx="0.8" fill="#f0a030" stroke="#6a3a04" stroke-width="0.9"/><path d="M12.4 10 L15.2 8.8 V13.4 L12.4 12.2Z" fill="#f0a030" stroke="#6a3a04" stroke-width="0.8"/><path d="M1.4 9.6 H4 V11.6 H1.4Z" fill="#f0a030" stroke="#6a3a04" stroke-width="0.8"/><rect x="5.4" y="9.6" width="3" height="1.6" fill="#fbe6c4"/></svg>
<div style="left:1137.4px;top:80px;width:1.5px;height:13px;background:#484848;"></div>
<svg style="left:1149px;top:78.3px;overflow:visible" width="16" height="16" viewBox="0 0 16 16"><circle cx="8" cy="8" r="8.6" fill="#b4b4b4" opacity="0.85"/><circle cx="4.8" cy="4.6" r="3" fill="#c4c4c4" stroke="#8c8c8c" stroke-width="0.9"/><circle cx="10.8" cy="4.4" r="3.4" fill="#c4c4c4" stroke="#8c8c8c" stroke-width="0.9"/><rect x="4.2" y="8.6" width="7.8" height="5" rx="0.8" fill="#c8c8c8" stroke="#8c8c8c" stroke-width="0.9"/><path d="M12 10 L14.6 9 V13 L12 12Z" fill="#c8c8c8" stroke="#8c8c8c" stroke-width="0.8"/><circle cx="4.8" cy="4.6" r="1.1" fill="#9a9a9a"/><circle cx="10.8" cy="4.4" r="1.3" fill="#9a9a9a"/></svg>
<svg style="left:1276.5px;top:78px;overflow:visible" width="16" height="16" viewBox="0 0 16 16"><path d="M1 8 C4 3.2 12 3.2 15 8 C12 12.8 4 12.8 1 8 Z" fill="#fbfbfb" stroke="#3a3a3a" stroke-width="1"/><circle cx="8" cy="7.6" r="3" fill="#5a5a5a"/><circle cx="8" cy="7.6" r="1.5" fill="#1c1c1c"/><circle cx="7" cy="6.6" r="0.8" fill="#e8e8e8"/></svg>
<svg style="left:1297px;top:78.1px;overflow:visible" width="16" height="16" viewBox="0 0 16 16"><path d="M4 1.2 L4 13 L6.8 10.4 L8.8 15 L10.8 14 L8.8 9.6 L12.4 9.4 Z" fill="#fdfdfd" stroke="#111" stroke-width="1.1" stroke-linejoin="round"/></svg>
<svg style="left:1316px;top:77.9px;overflow:visible" width="16" height="16" viewBox="0 0 16 16"><rect x="1.6" y="4" width="12.8" height="9.8" rx="1" fill="#e0e0e0" stroke="#111" stroke-width="1.1"/><rect x="3" y="2.6" width="3.8" height="1.8" fill="#e8e8e8" stroke="#111" stroke-width="0.8"/><rect x="2.4" y="6.4" width="11.2" height="6.6" fill="#4c4c4c"/><circle cx="4" cy="5.4" r="0.9" fill="#e81010"/><circle cx="9" cy="9.4" r="3.4" fill="#dcdcdc" stroke="#111" stroke-width="0.9"/><circle cx="9" cy="9.4" r="2" fill="#4a3a5a"/><path d="M7.6 10.6 A2 2 0 0 0 10.6 10.2" stroke="#e08030" stroke-width="1" fill="none"/></svg>
<svg style="left:1068px;top:98.3px;overflow:visible" width="16" height="16" viewBox="0 0 16 16"><path d="M2 2.6 H14 L8 14 Z" fill="none" stroke="#5a2e04" stroke-width="3.2" stroke-linejoin="round"/><path d="M2 2.6 H14 L8 14 Z" fill="none" stroke="#f09a28" stroke-width="1.7" stroke-linejoin="round"/><circle cx="2" cy="2.6" r="1.3" fill="#fff"/><circle cx="14" cy="2.6" r="1.3" fill="#fff"/><circle cx="8" cy="14" r="1.3" fill="#fff"/></svg>
<div style="left:1139.2px;top:100px;width:1.5px;height:13px;background:#484848;"></div>
<svg style="left:1151.5px;top:98.3px;overflow:visible" width="16" height="16" viewBox="0 0 16 16"><path d="M2.4 2.8 H13.6 L8 13.6 Z" fill="none" stroke="#5c5c5c" stroke-width="1.4" stroke-linejoin="round"/><circle cx="2.4" cy="2.8" r="1.5" fill="#e4e4e4" stroke="#555" stroke-width="0.7"/><circle cx="13.6" cy="2.8" r="1.5" fill="#e4e4e4" stroke="#555" stroke-width="0.7"/><circle cx="8" cy="13.6" r="1.5" fill="#e4e4e4" stroke="#555" stroke-width="0.7"/></svg>
<svg style="left:1276.5px;top:98px;overflow:visible" width="16" height="16" viewBox="0 0 16 16"><path d="M1 8 C4 3.2 12 3.2 15 8 C12 12.8 4 12.8 1 8 Z" fill="#fbfbfb" stroke="#3a3a3a" stroke-width="1"/><circle cx="8" cy="7.6" r="3" fill="#5a5a5a"/><circle cx="8" cy="7.6" r="1.5" fill="#1c1c1c"/><circle cx="7" cy="6.6" r="0.8" fill="#e8e8e8"/></svg>
<svg style="left:1297px;top:98.1px;overflow:visible" width="16" height="16" viewBox="0 0 16 16"><path d="M4 1.2 L4 13 L6.8 10.4 L8.8 15 L10.8 14 L8.8 9.6 L12.4 9.4 Z" fill="#fdfdfd" stroke="#111" stroke-width="1.1" stroke-linejoin="round"/></svg>
<svg style="left:1316px;top:97.9px;overflow:visible" width="16" height="16" viewBox="0 0 16 16"><rect x="1.6" y="4" width="12.8" height="9.8" rx="1" fill="#e0e0e0" stroke="#111" stroke-width="1.1"/><rect x="3" y="2.6" width="3.8" height="1.8" fill="#e8e8e8" stroke="#111" stroke-width="0.8"/><rect x="2.4" y="6.4" width="11.2" height="6.6" fill="#4c4c4c"/><circle cx="4" cy="5.4" r="0.9" fill="#e81010"/><circle cx="9" cy="9.4" r="3.4" fill="#dcdcdc" stroke="#111" stroke-width="0.9"/><circle cx="9" cy="9.4" r="2" fill="#4a3a5a"/><path d="M7.6 10.6 A2 2 0 0 0 10.6 10.2" stroke="#e08030" stroke-width="1" fill="none"/></svg>
<svg style="left:1068px;top:118.3px;overflow:visible" width="16" height="16" viewBox="0 0 16 16"><path d="M8 0.8 A4.9 4.9 0 0 1 11.2 9.4 L10.6 11.4 H5.4 L4.8 9.4 A4.9 4.9 0 0 1 8 0.8Z" fill="#fbe8c6" stroke="#5a3408" stroke-width="0.9"/><path d="M6.4 10 L6.8 5.6 L8 7 L9.2 5.6 L9.6 10" stroke="#e08a1c" stroke-width="0.9" fill="none"/><path d="M5.6 3.2 A3.4 3.4 0 0 1 8 2" stroke="#fff" stroke-width="1" fill="none"/><rect x="5.6" y="11.4" width="4.8" height="3" fill="#f0a030" stroke="#5a3408" stroke-width="0.8"/><path d="M5.6 12.9 H10.4" stroke="#5a3408" stroke-width="0.7"/><path d="M6.8 14.6 H9.2 L8 15.8Z" fill="#2a1a04"/></svg>
<div style="left:1126.3px;top:120px;width:1.5px;height:13px;background:#484848;"></div>
<svg style="left:1138px;top:118.3px;overflow:visible" width="16" height="16" viewBox="0 0 16 16"><path d="M1.2 4.6 V1.2 H4.6 M11.4 1.2 H14.8 V4.6 M14.8 11.4 V14.8 H11.4 M4.6 14.8 H1.2 V11.4" stroke="#9c9c9c" stroke-width="1.3" fill="none"/><path d="M1.6 1.6 L5.6 5.6 M14.4 1.6 L10.4 5.6 M14.4 14.4 L10.4 10.4 M1.6 14.4 L5.6 10.4" stroke="#a8a8a8" stroke-width="1.1"/><circle cx="8" cy="8" r="3" fill="#c8c8c8" stroke="#c8a858" stroke-width="1.1"/></svg>
<svg style="left:1276.5px;top:118px;overflow:visible" width="16" height="16" viewBox="0 0 16 16"><path d="M1 8 C4 3.2 12 3.2 15 8 C12 12.8 4 12.8 1 8 Z" fill="#fbfbfb" stroke="#3a3a3a" stroke-width="1"/><circle cx="8" cy="7.6" r="3" fill="#5a5a5a"/><circle cx="8" cy="7.6" r="1.5" fill="#1c1c1c"/><circle cx="7" cy="6.6" r="0.8" fill="#e8e8e8"/></svg>
<svg style="left:1297px;top:118.1px;overflow:visible" width="16" height="16" viewBox="0 0 16 16"><path d="M4 1.2 L4 13 L6.8 10.4 L8.8 15 L10.8 14 L8.8 9.6 L12.4 9.4 Z" fill="#fdfdfd" stroke="#111" stroke-width="1.1" stroke-linejoin="round"/></svg>
<svg style="left:1316px;top:117.9px;overflow:visible" width="16" height="16" viewBox="0 0 16 16"><rect x="1.6" y="4" width="12.8" height="9.8" rx="1" fill="#e0e0e0" stroke="#111" stroke-width="1.1"/><rect x="3" y="2.6" width="3.8" height="1.8" fill="#e8e8e8" stroke="#111" stroke-width="0.8"/><rect x="2.4" y="6.4" width="11.2" height="6.6" fill="#4c4c4c"/><circle cx="4" cy="5.4" r="0.9" fill="#e81010"/><circle cx="9" cy="9.4" r="3.4" fill="#dcdcdc" stroke="#111" stroke-width="0.9"/><circle cx="9" cy="9.4" r="2" fill="#4a3a5a"/><path d="M7.6 10.6 A2 2 0 0 0 10.6 10.2" stroke="#e08030" stroke-width="1" fill="none"/></svg>
<div style="left:1334px;top:57px;width:11px;height:72px;background:#5c5c5c;border:1px solid #3a3a3a;border-radius:6.5px;"></div>
<div style="left:1334px;top:89px;width:11px;height:40px;background:linear-gradient(90deg,#9c9c9c,#8a8a8a 40%,#6c6c6c);border:1px solid #2e2e2e;border-radius:6.5px;"></div>
<div style="left:1025px;top:134px;width:325px;height:1px;background:#1c1c1c;"></div>
<div style="left:1025px;top:135px;width:325px;height:1px;background:#5a5a5a;"></div>
<svg style="left:1338px;top:53px" width="12" height="12"><path d="M1 0 L12 11" stroke="#d0d0d0" stroke-width="1" opacity="0.75"/><path d="M2 0 L12 10" stroke="#222" stroke-width="1.1" opacity="0.9"/><path d="M4 0 L12 8" stroke="#d0d0d0" stroke-width="1" opacity="0.75"/><path d="M5 0 L12 7" stroke="#222" stroke-width="1.1" opacity="0.9"/><path d="M7 0 L12 5" stroke="#d0d0d0" stroke-width="1" opacity="0.75"/><path d="M8 0 L12 4" stroke="#222" stroke-width="1.1" opacity="0.9"/><path d="M10 0 L12 2" stroke="#d0d0d0" stroke-width="1" opacity="0.75"/><path d="M11 0 L12 1" stroke="#222" stroke-width="1.1" opacity="0.9"/></svg>
<svg style="left:1025px;top:122px" width="12" height="12"><path d="M0 1 L11 12" stroke="#d0d0d0" stroke-width="1" opacity="0.75"/><path d="M0 2 L10 12" stroke="#222" stroke-width="1.1" opacity="0.9"/><path d="M0 4 L8 12" stroke="#d0d0d0" stroke-width="1" opacity="0.75"/><path d="M0 5 L7 12" stroke="#222" stroke-width="1.1" opacity="0.9"/><path d="M0 7 L5 12" stroke="#d0d0d0" stroke-width="1" opacity="0.75"/><path d="M0 8 L4 12" stroke="#222" stroke-width="1.1" opacity="0.9"/><path d="M0 10 L2 12" stroke="#d0d0d0" stroke-width="1" opacity="0.75"/><path d="M0 11 L1 12" stroke="#222" stroke-width="1.1" opacity="0.9"/></svg>
<div style="left:1025px;top:136px;width:325px;height:553px;background:#727272;"></div>
<div style="left:1025px;top:136px;width:325px;height:26px;background:#696969;"></div>
<div style="left:1025px;top:136px;width:325px;height:1px;background:#747474;"></div>
<div style="left:1034px;top:139px;width:30px;height:18px;background:linear-gradient(#565656,#373737);border:1px solid #2b2b2b;border-radius:4px;box-shadow:0 1px 0 rgba(255,255,255,0.13);"></div>
<svg style="left:1056.9px;top:142.6px" width="5.6" height="12.8"><polygon points="0,5.2 2.8,0 5.6,5.2" fill="#b4b4b4"/><polygon points="0,7.6 2.8,12.8 5.6,7.6" fill="#b4b4b4"/></svg>
<svg style="left:1037.6px;top:140.6px;overflow:visible" width="16" height="16" viewBox="0 0 16 16"><rect x="1" y="2" width="13.8" height="4.6" rx="1.6" fill="#fff" stroke="#141414" stroke-width="1"/><rect x="2" y="3" width="7.4" height="2.6" fill="#5c5c5c"/><rect x="1" y="9.6" width="13.8" height="4.6" rx="1.6" fill="#fff" stroke="#141414" stroke-width="1"/><rect x="4.6" y="10.8" width="6.8" height="2.2" fill="#c8c8c8"/><path d="M3.6 10.8 L2.2 11.9 L3.6 13 Z M12.4 10.8 L13.8 11.9 L12.4 13 Z" fill="#1a1a1a"/></svg>
<div style="left:1074px;top:139px;width:218px;height:18px;background:linear-gradient(#555,#383838);border:1px solid #2b2b2b;border-radius:4px;box-shadow:0 1px 0 rgba(255,255,255,0.13);"></div>
<div style="left:1094px;top:140px;width:1px;height:18px;background:#2b2b2b;"></div>
<div style="left:1114px;top:140px;width:1px;height:18px;background:#2b2b2b;"></div>
<div style="left:1134px;top:140px;width:1px;height:18px;background:#2b2b2b;"></div>
<div style="left:1154px;top:140px;width:1px;height:18px;background:#2b2b2b;"></div>
<div style="left:1174px;top:140px;width:1px;height:18px;background:#2b2b2b;"></div>
<div style="left:1194px;top:140px;width:1px;height:18px;background:#2b2b2b;"></div>
<div style="left:1214px;top:140px;width:1px;height:18px;background:#2b2b2b;"></div>
<div style="left:1234px;top:140px;width:1px;height:18px;background:#2b2b2b;"></div>
<div style="left:1254px;top:140px;width:1px;height:18px;background:#2b2b2b;"></div>
<div style="left:1274px;top:140px;width:1px;height:18px;background:#2b2b2b;"></div>
<div style="left:1075px;top:140px;width:19px;height:18px;background:linear-gradient(#4a73b3,#648dcf);border-radius:3px 0 0 3px;"></div>
<svg style="left:1076.2px;top:141px;overflow:visible" width="16" height="16" viewBox="0 0 16 16"><rect x="1" y="4" width="14" height="10" rx="1" fill="#e0e0e0" stroke="#0c0c0c" stroke-width="1.1"/><rect x="2.4" y="2.6" width="4" height="1.8" fill="#ececec" stroke="#0c0c0c" stroke-width="0.8"/><rect x="1.8" y="6.6" width="12.4" height="6.6" fill="#404040"/><rect x="1.8" y="4.8" width="12.4" height="1.8" fill="#f4f4f4"/><circle cx="3.6" cy="5.8" r="0.9" fill="#e81010"/><circle cx="9.6" cy="9.6" r="3.6" fill="#d8d8d8" stroke="#0c0c0c" stroke-width="0.9"/><circle cx="9.6" cy="9.6" r="2.2" fill="#54301a"/><circle cx="8.8" cy="8.8" r="0.8" fill="#d8a878"/></svg>
<svg style="left:1096.2px;top:141px;overflow:visible" width="16" height="16" viewBox="0 0 16 16" opacity="0.78"><path d="M4.6 4.4 L14.2 6 L12.8 15 L3.2 13.4 Z" fill="#c4c4c4" stroke="#4a4a4a" stroke-width="0.9"/><path d="M2.6 3 L12.8 3.6 L12.4 13.4 L2.2 12.8 Z" fill="#d0d0d0" stroke="#4a4a4a" stroke-width="0.9"/><rect x="1" y="1" width="10.6" height="10.6" fill="#dcdcdc" stroke="#3a3a3a" stroke-width="0.9"/><rect x="2.2" y="2.2" width="8.2" height="8.2" fill="#8898b8"/><circle cx="2.6" cy="2.4" r="1.2" fill="#f0a030"/><rect x="5.6" y="3" width="2.8" height="4.4" rx="0.8" fill="#3c70c4" stroke="#15275c" stroke-width="0.6"/><circle cx="5" cy="8" r="1.7" fill="#e8e8e8" stroke="#222" stroke-width="0.6"/></svg>
<svg style="left:1116.2px;top:141px;overflow:visible" width="16" height="16" viewBox="0 0 16 16" opacity="0.78"><circle cx="4.3" cy="3.4" r="2.9" fill="#a9b63c" opacity="0.75"/><circle cx="4.3" cy="3.4" r="1.5" fill="#f4f6ff"/><rect x="8.6" y="1.6" width="6.6" height="10.8" rx="1.6" fill="#3c70c4" stroke="#15275c" stroke-width="1"/><ellipse cx="11.9" cy="3.3" rx="2.6" ry="1.3" fill="#f2f6fc"/><rect x="9.6" y="4.6" width="1.6" height="6.5" fill="#a9c4ea" opacity="0.8"/><circle cx="7.2" cy="11.3" r="3.7" fill="#f0f0f0" stroke="#0a0a0a" stroke-width="1.1"/><circle cx="6.3" cy="10.4" r="1.6" fill="#fff"/><path d="M5 13.6 A3.2 3.2 0 0 0 10.2 11.9 A4.5 4.5 0 0 1 5 13.6Z" fill="#b4b4b4"/></svg>
<svg style="left:1136.2px;top:141px;overflow:visible" width="16" height="16" viewBox="0 0 16 16" opacity="0.78"><circle cx="8" cy="8" r="6.6" fill="#8d929c" stroke="#4a5064" stroke-width="1"/><path d="M3.4 4.4 C5.4 2.8 7 4 6.4 6 C5.8 8 3.6 7.6 2 8.6 A6 6 0 0 1 3.4 4.4Z M8.6 8.2 C10.6 7.4 13.4 8.2 14 9.6 A6.2 6.2 0 0 1 9.4 14 C8.4 12.4 7.4 9.4 8.6 8.2Z M9.4 2 C11 2.6 12.4 3.6 13 5 C11.6 5.6 9.8 4.4 9.4 2Z" fill="#4670c2"/><path d="M3 5 A6 6 0 0 1 9 2.2" stroke="#c8d8f0" stroke-width="0.9" fill="none"/></svg>
<svg style="left:1156.2px;top:141px;overflow:visible" width="16" height="16" viewBox="0 0 16 16" opacity="0.78"><path d="M8 1 L14.6 3.4 L14.6 11.4 L8 15 L1.4 11.4 L1.4 3.4 Z" fill="#f4dcb8" stroke="#5a3408" stroke-width="0.9" stroke-linejoin="round"/><path d="M8 6 L14.6 3.4 L14.6 11.4 L8 15 Z" fill="#a8641a"/><path d="M8 6 L1.4 3.4 L1.4 11.4 L8 15 Z" fill="#e09a3c"/><path d="M1.4 3.4 L8 6 L14.6 3.4 M8 6 V15" stroke="#fbe8c8" stroke-width="0.8" fill="none"/></svg>
<svg style="left:1176.2px;top:141px;overflow:visible" width="16" height="16" viewBox="0 0 16 16" opacity="0.78"><g transform="rotate(-35 8 8)"><rect x="0.6" y="5.2" width="8.4" height="5.6" rx="2.8" fill="none" stroke="#2a2a2a" stroke-width="2.7"/><rect x="7" y="5.2" width="8.4" height="5.6" rx="2.8" fill="none" stroke="#2a2a2a" stroke-width="2.7"/><rect x="0.6" y="5.2" width="8.4" height="5.6" rx="2.8" fill="none" stroke="#c4c4c4" stroke-width="1.3"/><rect x="7" y="5.2" width="8.4" height="5.6" rx="2.8" fill="none" stroke="#c4c4c4" stroke-width="1.3"/></g></svg>
<svg style="left:1196.2px;top:141px;overflow:visible" width="16" height="16" viewBox="0 0 16 16" opacity="0.78"><circle cx="8" cy="2.6" r="1.7" fill="#d8d8d8" stroke="#2a2a2a" stroke-width="0.8"/><path d="M1.4 5.6 H14.6 M8 5.6 V8.6 L5.2 14.6 M8 8.6 L10.8 14.6" stroke="#2a2a2a" stroke-width="2.5" fill="none" stroke-linecap="round" stroke-linejoin="round"/><path d="M1.4 5.6 H14.6 M8 5.6 V8.6 L5.2 14.6 M8 8.6 L10.8 14.6" stroke="#d4d4d4" stroke-width="1.1" fill="none" stroke-linecap="round" stroke-linejoin="round"/></svg>
<svg style="left:1216.2px;top:141px;overflow:visible" width="16" height="16" viewBox="0 0 16 16" opacity="0.78"><g transform="rotate(-38 8 8)"><path d="M2.6 8 H13.4" stroke="#2a2a2a" stroke-width="5" stroke-linecap="round"/><circle cx="2" cy="5.8" r="2.5" fill="#2a2a2a"/><circle cx="2" cy="10.2" r="2.5" fill="#2a2a2a"/><circle cx="14" cy="5.8" r="2.5" fill="#2a2a2a"/><circle cx="14" cy="10.2" r="2.5" fill="#2a2a2a"/><path d="M2.6 8 H13.4" stroke="#c4c4c4" stroke-width="3.4" stroke-linecap="round"/><circle cx="2" cy="5.8" r="1.7" fill="#c4c4c4"/><circle cx="2" cy="10.2" r="1.7" fill="#c4c4c4"/><circle cx="14" cy="5.8" r="1.7" fill="#c4c4c4"/><circle cx="14" cy="10.2" r="1.7" fill="#c4c4c4"/></g></svg>
<svg style="left:1236.2px;top:141px;overflow:visible" width="16" height="16" viewBox="0 0 16 16" opacity="0.78"><g transform="translate(-1 -2) scale(0.72) rotate(-35 8 8)"><path d="M3 8 H13" stroke="#2a2a2a" stroke-width="4.4" stroke-linecap="round"/><circle cx="2.4" cy="6" r="2.1" fill="#2a2a2a"/><circle cx="2.4" cy="10" r="2.1" fill="#2a2a2a"/><circle cx="13.6" cy="6" r="2.1" fill="#2a2a2a"/><circle cx="13.6" cy="10" r="2.1" fill="#2a2a2a"/><path d="M3 8 H13" stroke="#c8c8c8" stroke-width="2.6" stroke-linecap="round"/><circle cx="2.4" cy="6" r="1.3" fill="#c8c8c8"/><circle cx="2.4" cy="10" r="1.3" fill="#c8c8c8"/><circle cx="13.6" cy="6" r="1.3" fill="#c8c8c8"/><circle cx="13.6" cy="10" r="1.3" fill="#c8c8c8"/></g><g transform="translate(4.4 5.6) scale(0.7) rotate(-30 8 8)"><rect x="0.6" y="5.2" width="8.4" height="5.6" rx="2.8" fill="none" stroke="#2a2a2a" stroke-width="3"/><rect x="7" y="5.2" width="8.4" height="5.6" rx="2.8" fill="none" stroke="#2a2a2a" stroke-width="3"/><rect x="0.6" y="5.2" width="8.4" height="5.6" rx="2.8" fill="none" stroke="#d0d0d0" stroke-width="1.5"/><rect x="7" y="5.2" width="8.4" height="5.6" rx="2.8" fill="none" stroke="#d0d0d0" stroke-width="1.5"/></g></svg>
<svg style="left:1256.2px;top:141px;overflow:visible" width="16" height="16" viewBox="0 0 16 16" opacity="0.78"><rect x="1.4" y="1.8" width="13" height="12.6" fill="#c4c0bc" stroke="#3a3a3a" stroke-width="0.9"/><g fill="#8c3612"><rect x="2.6" y="3" width="2.6" height="2.6"/><rect x="7.8" y="3" width="2.6" height="2.6"/><rect x="5.2" y="5.6" width="2.6" height="2.6"/><rect x="10.4" y="5.6" width="2.6" height="2.6"/><rect x="2.6" y="8.2" width="2.6" height="2.6"/><rect x="7.8" y="8.2" width="2.6" height="2.6"/><rect x="5.2" y="10.8" width="2.6" height="2.4"/><rect x="10.4" y="10.8" width="2.6" height="2.4"/></g></svg>
<svg style="left:1276.2px;top:141px;overflow:visible" width="16" height="16" viewBox="0 0 16 16" opacity="0.78"><path d="M0.8 5.8 L3.8 4.4 L6.4 9.8 L8.8 5.2 L11.4 6.8 L6.8 15 Z" fill="#565c8a" stroke="#2a2e50" stroke-width="0.8"/><circle cx="11.4" cy="4.4" r="3.5" fill="#b8b8b8" stroke="#6a6a6a" stroke-width="0.7"/><circle cx="10.4" cy="3.4" r="1.4" fill="#e4e4e4"/></svg>
<div style="left:1025px;top:161px;width:325px;height:1px;background:#7c7c7c;"></div>
<svg style="left:1035px;top:171.6px;overflow:visible" width="16" height="16" viewBox="0 0 16 16"><path d="M0.8 15.2 L6.6 9.4" stroke="#111" stroke-width="2.6" stroke-linecap="round"/><path d="M0.9 15.1 L6.6 9.4" stroke="#f0f0f0" stroke-width="1.1" stroke-linecap="round"/><path d="M4 7 L7.6 5.4 L10.4 1.4 L15 6 L11 8.8 L9.4 12.4 Z" fill="#f2f2f2" stroke="#111" stroke-width="1.1" stroke-linejoin="round"/><path d="M8.4 6 L11 8.6 M10.4 3 L13.4 6" stroke="#8a8a8a" stroke-width="0.9"/></svg>
<svg style="left:1055.6px;top:172.2px;overflow:visible" width="16" height="16" viewBox="0 0 16 16"><circle cx="4.3" cy="3.4" r="2.9" fill="#a9b63c" opacity="0.75"/><circle cx="4.3" cy="3.4" r="1.5" fill="#f4f6ff"/><rect x="8.6" y="1.6" width="6.6" height="10.8" rx="1.6" fill="#3c70c4" stroke="#15275c" stroke-width="1"/><ellipse cx="11.9" cy="3.3" rx="2.6" ry="1.3" fill="#f2f6fc"/><rect x="9.6" y="4.6" width="1.6" height="6.5" fill="#a9c4ea" opacity="0.8"/><circle cx="7.2" cy="11.3" r="3.7" fill="#f0f0f0" stroke="#0a0a0a" stroke-width="1.1"/><circle cx="6.3" cy="10.4" r="1.6" fill="#fff"/><path d="M5 13.6 A3.2 3.2 0 0 0 10.2 11.9 A4.5 4.5 0 0 1 5 13.6Z" fill="#b4b4b4"/></svg>
<span class="t" style="left:1077.5px;top:173px;font-size:11px;color:#000;letter-spacing:-0.344px;">Scene</span>
<div style="left:1030px;top:197px;width:298px;height:1px;background:#4e4e4e;"></div>
<div style="left:1030px;top:198px;width:298px;height:1px;background:#7c7c7c;"></div>
<svg style="left:1038.5px;top:205.5px" width="8" height="8"><polygon points="0,0 8,0 4.0,8" fill="#1e1e1e"/></svg>
<span class="t" style="left:1051.5px;top:202px;font-size:12px;color:#000;">Render</span>
<svg style="left:1311px;top:208.5px" width="11" height="5" shape-rendering="crispEdges"><rect x="0" y="0" width="1" height="1" fill="#a8a8a8"/><rect x="1" y="1" width="1" height="1" fill="#4a4a4a"/><rect x="0" y="3" width="1" height="1" fill="#a8a8a8"/><rect x="1" y="4" width="1" height="1" fill="#4a4a4a"/><rect x="3" y="0" width="1" height="1" fill="#a8a8a8"/><rect x="4" y="1" width="1" height="1" fill="#4a4a4a"/><rect x="3" y="3" width="1" height="1" fill="#a8a8a8"/><rect x="4" y="4" width="1" height="1" fill="#4a4a4a"/><rect x="6" y="0" width="1" height="1" fill="#a8a8a8"/><rect x="7" y="1" width="1" height="1" fill="#4a4a4a"/><rect x="6" y="3" width="1" height="1" fill="#a8a8a8"/><rect x="7" y="4" width="1" height="1" fill="#4a4a4a"/><rect x="9" y="0" width="1" height="1" fill="#a8a8a8"/><rect x="10" y="1" width="1" height="1" fill="#4a4a4a"/><rect x="9" y="3" width="1" height="1" fill="#a8a8a8"/><rect x="10" y="4" width="1" height="1" fill="#4a4a4a"/></svg>
<div style="left:1033px;top:230px;width:290px;height:18px;background:linear-gradient(#a9a9a9,#8b8b8b);border:1px solid #2b2b2b;border-radius:4px;box-shadow:0 1px 0 rgba(255,255,255,0.13);"></div>
<div style="left:1129px;top:231px;width:1px;height:18px;background:#2b2b2b;"></div>
<div style="left:1226px;top:231px;width:1px;height:18px;background:#2b2b2b;"></div>
<span class="t" style="left:1070.95px;top:233px;font-size:11px;color:#000;">Render</span>
<span class="t" style="left:1161.53px;top:233px;font-size:11px;color:#000;">Animation</span>
<span class="t" style="left:1269.12px;top:233px;font-size:11px;color:#000;">Audio</span>
<svg style="left:1037px;top:232.6px;overflow:visible" width="16" height="16" viewBox="0 0 16 16"><rect x="1" y="4" width="12.6" height="9.4" rx="1" fill="#dedede" stroke="#111" stroke-width="1"/><rect x="2.2" y="2.8" width="3.6" height="1.6" fill="#e8e8e8" stroke="#111" stroke-width="0.8"/><rect x="1.6" y="6.2" width="11.4" height="6.6" fill="#4a4a4a"/><rect x="1.6" y="4.6" width="11.4" height="1.6" fill="#f0f0f0"/><circle cx="3.2" cy="6.2" r="0.9" fill="#e81010"/><circle cx="8.6" cy="9.4" r="3.5" fill="#d8d8d8" stroke="#111" stroke-width="0.9"/><circle cx="8.6" cy="9.4" r="2.1" fill="#5a3418"/><circle cx="7.8" cy="8.6" r="0.8" fill="#d8a070"/></svg>
<svg style="left:1045px;top:231.4px;overflow:visible" width="9" height="9" viewBox="0 0 16 16"><circle cx="4" cy="4" r="3.4" fill="#f09a28"/><path d="M4 0.8 L4.8 3.2 L7.2 4 L4.8 4.8 L4 7.2 L3.2 4.8 L0.8 4 L3.2 3.2 Z" fill="#fff"/></svg>
<svg style="left:1132.6px;top:232px;overflow:visible" width="16" height="16" viewBox="0 0 16 16"><rect x="2" y="7" width="12.6" height="7.6" fill="#3c3c3c" stroke="#111" stroke-width="1"/><rect x="2" y="7" width="12.6" height="2" fill="#f2f2f2" stroke="#111" stroke-width="0.8"/><path d="M4.4 7 L5.6 9 M7.4 7 L8.6 9 M10.4 7 L11.6 9" stroke="#111" stroke-width="1.2"/><path d="M1.6 6.6 L13.6 1.8 L14.3 3.6 L2.3 8.4 Z" fill="#f2f2f2" stroke="#111" stroke-width="0.9"/><path d="M4.2 5.6 L6 6.9 M7.2 4.4 L9 5.7 M10.2 3.2 L12 4.5" stroke="#111" stroke-width="1.3"/><path d="M1.4 5.4 L2.6 8.4" stroke="#4a8ae0" stroke-width="1.6"/><rect x="5" y="11.4" width="6.6" height="1.7" fill="#8a8a8a"/><path d="M9.4 10.6 V14" stroke="#bbb" stroke-width="0.7"/></svg>
<svg style="left:1229.6px;top:232px;overflow:visible" width="16" height="16" viewBox="0 0 16 16"><path d="M1.2 5.6 H4 L7.6 2 V14 L4 10.4 H1.2 Z" fill="#e8e8e8" stroke="#1a1a1a" stroke-width="1" stroke-linejoin="round"/><path d="M9.6 5 A4 4 0 0 1 9.6 11" fill="none" stroke="#7088c8" stroke-width="1.2"/><path d="M11.4 3 A6.6 6.6 0 0 1 11.4 13" fill="none" stroke="#8a9cd0" stroke-width="1.2"/></svg>
<span class="t" style="left:1040px;top:258px;font-size:11px;color:#000;">Display:</span>
<div style="left:1134px;top:255px;width:189px;height:18px;background:linear-gradient(#a9a9a9,#8b8b8b);border:1px solid #2b2b2b;border-radius:4px;box-shadow:0 1px 0 rgba(255,255,255,0.13);"></div>
<div style="left:1135px;top:256px;width:169px;height:18px;background:linear-gradient(#565656,#373737);border-radius:3px 0 0 3px;"></div>
<div style="left:1304px;top:256px;width:1px;height:18px;background:#2b2b2b;"></div>
<span class="t" style="left:1142.4px;top:258px;font-size:11px;color:#fff;">Image Editor</span>
<svg style="left:1296px;top:258.6px" width="5.6" height="12.8"><polygon points="0,5.2 2.8,0 5.6,5.2" fill="#b4b4b4"/><polygon points="0,7.6 2.8,12.8 5.6,7.6" fill="#b4b4b4"/></svg>
<svg style="left:1307px;top:258px" width="16" height="16" viewBox="0 0 16 16"><path d="M2.5 7.5 V4.2 a2.6 2.6 0 0 1 5.2 0 V5.5" fill="none" stroke="#1a1a1a" stroke-width="2.6"/><path d="M2.5 7.5 V4.2 a2.6 2.6 0 0 1 5.2 0 V5.5" fill="none" stroke="#e8e8e8" stroke-width="1.1"/><rect x="5.5" y="7.5" width="10" height="6.6" fill="#e4e4e4" stroke="#1a1a1a" stroke-width="1"/><rect x="6.5" y="10.8" width="8" height="2.8" fill="#b8b8b8"/><rect x="9.9" y="9.3" width="1.4" height="2.4" fill="#222"/></svg>
<div style="left:1030px;top:283px;width:298px;height:1px;background:#4e4e4e;"></div>
<div style="left:1030px;top:284px;width:298px;height:1px;background:#7c7c7c;"></div>
<svg style="left:1038.5px;top:291px" width="8" height="8"><polygon points="0,0 8,0 4.0,8" fill="#1e1e1e"/></svg>
<span class="t" style="left:1051.5px;top:287px;font-size:12px;color:#000;">Dimensions</span>
<svg style="left:1311px;top:294px" width="11" height="5" shape-rendering="crispEdges"><rect x="0" y="0" width="1" height="1" fill="#a8a8a8"/><rect x="1" y="1" width="1" height="1" fill="#4a4a4a"/><rect x="0" y="3" width="1" height="1" fill="#a8a8a8"/><rect x="1" y="4" width="1" height="1" fill="#4a4a4a"/><rect x="3" y="0" width="1" height="1" fill="#a8a8a8"/><rect x="4" y="1" width="1" height="1" fill="#4a4a4a"/><rect x="3" y="3" width="1" height="1" fill="#a8a8a8"/><rect x="4" y="4" width="1" height="1" fill="#4a4a4a"/><rect x="6" y="0" width="1" height="1" fill="#a8a8a8"/><rect x="7" y="1" width="1" height="1" fill="#4a4a4a"/><rect x="6" y="3" width="1" height="1" fill="#a8a8a8"/><rect x="7" y="4" width="1" height="1" fill="#4a4a4a"/><rect x="9" y="0" width="1" height="1" fill="#a8a8a8"/><rect x="10" y="1" width="1" height="1" fill="#4a4a4a"/><rect x="9" y="3" width="1" height="1" fill="#a8a8a8"/><rect x="10" y="4" width="1" height="1" fill="#4a4a4a"/></svg>
<div style="left:1033px;top:315px;width:290px;height:18px;background:linear-gradient(#a9a9a9,#8b8b8b);border:1px solid #2b2b2b;border-radius:4px;box-shadow:0 1px 0 rgba(255,255,255,0.13);"></div>
<div style="left:1034px;top:316px;width:250px;height:18px;background:linear-gradient(#565656,#373737);border-radius:3px 0 0 3px;"></div>
<div style="left:1284px;top:316px;width:1px;height:18px;background:#2b2b2b;"></div>
<div style="left:1304px;top:316px;width:1px;height:18px;background:#2b2b2b;"></div>
<span class="t" style="left:1040px;top:318px;font-size:11px;color:#fff;">Render Presets</span>
<svg style="left:1275px;top:319.1px" width="5.6" height="12.8"><polygon points="0,5.2 2.8,0 5.6,5.2" fill="#b4b4b4"/><polygon points="0,7.6 2.8,12.8 5.6,7.6" fill="#b4b4b4"/></svg>
<svg style="left:1287px;top:318px" width="14" height="14" viewBox="0 0 14 14"><path d="M7 1 V13 M1 7 H13" stroke="#1a1a1a" stroke-width="4.6"/><path d="M7 2 V12 M2 7 H12" stroke="#f2f2f2" stroke-width="2.4"/></svg>
<svg style="left:1308px;top:318px" width="14" height="14" viewBox="0 0 14 14"><path d="M1 7 H13" stroke="#1a1a1a" stroke-width="4.6"/><path d="M2 7 H12" stroke="#f2f2f2" stroke-width="2.4"/></svg>
<span class="t" style="left:1040px;top:343px;font-size:11px;color:#000;">Resolution:</span>
<span class="t" style="left:1191.4px;top:343px;font-size:11px;color:#000;">Frame Range:</span>
<div style="left:1033px;top:360px;width:140px;height:58px;background:linear-gradient(#9f9f9f,#b6b6b6);border:1px solid #2b2b2b;border-radius:9px;box-shadow:0 1px 0 rgba(255,255,255,0.13);"></div>
<div style="left:1034px;top:361px;width:140px;height:18px;background:linear-gradient(#9f9f9f,#b6b6b6);border-radius:8px 8px 0 0;"></div>
<svg style="left:1039px;top:366.5px" width="4" height="7"><polygon points="4,0 0,3.5 4,7" fill="#7a7a7a"/></svg>
<svg style="left:1165px;top:366.5px" width="4" height="7"><polygon points="0,0 4,3.5 0,7" fill="#7a7a7a"/></svg>
<span class="t" style="left:1049px;top:363px;font-size:11px;color:#000;">X:</span>
<span class="t" style="left:1116.33px;top:363px;font-size:11px;color:#000;letter-spacing:0.354px;">1920 px</span>
<div style="left:1034px;top:380px;width:140px;height:19px;background:linear-gradient(#9f9f9f,#b6b6b6);border-radius:0;"></div>
<div style="left:1034px;top:379px;width:140px;height:1px;background:#2b2b2b;"></div>
<svg style="left:1039px;top:386px" width="4" height="7"><polygon points="4,0 0,3.5 4,7" fill="#7a7a7a"/></svg>
<svg style="left:1165px;top:386px" width="4" height="7"><polygon points="0,0 4,3.5 0,7" fill="#7a7a7a"/></svg>
<span class="t" style="left:1049px;top:382px;font-size:11px;color:#000;">Y:</span>
<span class="t" style="left:1116.33px;top:382px;font-size:11px;color:#000;letter-spacing:0.354px;">1080 px</span>
<div style="left:1034px;top:400px;width:140px;height:19px;background:linear-gradient(#9f9f9f,#b6b6b6);border-radius:0 0 8px 8px;"></div>
<div style="left:1034px;top:399px;width:140px;height:1px;background:#2b2b2b;"></div>
<svg style="left:1039px;top:406px" width="4" height="7"><polygon points="4,0 0,3.5 4,7" fill="#7a7a7a"/></svg>
<svg style="left:1165px;top:406px" width="4" height="7"><polygon points="0,0 4,3.5 0,7" fill="#7a7a7a"/></svg>
<span class="t" style="left:1134.73px;top:402px;font-size:11px;color:#000;letter-spacing:0.413px;">50%</span>
<div style="left:1034px;top:400px;width:73px;height:18px;background:linear-gradient(#6e6e6e,#7e7e7e);border-radius:0 0 0 8px;"></div>
<div style="left:1183px;top:360px;width:140px;height:58px;background:linear-gradient(#9f9f9f,#b6b6b6);border:1px solid #2b2b2b;border-radius:9px;box-shadow:0 1px 0 rgba(255,255,255,0.13);"></div>
<div style="left:1184px;top:361px;width:140px;height:18px;background:linear-gradient(#9f9f9f,#b6b6b6);border-radius:8px 8px 0 0;"></div>
<svg style="left:1189px;top:366.5px" width="4" height="7"><polygon points="4,0 0,3.5 4,7" fill="#7a7a7a"/></svg>
<svg style="left:1315px;top:366.5px" width="4" height="7"><polygon points="0,0 4,3.5 0,7" fill="#7a7a7a"/></svg>
<span class="t" style="left:1199px;top:363px;font-size:11px;color:#000;">Start Frame:</span>
<span class="t" style="left:1301.88px;top:363px;font-size:11px;color:#000;">1</span>
<div style="left:1184px;top:380px;width:140px;height:19px;background:linear-gradient(#9f9f9f,#b6b6b6);border-radius:0;"></div>
<div style="left:1184px;top:379px;width:140px;height:1px;background:#2b2b2b;"></div>
<svg style="left:1189px;top:386px" width="4" height="7"><polygon points="4,0 0,3.5 4,7" fill="#7a7a7a"/></svg>
<svg style="left:1315px;top:386px" width="4" height="7"><polygon points="0,0 4,3.5 0,7" fill="#7a7a7a"/></svg>
<span class="t" style="left:1199px;top:382px;font-size:11px;color:#000;">End Frame:</span>
<span class="t" style="left:1287.77px;top:382px;font-size:11px;color:#000;letter-spacing:0.620px;">250</span>
<div style="left:1184px;top:400px;width:140px;height:19px;background:linear-gradient(#9f9f9f,#b6b6b6);border-radius:0 0 8px 8px;"></div>
<div style="left:1184px;top:399px;width:140px;height:1px;background:#2b2b2b;"></div>
<svg style="left:1189px;top:406px" width="4" height="7"><polygon points="4,0 0,3.5 4,7" fill="#7a7a7a"/></svg>
<svg style="left:1315px;top:406px" width="4" height="7"><polygon points="0,0 4,3.5 0,7" fill="#7a7a7a"/></svg>
<span class="t" style="left:1199px;top:402px;font-size:11px;color:#000;">Frame Step:</span>
<span class="t" style="left:1301.88px;top:402px;font-size:11px;color:#000;">1</span>
<span class="t" style="left:1040px;top:423px;font-size:11px;color:#000;">Aspect Ratio:</span>
<span class="t" style="left:1191.4px;top:423px;font-size:11px;color:#000;">Frame Rate:</span>
<div style="left:1033px;top:440px;width:140px;height:38px;background:linear-gradient(#9f9f9f,#b6b6b6);border:1px solid #2b2b2b;border-radius:9px;box-shadow:0 1px 0 rgba(255,255,255,0.13);"></div>
<div style="left:1034px;top:441px;width:140px;height:18px;background:linear-gradient(#9f9f9f,#b6b6b6);border-radius:8px 8px 0 0;"></div>
<svg style="left:1039px;top:446.5px" width="4" height="7"><polygon points="4,0 0,3.5 4,7" fill="#7a7a7a"/></svg>
<svg style="left:1165px;top:446.5px" width="4" height="7"><polygon points="0,0 4,3.5 0,7" fill="#7a7a7a"/></svg>
<span class="t" style="left:1049px;top:443px;font-size:11px;color:#000;">X:</span>
<span class="t" style="left:1127.96px;top:443px;font-size:11px;color:#000;letter-spacing:0.496px;">1.000</span>
<div style="left:1034px;top:460px;width:140px;height:19px;background:linear-gradient(#9f9f9f,#b6b6b6);border-radius:0 0 8px 8px;"></div>
<div style="left:1034px;top:459px;width:140px;height:1px;background:#2b2b2b;"></div>
<svg style="left:1039px;top:466px" width="4" height="7"><polygon points="4,0 0,3.5 4,7" fill="#7a7a7a"/></svg>
<svg style="left:1165px;top:466px" width="4" height="7"><polygon points="0,0 4,3.5 0,7" fill="#7a7a7a"/></svg>
<span class="t" style="left:1049px;top:462px;font-size:11px;color:#000;">Y:</span>
<span class="t" style="left:1127.96px;top:462px;font-size:11px;color:#000;letter-spacing:0.496px;">1.000</span>
<div style="left:1183px;top:440px;width:140px;height:18px;background:linear-gradient(#565656,#373737);border:1px solid #2b2b2b;border-radius:4px;box-shadow:0 1px 0 rgba(255,255,255,0.13);"></div>
<span class="t" style="left:1191px;top:443px;font-size:11px;color:#fff;">24 fps</span>
<svg style="left:1316px;top:443.6px" width="5.6" height="12.8"><polygon points="0,5.2 2.8,0 5.6,5.2" fill="#b4b4b4"/><polygon points="0,7.6 2.8,12.8 5.6,7.6" fill="#b4b4b4"/></svg>
<span class="t" style="left:1191.4px;top:463px;font-size:11px;color:#000;">Time Remapping:</span>
<div style="left:1183px;top:480px;width:140px;height:18px;background:linear-gradient(#9f9f9f,#b6b6b6);border:1px solid #2b2b2b;border-radius:9px;box-shadow:0 1px 0 rgba(255,255,255,0.13);"></div>
<div style="left:1253px;top:481px;width:1px;height:18px;background:#2b2b2b;"></div>
<svg style="left:1189px;top:486.5px" width="4" height="7"><polygon points="4,0 0,3.5 4,7" fill="#7a7a7a"/></svg>
<svg style="left:1245px;top:486.5px" width="4" height="7"><polygon points="0,0 4,3.5 0,7" fill="#7a7a7a"/></svg>
<svg style="left:1259px;top:486.5px" width="4" height="7"><polygon points="4,0 0,3.5 4,7" fill="#7a7a7a"/></svg>
<svg style="left:1315px;top:486.5px" width="4" height="7"><polygon points="0,0 4,3.5 0,7" fill="#7a7a7a"/></svg>
<span class="t" style="left:1199px;top:483px;font-size:11px;color:#000;letter-spacing:0.266px;">Ol: 100</span>
<span class="t" style="left:1268px;top:483px;font-size:11px;color:#000;letter-spacing:0.348px;">Ne: 100</span>
<div style="left:1036.5px;top:485px;width:12px;height:12px;background:linear-gradient(#575757,#3a3a3a);border:1px solid #2b2b2b;border-radius:3.5px;box-shadow:0 1px 0 rgba(255,255,255,0.13);"></div>
<span class="t" style="left:1058.3px;top:485px;font-size:11px;color:#000;">Border</span>
<div style="left:1111px;top:485px;width:12px;height:12px;background:linear-gradient(#575757,#3a3a3a);border:1px solid #2b2b2b;border-radius:3.5px;box-shadow:0 1px 0 rgba(255,255,255,0.13);"></div>
<div style="left:1111px;top:485px;width:15px;height:15px;background:rgba(114,114,114,0.55);"></div>
<span class="t" style="left:1133.3px;top:485px;font-size:11px;color:#4a4a4a;">Crop</span>
<div style="left:1030px;top:509px;width:298px;height:1px;background:#4e4e4e;"></div>
<div style="left:1030px;top:510px;width:298px;height:1px;background:#7c7c7c;"></div>
<svg style="left:1038.5px;top:517.5px" width="8" height="8"><polygon points="0,0 8,0 4.0,8" fill="#1e1e1e"/></svg>
<div style="left:1050.5px;top:514.5px;width:12px;height:12px;background:linear-gradient(#575757,#3a3a3a);border:1px solid #2b2b2b;border-radius:3.5px;box-shadow:0 1px 0 rgba(255,255,255,0.13);"></div>
<svg style="left:1050.5px;top:511.5px" width="18" height="18"><path d="M3.3 9.6 L6.3 13.2 L12.4 4" stroke="#fff" stroke-width="2" fill="none" stroke-linecap="round" stroke-linejoin="round"/></svg>
<span class="t" style="left:1070.5px;top:514px;font-size:12px;color:#000;">Anti-Aliasing</span>
<svg style="left:1311px;top:520.5px" width="11" height="5" shape-rendering="crispEdges"><rect x="0" y="0" width="1" height="1" fill="#a8a8a8"/><rect x="1" y="1" width="1" height="1" fill="#4a4a4a"/><rect x="0" y="3" width="1" height="1" fill="#a8a8a8"/><rect x="1" y="4" width="1" height="1" fill="#4a4a4a"/><rect x="3" y="0" width="1" height="1" fill="#a8a8a8"/><rect x="4" y="1" width="1" height="1" fill="#4a4a4a"/><rect x="3" y="3" width="1" height="1" fill="#a8a8a8"/><rect x="4" y="4" width="1" height="1" fill="#4a4a4a"/><rect x="6" y="0" width="1" height="1" fill="#a8a8a8"/><rect x="7" y="1" width="1" height="1" fill="#4a4a4a"/><rect x="6" y="3" width="1" height="1" fill="#a8a8a8"/><rect x="7" y="4" width="1" height="1" fill="#4a4a4a"/><rect x="9" y="0" width="1" height="1" fill="#a8a8a8"/><rect x="10" y="1" width="1" height="1" fill="#4a4a4a"/><rect x="9" y="3" width="1" height="1" fill="#a8a8a8"/><rect x="10" y="4" width="1" height="1" fill="#4a4a4a"/></svg>
<div style="left:1033px;top:542px;width:140px;height:18px;background:linear-gradient(#555,#383838);border:1px solid #2b2b2b;border-radius:4px;box-shadow:0 1px 0 rgba(255,255,255,0.13);"></div>
<div style="left:1067px;top:543px;width:1px;height:18px;background:#2b2b2b;"></div>
<div style="left:1103px;top:543px;width:1px;height:18px;background:#2b2b2b;"></div>
<div style="left:1138px;top:543px;width:1px;height:18px;background:#2b2b2b;"></div>
<div style="left:1068px;top:543px;width:35px;height:18px;background:linear-gradient(#4a73b3,#648dcf);"></div>
<span class="t" style="left:1047.44px;top:545px;font-size:11px;color:#fff;">5</span>
<span class="t" style="left:1082.44px;top:545px;font-size:11px;color:#fff;">8</span>
<span class="t" style="left:1114.66px;top:545px;font-size:11px;color:#fff;letter-spacing:0.620px;">11</span>
<span class="t" style="left:1149.76px;top:545px;font-size:11px;color:#fff;letter-spacing:0.620px;">16</span>
<div style="left:1183px;top:542px;width:140px;height:18px;background:linear-gradient(#565656,#373737);border:1px solid #2b2b2b;border-radius:4px;box-shadow:0 1px 0 rgba(255,255,255,0.13);"></div>
<span class="t" style="left:1191px;top:545px;font-size:11px;color:#fff;">Mitchell-Netravali</span>
<svg style="left:1316px;top:545.6px" width="5.6" height="12.8"><polygon points="0,5.2 2.8,0 5.6,5.2" fill="#b4b4b4"/><polygon points="0,7.6 2.8,12.8 5.6,7.6" fill="#b4b4b4"/></svg>
<div style="left:1036.5px;top:567px;width:12px;height:12px;background:linear-gradient(#575757,#3a3a3a);border:1px solid #2b2b2b;border-radius:3.5px;box-shadow:0 1px 0 rgba(255,255,255,0.13);"></div>
<span class="t" style="left:1058.4px;top:567px;font-size:11px;color:#000;">Full Sample</span>
<div style="left:1183px;top:564px;width:140px;height:18px;background:linear-gradient(#9f9f9f,#b6b6b6);border:1px solid #2b2b2b;border-radius:9px;box-shadow:0 1px 0 rgba(255,255,255,0.13);"></div>
<svg style="left:1189px;top:570.5px" width="4" height="7"><polygon points="4,0 0,3.5 4,7" fill="#7a7a7a"/></svg>
<svg style="left:1315px;top:570.5px" width="4" height="7"><polygon points="0,0 4,3.5 0,7" fill="#7a7a7a"/></svg>
<span class="t" style="left:1199px;top:567px;font-size:11px;color:#000;">Size:</span>
<span class="t" style="left:1263.27px;top:567px;font-size:11px;color:#000;letter-spacing:0.310px;">1.000 px</span>
<div style="left:1030px;top:591px;width:298px;height:1px;background:#4e4e4e;"></div>
<div style="left:1030px;top:592px;width:298px;height:1px;background:#7c7c7c;"></div>
<svg style="left:1038px;top:599.6px" width="8" height="8"><polygon points="0,0 8,4.0 0,8" fill="#1e1e1e"/></svg>
<div style="left:1050px;top:596.6px;width:12px;height:12px;background:linear-gradient(#575757,#3a3a3a);border:1px solid #2b2b2b;border-radius:3.5px;box-shadow:0 1px 0 rgba(255,255,255,0.13);"></div>
<span class="t" style="left:1070px;top:596px;font-size:12px;color:#000;">Sampled Motion Blur</span>
<svg style="left:1311px;top:602.6px" width="11" height="5" shape-rendering="crispEdges"><rect x="0" y="0" width="1" height="1" fill="#a8a8a8"/><rect x="1" y="1" width="1" height="1" fill="#4a4a4a"/><rect x="0" y="3" width="1" height="1" fill="#a8a8a8"/><rect x="1" y="4" width="1" height="1" fill="#4a4a4a"/><rect x="3" y="0" width="1" height="1" fill="#a8a8a8"/><rect x="4" y="1" width="1" height="1" fill="#4a4a4a"/><rect x="3" y="3" width="1" height="1" fill="#a8a8a8"/><rect x="4" y="4" width="1" height="1" fill="#4a4a4a"/><rect x="6" y="0" width="1" height="1" fill="#a8a8a8"/><rect x="7" y="1" width="1" height="1" fill="#4a4a4a"/><rect x="6" y="3" width="1" height="1" fill="#a8a8a8"/><rect x="7" y="4" width="1" height="1" fill="#4a4a4a"/><rect x="9" y="0" width="1" height="1" fill="#a8a8a8"/><rect x="10" y="1" width="1" height="1" fill="#4a4a4a"/><rect x="9" y="3" width="1" height="1" fill="#a8a8a8"/><rect x="10" y="4" width="1" height="1" fill="#4a4a4a"/></svg>
<div style="left:1030px;top:615.5px;width:298px;height:1px;background:#4e4e4e;"></div>
<div style="left:1030px;top:616.5px;width:298px;height:1px;background:#7c7c7c;"></div>
<svg style="left:1038px;top:624px" width="8" height="8"><polygon points="0,0 8,4.0 0,8" fill="#1e1e1e"/></svg>
<span class="t" style="left:1051px;top:620px;font-size:12px;color:#000;">Shading</span>
<svg style="left:1311px;top:627px" width="11" height="5" shape-rendering="crispEdges"><rect x="0" y="0" width="1" height="1" fill="#a8a8a8"/><rect x="1" y="1" width="1" height="1" fill="#4a4a4a"/><rect x="0" y="3" width="1" height="1" fill="#a8a8a8"/><rect x="1" y="4" width="1" height="1" fill="#4a4a4a"/><rect x="3" y="0" width="1" height="1" fill="#a8a8a8"/><rect x="4" y="1" width="1" height="1" fill="#4a4a4a"/><rect x="3" y="3" width="1" height="1" fill="#a8a8a8"/><rect x="4" y="4" width="1" height="1" fill="#4a4a4a"/><rect x="6" y="0" width="1" height="1" fill="#a8a8a8"/><rect x="7" y="1" width="1" height="1" fill="#4a4a4a"/><rect x="6" y="3" width="1" height="1" fill="#a8a8a8"/><rect x="7" y="4" width="1" height="1" fill="#4a4a4a"/><rect x="9" y="0" width="1" height="1" fill="#a8a8a8"/><rect x="10" y="1" width="1" height="1" fill="#4a4a4a"/><rect x="9" y="3" width="1" height="1" fill="#a8a8a8"/><rect x="10" y="4" width="1" height="1" fill="#4a4a4a"/></svg>
<div style="left:1030px;top:640px;width:298px;height:1px;background:#4e4e4e;"></div>
<div style="left:1030px;top:641px;width:298px;height:1px;background:#7c7c7c;"></div>
<svg style="left:1038px;top:648px" width="8" height="8"><polygon points="0,0 8,4.0 0,8" fill="#1e1e1e"/></svg>
<span class="t" style="left:1051px;top:644px;font-size:12px;color:#000;">Performance</span>
<svg style="left:1311px;top:651px" width="11" height="5" shape-rendering="crispEdges"><rect x="0" y="0" width="1" height="1" fill="#a8a8a8"/><rect x="1" y="1" width="1" height="1" fill="#4a4a4a"/><rect x="0" y="3" width="1" height="1" fill="#a8a8a8"/><rect x="1" y="4" width="1" height="1" fill="#4a4a4a"/><rect x="3" y="0" width="1" height="1" fill="#a8a8a8"/><rect x="4" y="1" width="1" height="1" fill="#4a4a4a"/><rect x="3" y="3" width="1" height="1" fill="#a8a8a8"/><rect x="4" y="4" width="1" height="1" fill="#4a4a4a"/><rect x="6" y="0" width="1" height="1" fill="#a8a8a8"/><rect x="7" y="1" width="1" height="1" fill="#4a4a4a"/><rect x="6" y="3" width="1" height="1" fill="#a8a8a8"/><rect x="7" y="4" width="1" height="1" fill="#4a4a4a"/><rect x="9" y="0" width="1" height="1" fill="#a8a8a8"/><rect x="10" y="1" width="1" height="1" fill="#4a4a4a"/><rect x="9" y="3" width="1" height="1" fill="#a8a8a8"/><rect x="10" y="4" width="1" height="1" fill="#4a4a4a"/></svg>
<div style="left:1030px;top:663.5px;width:298px;height:1px;background:#4e4e4e;"></div>
<div style="left:1030px;top:664.5px;width:298px;height:1px;background:#7c7c7c;"></div>
<svg style="left:1038px;top:673px" width="8" height="8"><polygon points="0,0 8,4.0 0,8" fill="#1e1e1e"/></svg>
<span class="t" style="left:1051px;top:669px;font-size:12px;color:#000;">Post Processing</span>
<svg style="left:1311px;top:676px" width="11" height="5" shape-rendering="crispEdges"><rect x="0" y="0" width="1" height="1" fill="#a8a8a8"/><rect x="1" y="1" width="1" height="1" fill="#4a4a4a"/><rect x="0" y="3" width="1" height="1" fill="#a8a8a8"/><rect x="1" y="4" width="1" height="1" fill="#4a4a4a"/><rect x="3" y="0" width="1" height="1" fill="#a8a8a8"/><rect x="4" y="1" width="1" height="1" fill="#4a4a4a"/><rect x="3" y="3" width="1" height="1" fill="#a8a8a8"/><rect x="4" y="4" width="1" height="1" fill="#4a4a4a"/><rect x="6" y="0" width="1" height="1" fill="#a8a8a8"/><rect x="7" y="1" width="1" height="1" fill="#4a4a4a"/><rect x="6" y="3" width="1" height="1" fill="#a8a8a8"/><rect x="7" y="4" width="1" height="1" fill="#4a4a4a"/><rect x="9" y="0" width="1" height="1" fill="#a8a8a8"/><rect x="10" y="1" width="1" height="1" fill="#4a4a4a"/><rect x="9" y="3" width="1" height="1" fill="#a8a8a8"/><rect x="10" y="4" width="1" height="1" fill="#4a4a4a"/></svg>
<div style="left:1030px;top:688px;width:298px;height:1px;background:#4e4e4e;"></div>
<div style="left:1030px;top:689px;width:298px;height:1px;background:#7c7c7c;"></div>
<div style="left:1334px;top:167px;width:11px;height:516px;background:#5c5c5c;border:1px solid #3a3a3a;border-radius:6.5px;"></div>
<div style="left:1334px;top:167px;width:11px;height:349px;background:linear-gradient(90deg,#9c9c9c,#8a8a8a 40%,#6c6c6c);border:1px solid #2e2e2e;border-radius:6.5px;"></div>
<svg style="left:1338px;top:137px" width="12" height="12"><path d="M1 0 L12 11" stroke="#d0d0d0" stroke-width="1" opacity="0.75"/><path d="M2 0 L12 10" stroke="#222" stroke-width="1.1" opacity="0.9"/><path d="M4 0 L12 8" stroke="#d0d0d0" stroke-width="1" opacity="0.75"/><path d="M5 0 L12 7" stroke="#222" stroke-width="1.1" opacity="0.9"/><path d="M7 0 L12 5" stroke="#d0d0d0" stroke-width="1" opacity="0.75"/><path d="M8 0 L12 4" stroke="#222" stroke-width="1.1" opacity="0.9"/><path d="M10 0 L12 2" stroke="#d0d0d0" stroke-width="1" opacity="0.75"/><path d="M11 0 L12 1" stroke="#222" stroke-width="1.1" opacity="0.9"/></svg>
<svg style="left:1025px;top:677px" width="12" height="12"><path d="M0 1 L11 12" stroke="#d0d0d0" stroke-width="1" opacity="0.75"/><path d="M0 2 L10 12" stroke="#222" stroke-width="1.1" opacity="0.9"/><path d="M0 4 L8 12" stroke="#d0d0d0" stroke-width="1" opacity="0.75"/><path d="M0 5 L7 12" stroke="#222" stroke-width="1.1" opacity="0.9"/><path d="M0 7 L5 12" stroke="#d0d0d0" stroke-width="1" opacity="0.75"/><path d="M0 8 L4 12" stroke="#222" stroke-width="1.1" opacity="0.9"/><path d="M0 10 L2 12" stroke="#d0d0d0" stroke-width="1" opacity="0.75"/><path d="M0 11 L1 12" stroke="#222" stroke-width="1.1" opacity="0.9"/></svg>
<div style="left:0px;top:0px;width:1350px;height:26px;background:#727272;"></div>
<div style="left:0px;top:0px;width:1350px;height:1px;background:#858585;"></div>
<div style="left:0px;top:26px;width:1350px;height:1px;background:#1a1a1a;"></div>
<div style="left:0px;top:27px;width:1350px;height:1px;background:#7a7a7a;"></div>
<div style="left:8px;top:4px;width:30px;height:18px;background:linear-gradient(#565656,#373737);border:1px solid #2b2b2b;border-radius:4px;box-shadow:0 1px 0 rgba(255,255,255,0.13);"></div>
<svg style="left:31px;top:7.6px" width="5.6" height="12.8"><polygon points="0,5.2 2.8,0 5.6,5.2" fill="#b4b4b4"/><polygon points="0,7.6 2.8,12.8 5.6,7.6" fill="#b4b4b4"/></svg>
<svg style="left:12px;top:5.8px;overflow:visible" width="16" height="16" viewBox="0 0 16 16"><circle cx="8" cy="8" r="6.7" fill="#f4f4f4" stroke="#0c0c0c" stroke-width="1.1"/><circle cx="8" cy="8" r="5.1" fill="#3463ad"/><path d="M4 6 A4.6 4.6 0 0 1 12 6 Z" fill="#234a8c" opacity="0.7"/><circle cx="8" cy="4.9" r="1.35" fill="#fff"/><path d="M6.3 7 H9.2 V11 H10 V12.1 H6.2 V11 H7 V8.1 H6.3 Z" fill="#fff"/></svg>
<span class="t" style="left:52.4px;top:7px;font-size:11px;color:#000;letter-spacing:0.070px;">File</span>
<span class="t" style="left:90px;top:7px;font-size:11px;color:#000;letter-spacing:-0.182px;">Render</span>
<span class="t" style="left:145px;top:7px;font-size:11px;color:#000;letter-spacing:0.229px;">Window</span>
<span class="t" style="left:205px;top:7px;font-size:11px;color:#000;letter-spacing:0.344px;">Help</span>
<div style="left:241px;top:4px;width:190px;height:18px;background:linear-gradient(#999,#b3b3b3);border:1px solid #2b2b2b;border-radius:4px;box-shadow:0 1px 0 rgba(255,255,255,0.13);"></div>
<div style="left:242px;top:5px;width:30px;height:18px;background:linear-gradient(#565656,#373737);border-radius:3px 0 0 3px;"></div>
<div style="left:272px;top:5px;width:1px;height:18px;background:#2b2b2b;"></div>
<svg style="left:263px;top:7.6px" width="5.6" height="12.8"><polygon points="0,5.2 2.8,0 5.6,5.2" fill="#b4b4b4"/><polygon points="0,7.6 2.8,12.8 5.6,7.6" fill="#b4b4b4"/></svg>
<span class="t" style="left:280px;top:7px;font-size:11px;color:#000;">Default</span>
<div style="left:392px;top:5px;width:1px;height:18px;background:#2b2b2b;"></div>
<div style="left:393px;top:5px;width:19px;height:18px;background:linear-gradient(#a9a9a9,#8b8b8b);"></div>
<div style="left:412px;top:5px;width:1px;height:18px;background:#2b2b2b;"></div>
<div style="left:413px;top:5px;width:19px;height:18px;background:linear-gradient(#a9a9a9,#8b8b8b);border-radius:0 3px 3px 0;"></div>
<svg style="left:395px;top:7px" width="14" height="14" viewBox="0 0 14 14"><path d="M7 1 V13 M1 7 H13" stroke="#1a1a1a" stroke-width="4.6"/><path d="M7 2 V12 M2 7 H12" stroke="#f2f2f2" stroke-width="2.4"/></svg>
<svg style="left:415px;top:7px" width="14" height="14" viewBox="0 0 14 14"><path d="M2 2 L12 12 M12 2 L2 12" stroke="#1a1a1a" stroke-width="4.2"/><path d="M2.7 2.7 L11.3 11.3 M11.3 2.7 L2.7 11.3" stroke="#f2f2f2" stroke-width="2.1"/></svg>
<div style="left:439px;top:4px;width:189px;height:18px;background:linear-gradient(#999,#b3b3b3);border:1px solid #2b2b2b;border-radius:4px;box-shadow:0 1px 0 rgba(255,255,255,0.13);"></div>
<div style="left:440px;top:5px;width:29px;height:18px;background:linear-gradient(#565656,#373737);border-radius:3px 0 0 3px;"></div>
<div style="left:469px;top:5px;width:1px;height:18px;background:#2b2b2b;"></div>
<svg style="left:460px;top:7.6px" width="5.6" height="12.8"><polygon points="0,5.2 2.8,0 5.6,5.2" fill="#b4b4b4"/><polygon points="0,7.6 2.8,12.8 5.6,7.6" fill="#b4b4b4"/></svg>
<span class="t" style="left:477px;top:7px;font-size:11px;color:#000;">Scene</span>
<div style="left:589px;top:5px;width:1px;height:18px;background:#2b2b2b;"></div>
<div style="left:590px;top:5px;width:19px;height:18px;background:linear-gradient(#a9a9a9,#8b8b8b);"></div>
<div style="left:609px;top:5px;width:1px;height:18px;background:#2b2b2b;"></div>
<div style="left:610px;top:5px;width:19px;height:18px;background:linear-gradient(#a9a9a9,#8b8b8b);border-radius:0 3px 3px 0;"></div>
<svg style="left:592px;top:7px" width="14" height="14" viewBox="0 0 14 14"><path d="M7 1 V13 M1 7 H13" stroke="#1a1a1a" stroke-width="4.6"/><path d="M7 2 V12 M2 7 H12" stroke="#f2f2f2" stroke-width="2.4"/></svg>
<svg style="left:612px;top:7px" width="14" height="14" viewBox="0 0 14 14"><path d="M2 2 L12 12 M12 2 L2 12" stroke="#1a1a1a" stroke-width="4.2"/><path d="M2.7 2.7 L11.3 11.3 M11.3 2.7 L2.7 11.3" stroke="#f2f2f2" stroke-width="2.1"/></svg>
<svg style="left:245.4px;top:6.2px;overflow:visible" width="16" height="16" viewBox="0 0 16 16"><rect x="0.7" y="0.7" width="14" height="14.4" rx="1.6" fill="#0e0e0e"/><rect x="1.9" y="1.9" width="5.2" height="5.2" fill="#fafafa"/><rect x="1.9" y="8.3" width="5.2" height="5.6" fill="#fafafa"/><rect x="8.3" y="1.9" width="5.4" height="12" fill="#fafafa"/><rect x="2.9" y="2.9" width="3.2" height="3.2" fill="#d4d4d4"/><rect x="2.9" y="9.3" width="3.2" height="2.6" fill="#d4d4d4"/><rect x="9.3" y="2.9" width="3.4" height="8.8" fill="#cfcfcf"/><rect x="2.9" y="12.5" width="3.2" height="0.8" fill="#555"/><rect x="9.3" y="12.5" width="3.4" height="0.8" fill="#555"/></svg>
<svg style="left:441.6px;top:5.6px;overflow:visible" width="16" height="16" viewBox="0 0 16 16"><circle cx="4.3" cy="3.4" r="2.9" fill="#a9b63c" opacity="0.75"/><circle cx="4.3" cy="3.4" r="1.5" fill="#f4f6ff"/><rect x="8.6" y="1.6" width="6.6" height="10.8" rx="1.6" fill="#3c70c4" stroke="#15275c" stroke-width="1"/><ellipse cx="11.9" cy="3.3" rx="2.6" ry="1.3" fill="#f2f6fc"/><rect x="9.6" y="4.6" width="1.6" height="6.5" fill="#a9c4ea" opacity="0.8"/><circle cx="7.2" cy="11.3" r="3.7" fill="#f0f0f0" stroke="#0a0a0a" stroke-width="1.1"/><circle cx="6.3" cy="10.4" r="1.6" fill="#fff"/><path d="M5 13.6 A3.2 3.2 0 0 0 10.2 11.9 A4.5 4.5 0 0 1 5 13.6Z" fill="#b4b4b4"/></svg>
<div style="left:646px;top:4px;width:109px;height:18px;background:linear-gradient(#565656,#373737);border:1px solid #2b2b2b;border-radius:4px;box-shadow:0 1px 0 rgba(255,255,255,0.13);"></div>
<span class="t" style="left:654.5px;top:7px;font-size:11px;color:#fff;">Blender Render</span>
<svg style="left:748px;top:7.6px" width="5.6" height="12.8"><polygon points="0,5.2 2.8,0 5.6,5.2" fill="#b4b4b4"/><polygon points="0,7.6 2.8,12.8 5.6,7.6" fill="#b4b4b4"/></svg>
<svg style="left:776px;top:6.8px;overflow:visible" width="16" height="16" viewBox="0 0 16 16"><path d="M0.2 11.2 L6.2 5.6 M1.6 4.4 H8.8 M6.2 1 L10.2 4.6" stroke="#f8ddb0" stroke-width="2.9" stroke-linecap="round"/><path d="M0.2 11.2 L6.2 5.6 M1.6 4.4 H8.8 M6.2 1 L10.2 4.6" stroke="#f0932a" stroke-width="1.7" stroke-linecap="round"/><circle cx="9.1" cy="8.3" r="5.5" fill="#f0932a"/><ellipse cx="9.3" cy="8" rx="3.4" ry="3.3" fill="#fafafa"/><circle cx="9.3" cy="8" r="1.9" fill="#2a59b6"/></svg>
<span class="t" style="left:801px;top:7px;font-size:11px;color:#000;letter-spacing:0.235px;">v2.79 | Verts:1,126 | Faces:1,146 | Tris:2,196 | Objects:1/4 | Lamps:0/1 | Mem:25.00M | Armature</span>
<svg style="left:1338px;top:1px" width="12" height="12"><path d="M1 0 L12 11" stroke="#d0d0d0" stroke-width="1" opacity="0.75"/><path d="M2 0 L12 10" stroke="#222" stroke-width="1.1" opacity="0.9"/><path d="M4 0 L12 8" stroke="#d0d0d0" stroke-width="1" opacity="0.75"/><path d="M5 0 L12 7" stroke="#222" stroke-width="1.1" opacity="0.9"/><path d="M7 0 L12 5" stroke="#d0d0d0" stroke-width="1" opacity="0.75"/><path d="M8 0 L12 4" stroke="#222" stroke-width="1.1" opacity="0.9"/><path d="M10 0 L12 2" stroke="#d0d0d0" stroke-width="1" opacity="0.75"/><path d="M11 0 L12 1" stroke="#222" stroke-width="1.1" opacity="0.9"/></svg>
<svg style="left:0px;top:14px" width="12" height="12"><path d="M0 1 L11 12" stroke="#d0d0d0" stroke-width="1" opacity="0.75"/><path d="M0 2 L10 12" stroke="#222" stroke-width="1.1" opacity="0.9"/><path d="M0 4 L8 12" stroke="#d0d0d0" stroke-width="1" opacity="0.75"/><path d="M0 5 L7 12" stroke="#222" stroke-width="1.1" opacity="0.9"/><path d="M0 7 L5 12" stroke="#d0d0d0" stroke-width="1" opacity="0.75"/><path d="M0 8 L4 12" stroke="#222" stroke-width="1.1" opacity="0.9"/><path d="M0 10 L2 12" stroke="#d0d0d0" stroke-width="1" opacity="0.75"/><path d="M0 11 L1 12" stroke="#222" stroke-width="1.1" opacity="0.9"/></svg>
<div style="left:0px;top:0px;width:1px;height:689px;background:rgba(255,255,255,0.1);"></div>
</div></body></html>
